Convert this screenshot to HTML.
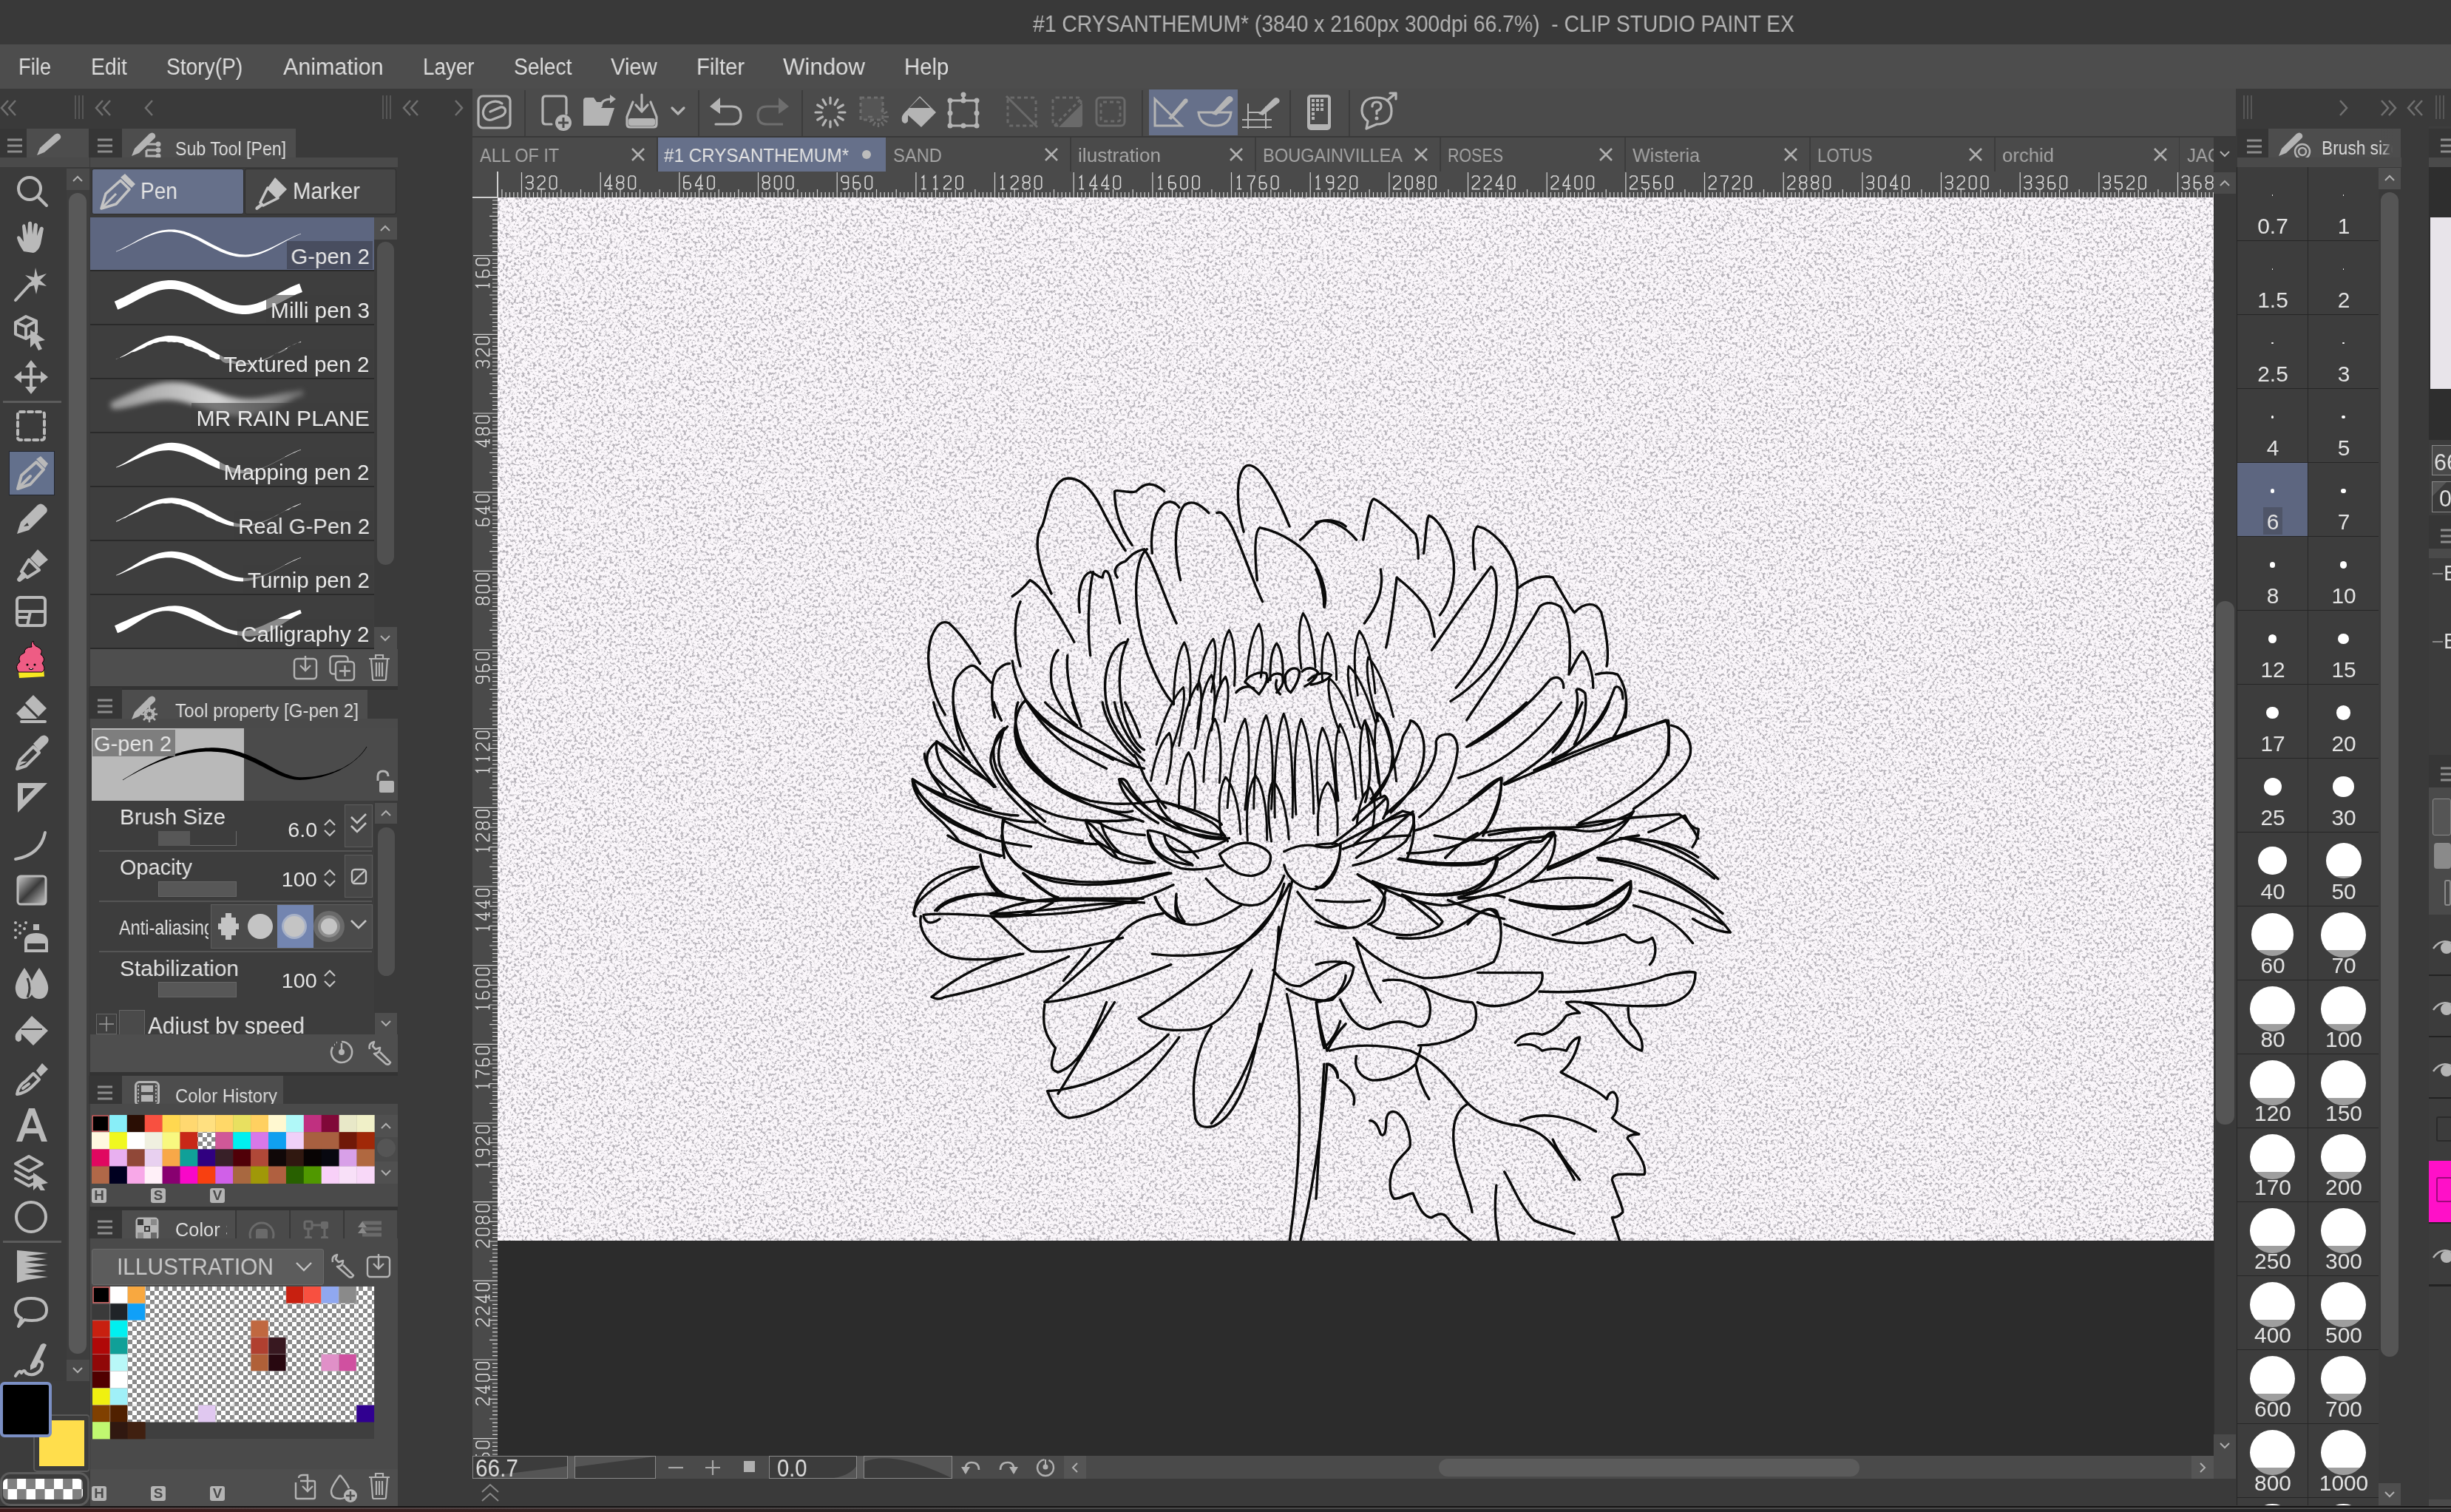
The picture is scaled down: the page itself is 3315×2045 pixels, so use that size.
<!DOCTYPE html><html><head><meta charset="utf-8"><style>
html,body{margin:0;padding:0}
body{width:3315px;height:2045px;overflow:hidden;position:relative;background:#3a3a3a;font-family:'Liberation Sans',sans-serif}
body>div,body>span,body>svg{position:absolute;white-space:nowrap;line-height:1}
body>span,.tx{will-change:transform}
</style></head><body>
<div style="left:0px;top:0px;width:3315px;height:60px;background:#393939;"></div>
<span id="t0" style="left:1397px;top:17.1px;font-size:30.43px;font-family:'Liberation Sans';color:#b4b4b4;transform:scaleX(0.9305);transform-origin:left 0;">#1 CRYSANTHEMUM* (3840 x 2160px 300dpi 66.7%)&nbsp; - CLIP STUDIO PAINT EX</span>
<div style="left:0px;top:60px;width:3315px;height:60px;background:#4d4d4d;"></div>
<span id="t1" style="left:25px;top:74.9px;font-size:31.88px;font-family:'Liberation Sans';color:#dcdcdc;transform:scaleX(0.8564);transform-origin:left 0;">File</span>
<span id="t2" style="left:122.5px;top:74.9px;font-size:31.88px;font-family:'Liberation Sans';color:#dcdcdc;transform:scaleX(0.8901);transform-origin:left 0;">Edit</span>
<span id="t3" style="left:225.3px;top:74.9px;font-size:31.88px;font-family:'Liberation Sans';color:#dcdcdc;transform:scaleX(0.8829);transform-origin:left 0;">Story(P)</span>
<span id="t4" style="left:383px;top:74.9px;font-size:31.88px;font-family:'Liberation Sans';color:#dcdcdc;transform:scaleX(0.9566);transform-origin:left 0;">Animation</span>
<span id="t5" style="left:572.3px;top:74.9px;font-size:31.88px;font-family:'Liberation Sans';color:#dcdcdc;transform:scaleX(0.8716);transform-origin:left 0;">Layer</span>
<span id="t6" style="left:694.8px;top:74.9px;font-size:31.88px;font-family:'Liberation Sans';color:#dcdcdc;transform:scaleX(0.8861);transform-origin:left 0;">Select</span>
<span id="t7" style="left:826px;top:74.9px;font-size:31.88px;font-family:'Liberation Sans';color:#dcdcdc;transform:scaleX(0.9151);transform-origin:left 0;">View</span>
<span id="t8" style="left:941.6px;top:74.9px;font-size:31.88px;font-family:'Liberation Sans';color:#dcdcdc;transform:scaleX(0.9189);transform-origin:left 0;">Filter</span>
<span id="t9" style="left:1059px;top:74.9px;font-size:31.88px;font-family:'Liberation Sans';color:#dcdcdc;transform:scaleX(0.9791);transform-origin:left 0;">Window</span>
<span id="t10" style="left:1222.7px;top:74.9px;font-size:31.88px;font-family:'Liberation Sans';color:#dcdcdc;transform:scaleX(0.9197);transform-origin:left 0;">Help</span>
<div style="left:0px;top:120px;width:639px;height:51px;background:#3a3a3a;"></div>
<div style="left:3024px;top:120px;width:291px;height:51px;background:#3a3a3a;"></div>
<svg style="left:0px;top:134px;" width="24" height="24" viewBox="0 0 24 24"><path d="M11 2 L2 12 L11 22" fill="none" stroke="#707070" stroke-width="2.6"/><path d="M21 2 L12 12 L21 22" fill="none" stroke="#707070" stroke-width="2.6"/></svg>
<svg style="left:100px;top:129px;" width="14" height="32" viewBox="0 0 14 32"><path d="M2 0 L2 32 M7 0 L7 32 M12 0 L12 32" stroke="#6a6a6a" stroke-width="1.2"/></svg>
<svg style="left:128px;top:134px;" width="24" height="24" viewBox="0 0 24 24"><path d="M11 2 L2 12 L11 22" fill="none" stroke="#707070" stroke-width="2.6"/><path d="M21 2 L12 12 L21 22" fill="none" stroke="#707070" stroke-width="2.6"/></svg>
<svg style="left:195px;top:134px;" width="24" height="24" viewBox="0 0 24 24"><path d="M11 2 L2 12 L11 22" fill="none" stroke="#707070" stroke-width="2.6"/></svg>
<svg style="left:516px;top:129px;" width="14" height="32" viewBox="0 0 14 32"><path d="M2 0 L2 32 M7 0 L7 32 M12 0 L12 32" stroke="#6a6a6a" stroke-width="1.2"/></svg>
<svg style="left:544px;top:134px;" width="24" height="24" viewBox="0 0 24 24"><path d="M11 2 L2 12 L11 22" fill="none" stroke="#707070" stroke-width="2.6"/><path d="M21 2 L12 12 L21 22" fill="none" stroke="#707070" stroke-width="2.6"/></svg>
<svg style="left:614px;top:134px;" width="24" height="24" viewBox="0 0 24 24"><path d="M2 2 L11 12 L2 22" fill="none" stroke="#707070" stroke-width="2.6"/></svg>
<svg style="left:3033px;top:129px;" width="14" height="32" viewBox="0 0 14 32"><path d="M2 0 L2 32 M7 0 L7 32 M12 0 L12 32" stroke="#6a6a6a" stroke-width="1.2"/></svg>
<svg style="left:3163px;top:134px;" width="24" height="24" viewBox="0 0 24 24"><path d="M2 2 L11 12 L2 22" fill="none" stroke="#707070" stroke-width="2.6"/></svg>
<svg style="left:3219px;top:134px;" width="24" height="24" viewBox="0 0 24 24"><path d="M2 2 L11 12 L2 22" fill="none" stroke="#707070" stroke-width="2.6"/><path d="M12 2 L21 12 L12 22" fill="none" stroke="#707070" stroke-width="2.6"/></svg>
<svg style="left:3255px;top:134px;" width="24" height="24" viewBox="0 0 24 24"><path d="M11 2 L2 12 L11 22" fill="none" stroke="#707070" stroke-width="2.6"/><path d="M21 2 L12 12 L21 22" fill="none" stroke="#707070" stroke-width="2.6"/></svg>
<svg style="left:3293px;top:129px;" width="14" height="32" viewBox="0 0 14 32"><path d="M2 0 L2 32 M7 0 L7 32 M12 0 L12 32" stroke="#6a6a6a" stroke-width="1.2"/></svg>
<div style="left:639px;top:120px;width:2385px;height:65px;background:#4b4b4b;"></div>
<div style="left:639px;top:184px;width:2385px;height:2px;background:#393939;"></div>
<div style="left:709px;top:122px;width:1.5px;height:62px;background:#3c3c3c;"></div>
<div style="left:944px;top:122px;width:1.5px;height:62px;background:#3c3c3c;"></div>
<div style="left:1084px;top:122px;width:1.5px;height:62px;background:#3c3c3c;"></div>
<div style="left:1544px;top:122px;width:1.5px;height:62px;background:#3c3c3c;"></div>
<div style="left:1744px;top:122px;width:1.5px;height:62px;background:#3c3c3c;"></div>
<div style="left:1824px;top:122px;width:1.5px;height:62px;background:#3c3c3c;"></div>
<div style="left:1554px;top:121px;width:120px;height:62px;background:#66708a;"></div>
<svg style="left:641px;top:124px;" width="56" height="56" viewBox="0 0 56 56"><rect x="6" y="6" width="43" height="43" rx="6" fill="none" stroke="#b4b4b4" stroke-width="3.2" stroke-linecap="round" stroke-linejoin="round"/><path d="M38 16 C30 10 18 14 14 22 C10 30 14 40 24 38 L37 33 C45 29 44 20 36 21 L22 27" fill="none" stroke="#b4b4b4" stroke-width="3.2" stroke-linecap="round" stroke-linejoin="round" stroke-width="4.4"/></svg>
<svg style="left:726px;top:124px;" width="56" height="56" viewBox="0 0 56 56"><path d="M12 6 L36 6 Q40 6 40 10 L40 30 M12 6 Q8 6 8 10 L8 40 Q8 44 12 44 L20 44" fill="none" stroke="#b4b4b4" stroke-width="3.2" stroke-linecap="round" stroke-linejoin="round"/><circle cx="36" cy="42" r="11" fill="#b4b4b4"/><path d="M36 35 L36 49 M29 42 L43 42" stroke="#4b4b4b" stroke-width="3"/></svg>
<svg style="left:783px;top:124px;" width="56" height="56" viewBox="0 0 56 56"><path d="M6 46 L6 12 Q6 8 10 8 L20 8 L24 14 L30 14 L30 22 L48 22 L40 46 Z" fill="#b4b4b4"/><path d="M30 20 Q30 10 44 10" fill="none" stroke="#b4b4b4" stroke-width="3.2" stroke-linecap="round" stroke-linejoin="round"/><path d="M42 4 L50 10 L42 16 Z" fill="#b4b4b4"/></svg>
<svg style="left:842px;top:124px;" width="56" height="56" viewBox="0 0 56 56"><path d="M26 4 L26 26 M18 18 L26 27 L34 18" fill="none" stroke="#b4b4b4" stroke-width="3.2" stroke-linecap="round" stroke-linejoin="round"/><path d="M14 14 L6 34 L6 44 Q6 48 10 48 L42 48 Q46 48 46 44 L46 34 L38 14" fill="none" stroke="#b4b4b4" stroke-width="3.2" stroke-linecap="round" stroke-linejoin="round"/><rect x="8" y="36" width="36" height="10" rx="3" fill="#b4b4b4"/></svg>
<svg style="left:899px;top:124px;" width="36" height="56" viewBox="0 0 36 56"><path d="M10 22 L18 30 L26 22" fill="none" stroke="#b4b4b4" stroke-width="3.2" stroke-linecap="round" stroke-linejoin="round"/></svg>
<svg style="left:956px;top:124px;" width="56" height="56" viewBox="0 0 56 56"><path d="M18 8 L4 20 L18 30 Z" fill="#b4b4b4"/><path d="M16 20 L34 20 Q46 20 46 32 Q46 44 34 44 L12 44" fill="none" stroke="#b4b4b4" stroke-width="3.2" stroke-linecap="round" stroke-linejoin="round"/></svg>
<svg style="left:1015px;top:124px;" width="56" height="56" viewBox="0 0 56 56"><path d="M38 8 L52 20 L38 30 Z" fill="#6e6e6e"/><path d="M40 20 L22 20 Q10 20 10 32 Q10 44 22 44 L44 44" fill="none" stroke="#6e6e6e" stroke-width="3.2"/></svg>
<svg style="left:1095px;top:124px;" width="56" height="56" viewBox="0 0 56 56"><path d="M40.0 28.0 L48.0 28.0" fill="none" stroke="#b4b4b4" stroke-width="3.2" stroke-linecap="round" stroke-linejoin="round"/><path d="M38.4 34.0 L45.3 38.0" fill="none" stroke="#b4b4b4" stroke-width="3.2" stroke-linecap="round" stroke-linejoin="round"/><path d="M34.0 38.4 L38.0 45.3" fill="none" stroke="#b4b4b4" stroke-width="3.2" stroke-linecap="round" stroke-linejoin="round"/><path d="M28.0 40.0 L28.0 48.0" fill="none" stroke="#b4b4b4" stroke-width="3.2" stroke-linecap="round" stroke-linejoin="round"/><path d="M22.0 38.4 L18.0 45.3" fill="none" stroke="#b4b4b4" stroke-width="3.2" stroke-linecap="round" stroke-linejoin="round"/><path d="M17.6 34.0 L10.7 38.0" fill="none" stroke="#b4b4b4" stroke-width="3.2" stroke-linecap="round" stroke-linejoin="round"/><path d="M16.0 28.0 L8.0 28.0" fill="none" stroke="#b4b4b4" stroke-width="3.2" stroke-linecap="round" stroke-linejoin="round"/><path d="M17.6 22.0 L10.7 18.0" fill="none" stroke="#b4b4b4" stroke-width="3.2" stroke-linecap="round" stroke-linejoin="round"/><path d="M22.0 17.6 L18.0 10.7" fill="none" stroke="#b4b4b4" stroke-width="3.2" stroke-linecap="round" stroke-linejoin="round"/><path d="M28.0 16.0 L28.0 8.0" fill="none" stroke="#b4b4b4" stroke-width="3.2" stroke-linecap="round" stroke-linejoin="round"/><path d="M34.0 17.6 L38.0 10.7" fill="none" stroke="#b4b4b4" stroke-width="3.2" stroke-linecap="round" stroke-linejoin="round"/><path d="M38.4 22.0 L45.3 18.0" fill="none" stroke="#b4b4b4" stroke-width="3.2" stroke-linecap="round" stroke-linejoin="round"/></svg>
<svg style="left:1156px;top:124px;" width="56" height="56" viewBox="0 0 56 56"><rect x="8" y="8" width="30" height="30" fill="#555" stroke="#6e6e6e" stroke-width="3" stroke-dasharray="5 4"/><path d="M36.0 27.1 L39.0 21.9" stroke="#6e6e6e" stroke-width="2.5"/><path d="M38.9 30.0 L44.1 27.0" stroke="#6e6e6e" stroke-width="2.5"/><path d="M40.0 34.0 L46.0 34.0" stroke="#6e6e6e" stroke-width="2.5"/><path d="M38.9 38.0 L44.1 41.0" stroke="#6e6e6e" stroke-width="2.5"/><path d="M36.0 40.9 L39.0 46.1" stroke="#6e6e6e" stroke-width="2.5"/><path d="M32.0 42.0 L32.0 48.0" stroke="#6e6e6e" stroke-width="2.5"/><path d="M28.0 40.9 L25.0 46.1" stroke="#6e6e6e" stroke-width="2.5"/><path d="M25.1 38.0 L19.9 41.0" stroke="#6e6e6e" stroke-width="2.5"/><path d="M24.0 34.0 L18.0 34.0" stroke="#6e6e6e" stroke-width="2.5"/></svg>
<svg style="left:1216px;top:124px;" width="56" height="56" viewBox="0 0 56 56"><path d="M28 6 L50 28 L30 48 L8 28 Z" fill="#b4b4b4"/><path d="M10 26 Q2 32 4 40 Q8 46 12 40 L12 28 Z" fill="#b4b4b4"/><path d="M14 22 L42 22 L28 8 Z" fill="#4b4b4b"/></svg>
<svg style="left:1275px;top:124px;" width="56" height="56" viewBox="0 0 56 56"><rect x="10" y="12" width="36" height="34" fill="none" stroke="#b4b4b4" stroke-width="3.2" stroke-linecap="round" stroke-linejoin="round" stroke-width="2.5"/><circle cx="10" cy="12" r="3.5" fill="#b4b4b4"/><circle cx="28" cy="12" r="3.5" fill="#b4b4b4"/><circle cx="46" cy="12" r="3.5" fill="#b4b4b4"/><circle cx="10" cy="46" r="3.5" fill="#b4b4b4"/><circle cx="28" cy="46" r="3.5" fill="#b4b4b4"/><circle cx="46" cy="46" r="3.5" fill="#b4b4b4"/><circle cx="10" cy="29" r="3.5" fill="#b4b4b4"/><circle cx="46" cy="29" r="3.5" fill="#b4b4b4"/><circle cx="28" cy="4" r="3.5" fill="#b4b4b4"/><path d="M28 4 L28 12" fill="none" stroke="#b4b4b4" stroke-width="3.2" stroke-linecap="round" stroke-linejoin="round" stroke-width="2.5"/></svg>
<svg style="left:1355px;top:124px;" width="56" height="56" viewBox="0 0 56 56"><rect x="8" y="8" width="38" height="38" rx="4" fill="none" stroke="#6a6a6a" stroke-width="3" stroke-dasharray="5 4"/><path d="M6 6 L48 48" stroke="#6a6a6a" stroke-width="3"/></svg>
<svg style="left:1416px;top:124px;" width="56" height="56" viewBox="0 0 56 56"><rect x="8" y="8" width="38" height="38" rx="4" fill="none" stroke="#6a6a6a" stroke-width="3" stroke-dasharray="5 4"/><path d="M10 46 L46 10" stroke="#6a6a6a" stroke-width="3" stroke-dasharray="5 4"/><path d="M16 48 L48 16 L48 44 Q48 48 44 48 Z" fill="#6a6a6a"/></svg>
<svg style="left:1475px;top:124px;" width="56" height="56" viewBox="0 0 56 56"><rect x="8" y="8" width="38" height="38" rx="5" fill="none" stroke="#6a6a6a" stroke-width="3"/><rect x="14" y="14" width="26" height="26" rx="3" fill="none" stroke="#6a6a6a" stroke-width="3" stroke-dasharray="5 4"/></svg>
<svg style="left:1554px;top:124px;" width="56" height="56" viewBox="0 0 56 56"><path d="M8 10 L8 46 L44 46 Z" fill="none" stroke="#b4b4b4" stroke-width="3"/><path d="M26 36 L46 12 Q48 8 52 10 Q54 14 50 16 L30 38 Z" fill="#b4b4b4"/></svg>
<svg style="left:1615px;top:124px;" width="56" height="56" viewBox="0 0 56 56"><path d="M6 28 L50 28 Q48 46 28 46 Q8 46 6 28 Z" fill="none" stroke="#b4b4b4" stroke-width="3"/><path d="M24 30 L44 8 Q48 4 52 8 Q54 12 50 14 L30 32 Z" fill="#b4b4b4"/></svg>
<svg style="left:1676px;top:124px;" width="56" height="56" viewBox="0 0 56 56"><path d="M4 38 L44 38 M12 16 L12 50 M36 20 L36 50 M4 48 L44 48 M12 28 L36 28" fill="none" stroke="#b4b4b4" stroke-width="2"/><path d="M26 30 L46 10 Q50 6 54 10 Q56 14 52 16 L32 32 Z" fill="#b4b4b4"/></svg>
<svg style="left:1756px;top:124px;" width="56" height="56" viewBox="0 0 56 56"><rect x="12" y="4" width="32" height="48" rx="5" fill="#b4b4b4"/><rect x="16" y="8" width="24" height="36" fill="#4b4b4b"/><rect x="18" y="10" width="4" height="4" fill="#b4b4b4"/><rect x="24" y="10" width="4" height="4" fill="#b4b4b4"/><rect x="30" y="10" width="4" height="4" fill="#b4b4b4"/><rect x="18" y="16" width="4" height="4" fill="#b4b4b4"/><rect x="24" y="16" width="4" height="4" fill="#b4b4b4"/><rect x="30" y="16" width="4" height="4" fill="#b4b4b4"/><rect x="18" y="22" width="4" height="4" fill="#b4b4b4"/><rect x="24" y="22" width="4" height="4" fill="#b4b4b4"/><rect x="18" y="28" width="4" height="4" fill="#b4b4b4"/><rect x="30" y="22" width="4" height="4" fill="#b4b4b4"/><rect x="18" y="34" width="4" height="4" fill="#b4b4b4"/></svg>
<svg style="left:1836px;top:124px;" width="56" height="56" viewBox="0 0 56 56"><path d="M26 8 Q46 8 46 26 Q46 44 26 44 L12 50 L14 40 Q6 34 6 26 Q6 8 26 8 Z" fill="none" stroke="#b4b4b4" stroke-width="3.2" stroke-linecap="round" stroke-linejoin="round"/><path d="M20 20 Q20 14 26 14 Q32 14 32 20 Q32 24 26 26 L26 30" fill="none" stroke="#b4b4b4" stroke-width="3.2" stroke-linecap="round" stroke-linejoin="round"/><circle cx="26" cy="36" r="2.5" fill="#b4b4b4"/><path d="M40 12 L52 2 M44 2 L52 2 L52 10" fill="none" stroke="#b4b4b4" stroke-width="3.2" stroke-linecap="round" stroke-linejoin="round" stroke-width="2.5"/></svg>
<div style="left:639px;top:186px;width:2355px;height:46px;background:#4a4a4a;"></div>
<div style="left:2994px;top:186px;width:30px;height:46px;background:#3a3a3a;"></div>
<div style="left:888px;top:186px;width:310px;height:46px;background:#66708a;"></div>
<span id="t11" style="left:649px;top:197.3px;font-size:26.09px;font-family:'Liberation Sans';color:#a4a4a4;transform:scaleX(0.8968);transform-origin:left 0;">ALL OF IT</span>
<div style="left:888px;top:186px;width:1.5px;height:46px;background:#3c3c3c;"></div>
<svg style="left:852px;top:198px;" width="22" height="22" viewBox="0 0 22 22"><path d="M3 3 L19 19 M19 3 L3 19" stroke="#b0b0b0" stroke-width="2.6"/></svg>
<span id="t12" style="left:1208px;top:197.3px;font-size:26.09px;font-family:'Liberation Sans';color:#a4a4a4;transform:scaleX(0.9107);transform-origin:left 0;">SAND</span>
<div style="left:1447px;top:186px;width:1.5px;height:46px;background:#3c3c3c;"></div>
<svg style="left:1411px;top:198px;" width="22" height="22" viewBox="0 0 22 22"><path d="M3 3 L19 19 M19 3 L3 19" stroke="#b0b0b0" stroke-width="2.6"/></svg>
<span id="t13" style="left:1458px;top:197.3px;font-size:26.09px;font-family:'Liberation Sans';color:#a4a4a4;transform:scaleX(1.0035);transform-origin:left 0;">ilustration</span>
<div style="left:1697px;top:186px;width:1.5px;height:46px;background:#3c3c3c;"></div>
<svg style="left:1661px;top:198px;" width="22" height="22" viewBox="0 0 22 22"><path d="M3 3 L19 19 M19 3 L3 19" stroke="#b0b0b0" stroke-width="2.6"/></svg>
<span id="t14" style="left:1708px;top:197.3px;font-size:26.09px;font-family:'Liberation Sans';color:#a4a4a4;transform:scaleX(0.9056);transform-origin:left 0;">BOUGAINVILLEA</span>
<div style="left:1947px;top:186px;width:1.5px;height:46px;background:#3c3c3c;"></div>
<svg style="left:1911px;top:198px;" width="22" height="22" viewBox="0 0 22 22"><path d="M3 3 L19 19 M19 3 L3 19" stroke="#b0b0b0" stroke-width="2.6"/></svg>
<span id="t15" style="left:1958px;top:197.3px;font-size:26.09px;font-family:'Liberation Sans';color:#a4a4a4;transform:scaleX(0.8214);transform-origin:left 0;">ROSES</span>
<div style="left:2197px;top:186px;width:1.5px;height:46px;background:#3c3c3c;"></div>
<svg style="left:2161px;top:198px;" width="22" height="22" viewBox="0 0 22 22"><path d="M3 3 L19 19 M19 3 L3 19" stroke="#b0b0b0" stroke-width="2.6"/></svg>
<span id="t16" style="left:2208px;top:197.3px;font-size:26.09px;font-family:'Liberation Sans';color:#a4a4a4;transform:scaleX(0.9662);transform-origin:left 0;">Wisteria</span>
<div style="left:2447px;top:186px;width:1.5px;height:46px;background:#3c3c3c;"></div>
<svg style="left:2411px;top:198px;" width="22" height="22" viewBox="0 0 22 22"><path d="M3 3 L19 19 M19 3 L3 19" stroke="#b0b0b0" stroke-width="2.6"/></svg>
<span id="t17" style="left:2458px;top:197.3px;font-size:26.09px;font-family:'Liberation Sans';color:#a4a4a4;transform:scaleX(0.8568);transform-origin:left 0;">LOTUS</span>
<div style="left:2697px;top:186px;width:1.5px;height:46px;background:#3c3c3c;"></div>
<svg style="left:2661px;top:198px;" width="22" height="22" viewBox="0 0 22 22"><path d="M3 3 L19 19 M19 3 L3 19" stroke="#b0b0b0" stroke-width="2.6"/></svg>
<span id="t18" style="left:2708px;top:197.3px;font-size:26.09px;font-family:'Liberation Sans';color:#a4a4a4;transform:scaleX(0.9855);transform-origin:left 0;">orchid</span>
<div style="left:2947px;top:186px;width:1.5px;height:46px;background:#3c3c3c;"></div>
<svg style="left:2911px;top:198px;" width="22" height="22" viewBox="0 0 22 22"><path d="M3 3 L19 19 M19 3 L3 19" stroke="#b0b0b0" stroke-width="2.6"/></svg>
<span id="t19" style="left:898px;top:197.3px;font-size:26.09px;font-family:'Liberation Sans';color:#e2e2e2;transform:scaleX(0.9292);transform-origin:left 0;">#1 CRYSANTHEMUM*</span>
<svg style="left:1162px;top:199px;" width="20" height="20" viewBox="0 0 20 20"><circle cx="10" cy="10" r="6" fill="#bcbcbc"/></svg>
<div style="left:2948px;top:186px;width:46px;height:46px;background:#4a4a4a;"></div>
<span id="t20" style="left:2958px;top:197.3px;font-size:26.09px;font-family:'Liberation Sans';color:#a4a4a4;transform:scaleX(0.9131);transform-origin:left 0;">JAC</span>
<div style="left:2994px;top:186px;width:30px;height:46px;background:#3a3a3a;"></div>
<svg style="left:2999px;top:198px;" width="20" height="20" viewBox="0 0 20 20"><path d="M4 7 L10 13 L16 7" fill="none" stroke="#b0b0b0" stroke-width="2"/></svg>
<div style="left:0px;top:171px;width:121px;height:1867px;background:#3a3a3a;"></div>
<div style="left:0px;top:174px;width:36px;height:39px;background:#363636;"></div>
<svg style="left:6px;top:183px;" width="28" height="26" viewBox="0 0 28 26"><path d="M4 6 L24 6 M4 14 L24 14 M4 22 L24 22" stroke="#8c8c8c" stroke-width="3"/></svg>
<div style="left:36px;top:174px;width:84px;height:39px;background:#4d4d4d;"></div>
<svg style="left:46px;top:178px;" width="40" height="34" viewBox="0 0 40 34"><path d="M4 32 L8 22 L28 4 Q32 1 35 4 Q38 8 34 11 L14 28 Z" fill="#b4b4b4"/></svg>
<div style="left:69px;top:191px;width:3px;height:3px;background:#b4b4b4;"></div>
<div style="left:0px;top:213px;width:121px;height:13px;background:#4a4a4a;"></div>
<div style="left:0px;top:226px;width:90px;height:1644px;background:#3b3b3b;"></div>
<div style="left:90px;top:228px;width:31px;height:1640px;background:#3e3e3e;"></div>
<div style="left:90px;top:228px;width:31px;height:29px;background:#4a4a4a;"></div>
<svg style="left:95px;top:232px;" width="20" height="20" viewBox="0 0 20 20"><path d="M4 13 L10 7 L16 13" fill="none" stroke="#b0b0b0" stroke-width="2"/></svg>
<div style="left:93px;top:261px;width:24px;height:1570px;background:#595959;border-radius:12px"></div>
<div style="left:90px;top:1839px;width:31px;height:29px;background:#4a4a4a;"></div>
<svg style="left:95px;top:1843px;" width="20" height="20" viewBox="0 0 20 20"><path d="M4 7 L10 13 L16 7" fill="none" stroke="#b0b0b0" stroke-width="2"/></svg>
<div style="left:4px;top:542px;width:79px;height:2.5px;background:#5c5c5c;"></div>
<div style="left:4px;top:1678px;width:79px;height:2.5px;background:#5c5c5c;"></div>
<div style="left:12px;top:610px;width:62px;height:60px;background:#63708c;box-sizing:border-box;border:1.5px solid #22262e"></div>
<svg style="left:15px;top:231px;" width="54" height="54" viewBox="0 0 54 54"><circle cx="25" cy="24" r="15" fill="none" stroke="#b9b9b9" stroke-width="4" stroke-linecap="round" stroke-linejoin="round"/><path d="M36 35 L48 47" fill="none" stroke="#b9b9b9" stroke-width="4" stroke-linecap="round" stroke-linejoin="round" stroke-width="5"/></svg>
<svg style="left:15px;top:294px;" width="54" height="54" viewBox="0 0 54 54"><path d="M17 46 Q10 36 8 28 Q8 24 12 26 L17 33 L15 12 Q16 8 19 10 L22 24 L23 7 Q26 4 28 7 L29 23 L31 9 Q34 6 36 10 L35 25 L39 14 Q42 11 44 15 L40 36 Q37 46 30 48 Z" fill="#b9b9b9"/></svg>
<svg style="left:15px;top:356px;" width="54" height="54" viewBox="0 0 54 54"><path d="M6 50 L26 28" fill="none" stroke="#b9b9b9" stroke-width="4" stroke-linecap="round" stroke-linejoin="round" stroke-width="3"/><path d="M33 6 L36 18 L48 14 L39 23 L48 31 L37 29 L34 42 L31 30 L20 33 L28 24 L19 16 L31 19 Z" fill="#b9b9b9"/></svg>
<svg style="left:15px;top:420px;" width="54" height="54" viewBox="0 0 54 54"><path d="M6 16 L20 8 L34 14 L34 30 L20 38 L6 32 Z M6 16 L20 22 L34 14 M20 22 L20 38" fill="none" stroke="#b9b9b9" stroke-width="4" stroke-linecap="round" stroke-linejoin="round" stroke-width="3"/><path d="M26 26 L46 40 L37 42 L42 52 L37 54 L32 44 L26 50 Z" fill="#b9b9b9"/></svg>
<svg style="left:15px;top:483px;" width="54" height="54" viewBox="0 0 54 54"><path d="M27 4 L35 14 L19 14 Z M27 50 L35 40 L19 40 Z M4 27 L14 19 L14 35 Z M50 27 L40 19 L40 35 Z" fill="#b9b9b9"/><path d="M27 12 L27 42 M12 27 L42 27" fill="none" stroke="#b9b9b9" stroke-width="4" stroke-linecap="round" stroke-linejoin="round"/></svg>
<svg style="left:15px;top:549px;" width="54" height="54" viewBox="0 0 54 54"><rect x="9" y="8" width="36" height="38" rx="3" fill="none" stroke="#b9b9b9" stroke-width="4" stroke-linecap="round" stroke-linejoin="round" stroke-dasharray="6 5"/></svg>
<svg style="left:15px;top:613px;" width="54" height="54" viewBox="0 0 54 54"><path d="M9 48 L14 30 L34 12 L44 22 L26 42 Z" fill="none" stroke="#b9b9b9" stroke-width="4" stroke-linecap="round" stroke-linejoin="round" stroke-width="3.5"/><path d="M34 8 L40 4 L50 14 L46 20 Z" fill="#b9b9b9"/><path d="M11 46 L26 31" fill="none" stroke="#b9b9b9" stroke-width="4" stroke-linecap="round" stroke-linejoin="round" stroke-width="3"/></svg>
<svg style="left:15px;top:674px;" width="54" height="54" viewBox="0 0 54 54"><path d="M8 48 L13 32 L36 9 Q40 6 44 9 L48 13 Q50 17 47 20 L24 43 Z" fill="#b9b9b9"/><path d="M17 38 L22 33 L24 37" fill="#3b3b3b"/></svg>
<svg style="left:15px;top:737px;" width="54" height="54" viewBox="0 0 54 54"><path d="M14 36 L24 20 L38 34 L22 44 Z" fill="none" stroke="#b9b9b9" stroke-width="4" stroke-linecap="round" stroke-linejoin="round" stroke-width="3.5"/><path d="M26 18 L36 6 L50 20 L38 30 Z" fill="#b9b9b9"/><path d="M14 38 L8 46 Q8 50 12 50 L20 44" fill="#b9b9b9"/></svg>
<svg style="left:15px;top:801px;" width="54" height="54" viewBox="0 0 54 54"><rect x="8" y="7" width="38" height="38" rx="4" fill="none" stroke="#b9b9b9" stroke-width="4" stroke-linecap="round" stroke-linejoin="round" stroke-width="3.5"/><path d="M8 26 L46 26 M26 26 L22 45 M8 34 L23 34" fill="none" stroke="#b9b9b9" stroke-width="4" stroke-linecap="round" stroke-linejoin="round" stroke-width="3.5"/></svg>
<svg style="left:15px;top:865px;" width="54" height="54" viewBox="0 0 54 54"><path d="M10 44 L44 40 L45 50 L11 52 Z" fill="#f8e820"/><path d="M10 44 Q4 36 12 30 Q8 22 18 18 Q18 10 28 10 Q26 4 30 2 Q30 8 36 10 Q44 14 40 20 Q48 26 42 32 Q48 40 42 44 Z" fill="#ee5c84" stroke="#000" stroke-width="1"/><circle cx="22" cy="34" r="1.5" fill="#000"/><circle cx="32" cy="34" r="1.5" fill="#000"/><path d="M24 39 Q27 42 30 39" stroke="#000" stroke-width="1.2" fill="#fff"/></svg>
<svg style="left:15px;top:926px;" width="54" height="54" viewBox="0 0 54 54"><path d="M6 38 L30 14 L48 32 L34 46 L14 46 Z" fill="#b9b9b9"/><path d="M6 38 L18 26 L36 44" fill="none" stroke="#3b3b3b" stroke-width="3"/><path d="M14 50 L46 50" fill="none" stroke="#b9b9b9" stroke-width="4" stroke-linecap="round" stroke-linejoin="round" stroke-width="3"/></svg>
<svg style="left:15px;top:990px;" width="54" height="54" viewBox="0 0 54 54"><path d="M8 50 L12 38 L30 20 L38 28 L20 46 Z" fill="none" stroke="#b9b9b9" stroke-width="4" stroke-linecap="round" stroke-linejoin="round" stroke-width="3.5"/><path d="M10 46 L14 40 L22 40 Z" fill="#b9b9b9"/><path d="M30 16 L40 6 Q46 2 50 8 Q52 12 48 16 L38 26 Z" fill="#b9b9b9"/></svg>
<svg style="left:15px;top:1051px;" width="54" height="54" viewBox="0 0 54 54"><path d="M9 8 L49 8 L9 48 Z M16 15 L16 31 L32 15 Z" fill="#b9b9b9" fill-rule="evenodd"/></svg>
<svg style="left:15px;top:1114px;" width="54" height="54" viewBox="0 0 54 54"><path d="M6 48 Q40 42 46 12" fill="none" stroke="#b9b9b9" stroke-width="4" stroke-linecap="round" stroke-linejoin="round" stroke-width="3"/></svg>
<svg style="left:15px;top:1177px;" width="54" height="54" viewBox="0 0 54 54"><defs><linearGradient id="gg" x1="0" y1="0" x2="1" y2="1"><stop offset="0" stop-color="#c8c8c8"/><stop offset="0.5" stop-color="#3b3b3b"/><stop offset="1" stop-color="#c8c8c8"/></linearGradient></defs><rect x="9" y="8" width="38" height="38" rx="4" fill="url(#gg)" stroke="#b9b9b9" stroke-width="3"/></svg>
<svg style="left:15px;top:1240px;" width="54" height="54" viewBox="0 0 54 54"><g fill="#b9b9b9"><circle cx="6" cy="8" r="2"/><circle cx="12" cy="12" r="2"/><circle cx="6" cy="18" r="2"/><circle cx="18" cy="16" r="2"/><circle cx="12" cy="22" r="2"/><circle cx="6" cy="28" r="2"/><circle cx="20" cy="8" r="2"/></g><path d="M30 10 L38 10 L38 18 L30 18 Z" fill="#b9b9b9"/><path d="M18 34 Q18 22 34 22 Q50 22 50 34 L50 48 L18 48 Z" fill="#b9b9b9"/><rect x="22" y="36" width="24" height="8" fill="#3b3b3b"/></svg>
<svg style="left:15px;top:1303px;" width="54" height="54" viewBox="0 0 54 54"><path d="M18 6 Q4 26 6 36 Q8 48 18 48 Q28 48 30 36 Q32 26 18 6 Z M38 6 Q24 26 26 36 Q28 48 38 48 Q48 48 50 36 Q52 26 38 6 Z" fill="#b9b9b9"/><path d="M22 20 Q28 34 22 46" stroke="#3b3b3b" stroke-width="3" fill="none"/></svg>
<svg style="left:15px;top:1368px;" width="54" height="54" viewBox="0 0 54 54"><path d="M28 6 L50 26 L30 46 L10 26 Z" fill="#b9b9b9"/><path d="M12 24 Q4 30 6 38 Q10 44 14 38 L14 28 Z" fill="#b9b9b9"/><path d="M14 24 L42 24" stroke="#3b3b3b" stroke-width="2"/></svg>
<svg style="left:15px;top:1430px;" width="54" height="54" viewBox="0 0 54 54"><path d="M8 50 Q10 38 20 32 L30 22 L38 30 L28 40 Q20 48 8 50 Z" fill="none" stroke="#b9b9b9" stroke-width="4" stroke-linecap="round" stroke-linejoin="round" stroke-width="3.5"/><path d="M34 18 L42 8 L50 16 L40 26 Z" fill="#b9b9b9"/><path d="M16 42 L24 36" fill="none" stroke="#b9b9b9" stroke-width="4" stroke-linecap="round" stroke-linejoin="round" stroke-width="3"/></svg>
<svg style="left:15px;top:1494px;" width="54" height="54" viewBox="0 0 54 54"><path d="M24 5 L32 5 L49 50 L41 50 L37 39 L19 39 L15 50 L7 50 Z M21.5 32 L34.5 32 L28 14 Z" fill="#b9b9b9" fill-rule="evenodd"/></svg>
<svg style="left:15px;top:1556px;" width="54" height="54" viewBox="0 0 54 54"><path d="M6 18 L24 8 L42 18 L24 28 Z M6 28 L24 38 L32 34 M6 38 L24 48 L30 45" fill="none" stroke="#b9b9b9" stroke-width="4" stroke-linecap="round" stroke-linejoin="round" stroke-width="3"/><path d="M30 30 L50 44 L41 46 L46 54 L41 56 L36 48 L30 54 Z" fill="#b9b9b9"/></svg>
<svg style="left:15px;top:1619px;" width="54" height="54" viewBox="0 0 54 54"><circle cx="27" cy="27" r="20" fill="none" stroke="#b9b9b9" stroke-width="4" stroke-linecap="round" stroke-linejoin="round" stroke-width="3.5"/></svg>
<svg style="left:15px;top:1685px;" width="54" height="54" viewBox="0 0 54 54"><path d="M8 6 L50 10 L20 14 L48 18 L18 22 L50 26 L20 30 L48 34 L18 38 L50 42 L22 46 L8 50 Z" fill="#b9b9b9"/></svg>
<svg style="left:15px;top:1748px;" width="54" height="54" viewBox="0 0 54 54"><path d="M27 8 Q48 8 48 24 Q48 38 28 38 Q22 38 18 37 L10 46 L14 35 Q6 31 6 24 Q6 8 27 8 Z" fill="none" stroke="#b9b9b9" stroke-width="4" stroke-linecap="round" stroke-linejoin="round" stroke-width="3.5"/></svg>
<svg style="left:15px;top:1811px;" width="54" height="54" viewBox="0 0 54 54"><path d="M26 36 L40 8 Q44 4 48 8 L34 38 L26 42 Z" fill="#b9b9b9"/><path d="M6 50 Q12 40 14 46 Q18 40 20 46 Q30 52 40 42 Q46 30 36 30" fill="none" stroke="#b9b9b9" stroke-width="4" stroke-linecap="round" stroke-linejoin="round" stroke-width="3"/></svg>
<div style="left:0px;top:1868px;width:121px;height:170px;background:#3c3c3c;"></div>
<div style="left:47px;top:1915px;width:73px;height:74px;background:#ffde4c;box-sizing:border-box;border:6px solid #3c3c3c;outline:2px solid #5a5a5a;border-radius:3px"></div>
<div style="left:0px;top:1869px;width:70px;height:75px;background:#000000;box-sizing:border-box;border:4px solid #7b8fc4;border-radius:6px"></div>
<div style="left:0px;top:1991px;width:121px;height:46px;background:#3c3c3c;box-sizing:border-box;border:3px solid #5c5c5c;border-radius:14px"></div>
<svg style="left:4px;top:2000px;border-radius:6px" width="108" height="28" viewBox="0 0 108 28"><rect x="-6.0" y="0" width="12.5" height="14" fill="#ffffff"/><rect x="-6.0" y="14" width="12.5" height="14" fill="#808080"/><rect x="6.5" y="0" width="12.5" height="14" fill="#808080"/><rect x="6.5" y="14" width="12.5" height="14" fill="#ffffff"/><rect x="19.0" y="0" width="12.5" height="14" fill="#ffffff"/><rect x="19.0" y="14" width="12.5" height="14" fill="#808080"/><rect x="31.5" y="0" width="12.5" height="14" fill="#808080"/><rect x="31.5" y="14" width="12.5" height="14" fill="#ffffff"/><rect x="44.0" y="0" width="12.5" height="14" fill="#ffffff"/><rect x="44.0" y="14" width="12.5" height="14" fill="#808080"/><rect x="56.5" y="0" width="12.5" height="14" fill="#808080"/><rect x="56.5" y="14" width="12.5" height="14" fill="#ffffff"/><rect x="69.0" y="0" width="12.5" height="14" fill="#ffffff"/><rect x="69.0" y="14" width="12.5" height="14" fill="#808080"/><rect x="81.5" y="0" width="12.5" height="14" fill="#808080"/><rect x="81.5" y="14" width="12.5" height="14" fill="#ffffff"/><rect x="94.0" y="0" width="12.5" height="14" fill="#ffffff"/><rect x="94.0" y="14" width="12.5" height="14" fill="#808080"/><rect x="106.5" y="0" width="12.5" height="14" fill="#808080"/><rect x="106.5" y="14" width="12.5" height="14" fill="#ffffff"/></svg>
<div style="left:121px;top:171px;width:417px;height:707px;background:#3a3a3a;"></div>
<div style="left:120px;top:174px;width:45px;height:39px;background:#363636;"></div>
<svg style="left:128px;top:183px;" width="28" height="26" viewBox="0 0 28 26"><path d="M4 6 L24 6 M4 14 L24 14 M4 22 L24 22" stroke="#8c8c8c" stroke-width="3"/></svg>
<div style="left:165px;top:174px;width:235px;height:39px;background:#4d4d4d;"></div>
<div style="left:122px;top:213px;width:416px;height:13px;background:#4a4a4a;"></div>
<svg style="left:176px;top:177px;" width="44" height="36" viewBox="0 0 44 36"><path d="M2 34 L6 24 L26 4 Q30 1 33 4 Q36 8 32 11 L12 30 Z" fill="#b4b4b4"/><path d="M22 26 L22 34 L38 34 M22 26 L38 26 M22 18 L38 18" fill="none" stroke="#b4b4b4" stroke-width="3"/><circle cx="38" cy="18" r="3.5" fill="#b4b4b4"/><circle cx="38" cy="26" r="3.5" fill="#b4b4b4"/><circle cx="38" cy="34" r="3.5" fill="#b4b4b4"/></svg>
<span id="t21" style="left:237px;top:188.3px;font-size:26.09px;font-family:'Liberation Sans';color:#dcdcdc;transform:scaleX(0.8868);transform-origin:left 0;">Sub Tool [Pen]</span>
<div style="left:122px;top:226px;width:416px;height:68px;background:#3a3a3a;"></div>
<div style="left:124px;top:228px;width:206px;height:62px;background:#66708a;box-sizing:border-box;border:1px solid #2e2e2e;border-radius:3px"></div>
<div style="left:331px;top:228px;width:205px;height:62px;background:#464646;box-sizing:border-box;border:1px solid #2e2e2e;border-radius:3px"></div>
<svg style="left:133px;top:234px;" width="52" height="52" viewBox="0 0 52 52"><path d="M4 48 L10 28 L30 10 L42 22 L24 42 Z" fill="none" stroke="#c4c4c4" stroke-width="3.5" stroke-linejoin="round"/><path d="M30 6 L36 1 L50 15 L45 20 Z" fill="#c4c4c4"/><path d="M6 46 L24 28" stroke="#c4c4c4" stroke-width="3"/></svg>
<span id="t22" style="left:190px;top:243.0px;font-size:31.16px;font-family:'Liberation Sans';color:#e4e4e4;transform:scaleX(0.9019);transform-origin:left 0;">Pen</span>
<svg style="left:340px;top:234px;" width="52" height="52" viewBox="0 0 52 52"><path d="M12 40 L22 20 L36 34 L16 44 Z" fill="none" stroke="#c4c4c4" stroke-width="3.5" stroke-linejoin="round"/><path d="M22 20 L32 6 L48 22 L36 34 Z" fill="#c4c4c4"/><path d="M14 40 L6 46 Q4 50 8 50 L16 44" fill="#c4c4c4"/></svg>
<span id="t23" style="left:396px;top:243.0px;font-size:31.16px;font-family:'Liberation Sans';color:#e4e4e4;transform:scaleX(0.9387);transform-origin:left 0;">Marker</span>
<div style="left:122px;top:294px;width:384px;height:71px;background:#5d6680;"></div>
<div style="left:122px;top:365px;width:384px;height:2px;background:#2a2a2a;"></div>
<svg style="left:122px;top:294px;overflow:hidden" width="384" height="71" viewBox="0 0 384 71"><g transform="translate(-122,-294)"><path d="M157.1 340.5 L161.3 338.8 L165.5 336.9 L169.7 334.9 L173.9 332.8 L178.1 330.6 L182.3 328.5 L186.5 326.3 L190.7 324.3 L194.9 322.3 L199.0 320.4 L203.2 318.8 L207.4 317.3 L211.5 316.0 L215.6 315.0 L219.7 314.3 L223.8 313.8 L227.9 313.6 L231.9 313.6 L236.0 314.0 L240.0 314.6 L244.1 315.5 L248.1 316.6 L252.2 318.0 L256.3 319.6 L260.4 321.4 L264.5 323.3 L268.6 325.3 L272.7 327.5 L276.8 329.7 L281.0 331.9 L285.2 334.1 L289.4 336.3 L293.6 338.3 L297.8 340.3 L302.1 342.0 L306.3 343.6 L310.6 345.0 L314.9 346.0 L319.2 346.9 L323.5 347.4 L327.8 347.6 L332.1 347.6 L336.3 347.2 L340.6 346.5 L344.8 345.6 L349.0 344.4 L353.2 342.9 L357.4 341.3 L361.6 339.4 L365.7 337.4 L369.9 335.3 L374.0 333.0 L378.2 330.8 L382.3 328.5 L386.4 326.2 L390.5 324.0 L394.7 321.9 L398.8 319.9 L403.0 318.1 L407.1 316.5 L406.9 316.0 L402.7 317.5 L398.5 319.3 L394.3 321.2 L390.1 323.2 L385.9 325.3 L381.7 327.4 L377.5 329.6 L373.3 331.7 L369.1 333.7 L364.9 335.7 L360.8 337.5 L356.6 339.2 L352.4 340.7 L348.3 341.9 L344.2 342.9 L340.1 343.7 L336.0 344.2 L331.9 344.4 L327.9 344.3 L323.9 343.9 L319.8 343.3 L315.8 342.4 L311.7 341.3 L307.7 339.9 L303.6 338.3 L299.5 336.5 L295.4 334.6 L291.3 332.6 L287.1 330.4 L283.0 328.2 L278.8 326.0 L274.6 323.8 L270.4 321.6 L266.2 319.6 L262.0 317.7 L257.7 315.9 L253.5 314.4 L249.2 313.0 L244.9 312.0 L240.6 311.2 L236.3 310.6 L232.1 310.4 L227.8 310.5 L223.5 310.9 L219.3 311.6 L215.0 312.5 L210.8 313.7 L206.6 315.2 L202.5 316.9 L198.3 318.7 L194.1 320.8 L190.0 322.9 L185.8 325.1 L181.7 327.4 L177.6 329.7 L173.4 331.9 L169.3 334.1 L165.2 336.2 L161.0 338.2 L156.9 340.0 Z" fill="#ffffff"/></g></svg>
<div style="left:387.5px;top:326px;width:116.5px;height:38px;background:rgba(66,70,84,0.75);"></div>
<span id="t24" style="right:2815px;top:331.9px;font-size:29.57px;font-family:'Liberation Sans';color:#e8e8e8;transform:scaleX(0.9969);transform-origin:right 0;">G-pen 2</span>
<div style="left:122px;top:367px;width:384px;height:71px;background:#3e3e3e;"></div>
<div style="left:122px;top:438px;width:384px;height:2px;background:#2a2a2a;"></div>
<svg style="left:122px;top:367px;overflow:hidden" width="384" height="71" viewBox="0 0 384 71"><g transform="translate(-122,-367)"><path d="M159.2 418.8 L163.6 417.0 L167.9 415.0 L172.2 412.9 L176.4 410.7 L180.7 408.5 L184.8 406.2 L189.0 404.0 L193.0 401.9 L197.1 399.9 L201.1 398.1 L205.1 396.4 L209.0 394.9 L212.9 393.6 L216.7 392.6 L220.5 391.8 L224.3 391.3 L228.1 391.0 L231.8 391.0 L235.6 391.3 L239.3 391.8 L243.1 392.6 L247.0 393.6 L250.8 394.9 L254.8 396.3 L258.7 398.0 L262.7 399.9 L266.8 401.8 L270.9 404.0 L275.0 406.1 L279.2 408.4 L283.4 410.6 L287.6 412.8 L291.9 414.9 L296.2 416.9 L300.6 418.7 L305.0 420.4 L309.5 421.9 L313.9 423.1 L318.5 424.0 L323.0 424.6 L327.6 425.0 L332.2 425.0 L336.8 424.7 L341.3 424.0 L345.9 423.1 L350.4 421.9 L354.8 420.5 L359.2 418.8 L363.6 417.0 L367.9 415.0 L372.2 412.9 L376.4 410.7 L380.7 408.5 L384.8 406.2 L389.0 404.0 L393.0 401.9 L397.1 399.9 L401.1 398.1 L405.1 396.4 L409.0 394.9 L405.0 383.6 L400.6 385.3 L396.2 387.1 L391.9 389.1 L387.6 391.2 L383.4 393.4 L379.2 395.6 L375.0 397.9 L370.9 400.0 L366.8 402.2 L362.7 404.1 L358.7 406.0 L354.8 407.7 L350.8 409.1 L347.0 410.4 L343.1 411.4 L339.3 412.2 L335.6 412.7 L331.8 413.0 L328.1 413.0 L324.3 412.7 L320.5 412.2 L316.7 411.4 L312.9 410.4 L309.0 409.1 L305.1 407.6 L301.1 405.9 L297.1 404.1 L293.0 402.1 L289.0 400.0 L284.8 397.8 L280.7 395.5 L276.4 393.3 L272.2 391.1 L267.9 389.0 L263.6 387.0 L259.2 385.2 L254.8 383.5 L250.4 382.1 L245.9 380.9 L241.3 380.0 L236.8 379.3 L232.2 379.0 L227.6 379.0 L223.0 379.4 L218.5 380.0 L213.9 380.9 L209.5 382.1 L205.0 383.6 L200.6 385.3 L196.2 387.1 L191.9 389.1 L187.6 391.2 L183.4 393.4 L179.2 395.6 L175.0 397.9 L170.9 400.0 L166.8 402.2 L162.7 404.1 L158.7 406.0 L154.8 407.7 Z" fill="#ffffff"/></g></svg>
<div style="left:360px;top:399px;width:144px;height:38px;background:rgba(62,62,62,0.6);"></div>
<span id="t25" style="right:2815px;top:404.9px;font-size:29.57px;font-family:'Liberation Sans';color:#e8e8e8;transform:scaleX(1.0068);transform-origin:right 0;">Milli pen 3</span>
<div style="left:122px;top:440px;width:384px;height:71px;background:#3e3e3e;"></div>
<div style="left:122px;top:511px;width:384px;height:2px;background:#2a2a2a;"></div>
<svg style="left:122px;top:440px;overflow:hidden" width="384" height="71" viewBox="0 0 384 71"><g transform="translate(-122,-440)"><path d="M156.8 485.7 L160.9 484.0 L165.4 482.7 L169.7 480.9 L173.9 478.7 L178.0 476.4 L182.8 475.5 L187.1 473.5 L191.4 471.7 L195.7 470.0 L199.5 467.4 L203.8 466.2 L207.7 464.2 L211.9 463.4 L215.9 462.2 L220.0 462.0 L224.0 461.8 L228.0 462.8 L231.8 462.6 L235.7 463.1 L239.7 462.8 L243.6 463.7 L247.6 464.5 L251.0 467.3 L255.0 468.8 L259.4 469.5 L263.3 471.7 L267.8 472.9 L271.9 475.0 L276.4 476.5 L280.6 478.6 L284.0 482.3 L288.5 484.0 L292.9 485.9 L297.9 486.1 L301.5 489.5 L305.7 491.3 L310.7 490.7 L315.0 491.8 L319.2 492.6 L323.6 492.4 L327.8 493.2 L332.0 492.6 L336.4 493.5 L340.5 492.0 L344.8 491.6 L348.5 488.7 L352.8 487.7 L357.4 487.3 L361.5 485.3 L365.9 483.7 L369.6 480.8 L373.3 477.6 L378.4 477.3 L382.7 475.2 L386.8 473.0 L390.1 469.1 L394.4 467.2 L398.6 465.4 L402.7 463.4 L407.3 463.0 L406.9 462.0 L402.7 463.5 L398.5 465.3 L394.4 467.3 L390.2 469.3 L386.0 471.5 L381.9 473.7 L377.7 475.9 L373.5 478.1 L369.4 480.2 L365.2 482.3 L361.0 484.2 L356.9 486.0 L352.7 487.5 L348.6 488.9 L344.4 489.8 L340.2 490.4 L336.1 490.8 L332.0 490.8 L327.9 490.6 L323.8 490.0 L319.8 489.2 L315.8 488.1 L311.9 486.8 L307.9 485.3 L303.9 483.5 L299.9 481.6 L295.9 479.5 L291.9 477.3 L287.9 475.1 L283.8 472.7 L279.7 470.4 L275.5 468.1 L271.4 465.8 L267.1 463.6 L262.9 461.6 L258.6 459.8 L254.3 458.1 L249.9 456.7 L245.5 455.6 L241.0 454.8 L236.6 454.2 L232.1 454.0 L227.7 454.1 L223.3 454.6 L218.9 455.4 L214.5 456.4 L210.2 457.8 L206.0 459.4 L201.8 461.2 L197.6 463.2 L193.5 465.4 L189.4 467.7 L185.3 470.1 L181.2 472.5 L177.2 474.9 L173.1 477.4 L169.1 479.7 L165.0 482.0 L161.0 484.1 L156.9 486.0 Z" fill="#ffffff"/></g></svg>
<div style="left:297px;top:472px;width:207px;height:38px;background:rgba(62,62,62,0.6);"></div>
<span id="t26" style="right:2815px;top:477.9px;font-size:29.57px;font-family:'Liberation Sans';color:#e8e8e8;transform:scaleX(1.0073);transform-origin:right 0;">Textured pen 2</span>
<div style="left:122px;top:513px;width:384px;height:71px;background:#3e3e3e;"></div>
<div style="left:122px;top:584px;width:384px;height:2px;background:#2a2a2a;"></div>
<svg style="left:122px;top:513px;overflow:hidden" width="384" height="71" viewBox="0 0 384 71"><defs><filter id="bl" x="-20%" y="-50%" width="140%" height="200%"><feGaussianBlur stdDeviation="3.5"/></filter><linearGradient id="rg" x1="150" y1="0" x2="410" y2="0" gradientUnits="userSpaceOnUse"><stop offset="0" stop-color="#9a9a9a"/><stop offset="0.55" stop-color="#d4d4d4"/><stop offset="1" stop-color="#6a6a6a"/></linearGradient></defs><g transform="translate(-122,-513)"><path d="M150.8 552.8 L155.6 553.4 L160.3 553.0 L165.0 552.4 L169.6 551.5 L174.2 550.5 L178.8 549.5 L183.3 548.4 L187.7 547.3 L192.1 546.2 L196.4 545.2 L200.6 544.2 L204.8 543.3 L208.8 542.6 L212.8 542.0 L216.8 541.5 L220.7 541.2 L224.5 541.1 L228.3 541.1 L232.0 541.3 L235.8 541.6 L239.5 542.1 L243.3 542.7 L247.2 543.5 L251.0 544.5 L255.0 545.5 L259.0 546.7 L263.1 548.0 L267.2 549.4 L271.5 550.8 L275.8 552.3 L280.1 553.7 L284.6 555.2 L289.1 556.6 L293.7 557.9 L298.4 559.2 L303.1 560.2 L307.9 561.1 L312.7 561.9 L317.6 562.4 L322.5 562.7 L327.4 562.7 L332.2 562.5 L337.1 562.0 L341.9 561.3 L346.7 560.4 L351.4 559.3 L356.0 558.0 L360.5 556.5 L365.0 554.9 L369.4 553.1 L373.7 551.3 L378.0 549.4 L382.2 547.4 L386.3 545.4 L390.4 543.3 L394.4 541.2 L398.3 538.7 L402.4 537.0 L406.6 536.0 L410.8 535.0 L409.2 527.2 L404.7 528.2 L400.3 529.3 L395.7 530.1 L390.9 530.3 L386.3 531.0 L381.7 531.9 L377.2 532.9 L372.7 533.9 L368.3 534.9 L363.9 535.8 L359.7 536.7 L355.5 537.5 L351.4 538.2 L347.3 538.8 L343.3 539.2 L339.4 539.4 L335.6 539.5 L331.8 539.5 L328.0 539.2 L324.2 538.9 L320.4 538.3 L316.6 537.6 L312.8 536.8 L308.9 535.8 L305.0 534.7 L301.0 533.5 L296.9 532.1 L292.7 530.7 L288.5 529.2 L284.2 527.7 L279.9 526.2 L275.4 524.7 L270.9 523.3 L266.3 521.9 L261.7 520.6 L257.0 519.5 L252.2 518.5 L247.3 517.8 L242.5 517.2 L237.6 516.9 L232.6 516.8 L227.7 516.9 L222.9 517.3 L218.0 518.0 L213.2 518.9 L208.5 519.9 L203.8 521.2 L199.2 522.6 L194.7 524.2 L190.3 525.9 L185.9 527.7 L181.6 529.5 L177.4 531.4 L173.2 533.3 L169.1 535.1 L165.0 537.0 L161.0 538.8 L157.0 540.7 L153.0 542.5 L149.2 545.0 Z" fill="url(#rg)" filter="url(#bl)"/></g></svg>
<div style="left:259.4px;top:545px;width:244.6px;height:38px;background:rgba(62,62,62,0.6);"></div>
<span id="t27" style="right:2815px;top:550.9px;font-size:29.57px;font-family:'Liberation Sans';color:#e8e8e8;transform:scaleX(1.0201);transform-origin:right 0;">MR RAIN PLANE</span>
<div style="left:122px;top:586px;width:384px;height:71px;background:#3e3e3e;"></div>
<div style="left:122px;top:657px;width:384px;height:2px;background:#2a2a2a;"></div>
<svg style="left:122px;top:586px;overflow:hidden" width="384" height="71" viewBox="0 0 384 71"><g transform="translate(-122,-586)"><path d="M157.1 632.5 L161.4 630.9 L165.6 629.2 L169.9 627.4 L174.2 625.5 L178.6 623.5 L182.9 621.6 L187.2 619.7 L191.5 617.8 L195.7 616.1 L200.0 614.5 L204.1 613.1 L208.3 611.8 L212.3 610.8 L216.3 610.0 L220.3 609.5 L224.2 609.2 L228.0 609.1 L231.8 609.3 L235.6 609.7 L239.4 610.4 L243.2 611.2 L247.0 612.3 L250.9 613.6 L254.8 615.1 L258.8 616.8 L262.9 618.6 L266.9 620.5 L271.1 622.6 L275.3 624.6 L279.5 626.7 L283.8 628.8 L288.1 630.8 L292.5 632.7 L296.9 634.4 L301.3 636.0 L305.7 637.3 L310.2 638.5 L314.6 639.3 L319.0 639.9 L323.4 640.2 L327.8 640.2 L332.1 639.8 L336.3 639.2 L340.5 638.3 L344.7 637.2 L348.9 635.8 L353.0 634.2 L357.1 632.5 L361.3 630.8 L365.5 628.8 L369.6 626.8 L373.8 624.6 L378.0 622.4 L382.1 620.2 L386.3 618.0 L390.5 615.8 L394.6 613.8 L398.8 611.9 L402.9 610.1 L407.1 608.5 L406.9 608.0 L402.7 609.5 L398.5 611.3 L394.4 613.3 L390.2 615.3 L386.0 617.5 L381.9 619.7 L377.7 621.9 L373.5 624.1 L369.4 626.2 L365.2 628.3 L361.0 630.2 L356.9 632.0 L352.7 633.4 L348.5 634.5 L344.3 635.3 L340.1 635.9 L336.0 636.1 L331.9 636.1 L327.9 635.8 L323.9 635.1 L320.0 634.3 L316.1 633.1 L312.2 631.8 L308.3 630.2 L304.4 628.4 L300.4 626.4 L296.5 624.3 L292.5 622.1 L288.5 619.8 L284.5 617.4 L280.4 615.1 L276.2 612.7 L272.1 610.4 L267.8 608.3 L263.5 606.2 L259.2 604.4 L254.7 602.7 L250.3 601.3 L245.8 600.2 L241.3 599.4 L236.7 598.9 L232.2 598.8 L227.6 599.0 L223.2 599.5 L218.7 600.4 L214.3 601.5 L210.0 603.0 L205.7 604.7 L201.5 606.6 L197.4 608.7 L193.3 610.9 L189.2 613.3 L185.1 615.8 L181.1 618.3 L177.1 620.8 L173.1 623.3 L169.1 625.7 L165.0 627.9 L161.0 630.1 L156.9 632.0 Z" fill="#ffffff"/></g></svg>
<div style="left:297px;top:618px;width:207px;height:38px;background:rgba(62,62,62,0.6);"></div>
<span id="t28" style="right:2815px;top:623.9px;font-size:29.57px;font-family:'Liberation Sans';color:#e8e8e8;transform:scaleX(1.0072);transform-origin:right 0;">Mapping pen 2</span>
<div style="left:122px;top:659px;width:384px;height:71px;background:#3e3e3e;"></div>
<div style="left:122px;top:730px;width:384px;height:2px;background:#2a2a2a;"></div>
<svg style="left:122px;top:659px;overflow:hidden" width="384" height="71" viewBox="0 0 384 71"><g transform="translate(-122,-659)"><path d="M157.2 705.7 L161.4 704.0 L165.4 701.8 L169.9 700.2 L173.9 697.8 L178.3 696.1 L182.5 693.9 L187.0 692.3 L191.0 689.9 L195.3 688.3 L199.5 686.5 L203.7 685.0 L207.8 683.4 L211.9 682.3 L216.0 681.6 L220.0 680.8 L224.1 681.0 L228.0 680.8 L231.9 680.5 L235.8 681.2 L239.6 682.1 L243.6 682.4 L247.5 683.9 L251.5 685.0 L255.5 686.6 L259.4 688.6 L263.5 690.2 L267.4 692.6 L271.9 694.1 L276.0 696.3 L280.0 698.9 L284.4 700.6 L288.8 702.5 L292.9 704.8 L297.4 706.2 L301.7 708.0 L306.0 709.6 L310.4 710.7 L314.8 711.6 L319.1 712.4 L323.5 712.5 L327.8 713.0 L332.0 712.2 L336.3 711.7 L340.5 711.0 L344.7 710.0 L348.9 708.8 L353.0 707.2 L357.2 705.7 L361.4 704.0 L365.5 702.0 L369.5 699.5 L373.9 697.8 L377.8 695.1 L382.0 692.9 L386.1 690.7 L390.6 689.2 L394.5 686.6 L398.9 685.2 L403.0 683.2 L407.1 681.6 L406.9 681.0 L402.7 682.5 L398.5 684.3 L394.4 686.3 L390.2 688.3 L386.0 690.5 L381.9 692.7 L377.7 694.9 L373.5 697.1 L369.4 699.2 L365.2 701.3 L361.0 703.1 L356.8 704.8 L352.6 706.2 L348.4 707.4 L344.3 708.3 L340.1 708.9 L336.0 709.3 L331.9 709.3 L327.9 709.1 L323.9 708.6 L319.9 707.8 L315.9 706.7 L312.0 705.4 L308.0 703.9 L304.0 702.2 L300.0 700.3 L296.0 698.2 L292.0 696.1 L288.0 693.8 L283.9 691.5 L279.8 689.2 L275.6 686.9 L271.4 684.7 L267.2 682.6 L262.9 680.6 L258.6 678.8 L254.2 677.2 L249.9 675.8 L245.4 674.7 L241.0 673.9 L236.6 673.5 L232.1 673.3 L227.7 673.5 L223.3 674.0 L219.0 674.8 L214.6 675.8 L210.4 677.2 L206.1 678.8 L202.0 680.7 L197.8 682.7 L193.7 684.8 L189.6 687.1 L185.5 689.5 L181.4 691.9 L177.4 694.3 L173.3 696.7 L169.2 698.9 L165.1 701.1 L161.0 703.1 L156.9 705.0 Z" fill="#ffffff"/></g></svg>
<div style="left:316px;top:691px;width:188px;height:38px;background:rgba(62,62,62,0.6);"></div>
<span id="t29" style="right:2815px;top:696.9px;font-size:29.57px;font-family:'Liberation Sans';color:#e8e8e8;transform:scaleX(0.9938);transform-origin:right 0;">Real G-Pen 2</span>
<div style="left:122px;top:732px;width:384px;height:71px;background:#3e3e3e;"></div>
<div style="left:122px;top:803px;width:384px;height:2px;background:#2a2a2a;"></div>
<svg style="left:122px;top:732px;overflow:hidden" width="384" height="71" viewBox="0 0 384 71"><g transform="translate(-122,-732)"><path d="M157.1 778.5 L161.4 776.9 L165.6 775.2 L169.9 773.3 L174.2 771.4 L178.5 769.4 L182.8 767.4 L187.1 765.4 L191.3 763.5 L195.6 761.7 L199.8 760.0 L203.9 758.5 L208.1 757.2 L212.1 756.1 L216.2 755.3 L220.1 754.7 L224.1 754.3 L228.0 754.2 L231.9 754.3 L235.7 754.7 L239.6 755.4 L243.4 756.2 L247.3 757.4 L251.3 758.7 L255.2 760.2 L259.2 761.9 L263.3 763.8 L267.4 765.7 L271.5 767.8 L275.7 769.9 L279.9 772.1 L284.1 774.2 L288.4 776.3 L292.7 778.2 L297.1 780.0 L301.4 781.7 L305.8 783.1 L310.2 784.3 L314.6 785.3 L319.0 786.0 L323.4 786.3 L327.7 786.4 L332.1 786.1 L336.4 785.6 L340.6 784.7 L344.8 783.6 L349.0 782.3 L353.1 780.7 L357.3 778.9 L361.4 776.9 L365.5 774.8 L369.6 772.8 L373.8 770.6 L378.0 768.4 L382.1 766.2 L386.3 764.0 L390.5 761.8 L394.6 759.8 L398.8 757.9 L402.9 756.1 L407.1 754.5 L406.9 754.0 L402.7 755.5 L398.5 757.3 L394.4 759.3 L390.2 761.3 L386.0 763.5 L381.9 765.7 L377.7 767.9 L373.5 770.1 L369.4 772.2 L365.2 774.3 L361.0 776.1 L356.7 777.6 L352.5 779.0 L348.3 780.1 L344.2 780.9 L340.1 781.5 L336.0 781.8 L331.9 781.8 L327.9 781.5 L323.9 781.0 L320.0 780.2 L316.1 779.2 L312.1 777.9 L308.2 776.4 L304.2 774.7 L300.3 772.8 L296.3 770.7 L292.3 768.6 L288.2 766.4 L284.1 764.1 L280.0 761.8 L275.8 759.5 L271.6 757.2 L267.4 755.1 L263.1 753.1 L258.8 751.3 L254.4 749.7 L250.0 748.3 L245.6 747.2 L241.1 746.4 L236.6 745.9 L232.1 745.7 L227.7 745.9 L223.2 746.4 L218.9 747.2 L214.5 748.3 L210.2 749.7 L205.9 751.3 L201.7 753.1 L197.6 755.1 L193.4 757.3 L189.4 759.6 L185.3 762.0 L181.2 764.5 L177.2 766.9 L173.1 769.3 L169.1 771.7 L165.0 774.0 L161.0 776.1 L156.9 778.0 Z" fill="#ffffff"/></g></svg>
<div style="left:329px;top:764px;width:175px;height:38px;background:rgba(62,62,62,0.6);"></div>
<span id="t30" style="right:2815px;top:769.9px;font-size:29.57px;font-family:'Liberation Sans';color:#e8e8e8;">Turnip pen 2</span>
<div style="left:122px;top:805px;width:384px;height:71px;background:#3e3e3e;"></div>
<div style="left:122px;top:876px;width:384px;height:2px;background:#2a2a2a;"></div>
<svg style="left:122px;top:805px;overflow:hidden" width="384" height="71" viewBox="0 0 384 71"><g transform="translate(-122,-805)"><path d="M159.0 856.3 L163.4 854.5 L167.7 852.5 L171.9 850.2 L176.0 847.8 L180.1 845.3 L184.1 842.8 L188.0 840.2 L192.0 837.8 L195.9 835.4 L199.9 833.3 L203.8 831.3 L207.8 829.6 L211.9 828.3 L215.9 827.3 L220.0 826.6 L224.0 826.3 L228.0 826.3 L231.9 826.7 L235.8 827.3 L239.6 828.2 L243.4 829.4 L247.2 830.7 L251.1 832.2 L255.0 833.8 L258.9 835.5 L263.0 837.4 L267.1 839.2 L271.3 841.1 L275.6 843.0 L279.9 844.9 L284.3 846.8 L288.7 848.6 L293.1 850.4 L297.5 852.1 L301.8 853.7 L306.2 855.2 L310.5 856.5 L314.7 857.7 L319.0 858.8 L323.4 859.6 L327.7 860.2 L332.1 860.6 L336.6 860.7 L341.1 860.5 L345.6 859.9 L350.1 859.0 L354.6 857.8 L359.0 856.3 L363.4 854.5 L367.7 852.5 L371.9 850.2 L376.0 847.8 L380.1 845.3 L384.1 842.8 L388.0 840.2 L392.0 837.8 L395.9 835.4 L399.9 833.3 L403.8 831.3 L407.8 829.6 L406.2 824.8 L401.8 826.3 L397.5 827.9 L393.1 829.6 L388.7 831.4 L384.3 833.2 L379.9 835.1 L375.6 837.0 L371.3 838.9 L367.1 840.8 L363.0 842.6 L358.9 844.5 L355.0 846.2 L351.1 847.8 L347.2 849.3 L343.4 850.6 L339.6 851.8 L335.8 852.7 L331.9 853.3 L328.0 853.7 L324.0 853.7 L320.0 853.4 L315.9 852.7 L311.9 851.7 L307.8 850.4 L303.8 848.7 L299.9 846.7 L295.9 844.6 L292.0 842.2 L288.0 839.8 L284.1 837.2 L280.1 834.7 L276.0 832.2 L271.9 829.8 L267.7 827.5 L263.4 825.5 L259.0 823.7 L254.6 822.2 L250.1 821.0 L245.6 820.1 L241.1 819.5 L236.6 819.3 L232.1 819.4 L227.7 819.8 L223.4 820.4 L219.0 821.2 L214.7 822.3 L210.5 823.5 L206.2 824.8 L201.8 826.3 L197.5 827.9 L193.1 829.6 L188.7 831.4 L184.3 833.2 L179.9 835.1 L175.6 837.0 L171.3 838.9 L167.1 840.8 L163.0 842.6 L158.9 844.5 L155.0 846.2 Z" fill="#ffffff"/></g></svg>
<div style="left:320.5px;top:837px;width:183.5px;height:38px;background:rgba(62,62,62,0.6);"></div>
<span id="t31" style="right:2815px;top:842.9px;font-size:29.57px;font-family:'Liberation Sans';color:#e8e8e8;transform:scaleX(1.0055);transform-origin:right 0;">Calligraphy 2</span>
<div style="left:506px;top:294px;width:32px;height:584px;background:#3a3a3a;"></div>
<div style="left:506px;top:294px;width:31px;height:30px;background:#4e4e4e;"></div>
<svg style="left:511px;top:299px;" width="20" height="20" viewBox="0 0 20 20"><path d="M4 13 L10 7 L16 13" fill="none" stroke="#b0b0b0" stroke-width="2"/></svg>
<div style="left:510px;top:327px;width:23px;height:437px;background:#505050;border-radius:12px"></div>
<div style="left:506px;top:848px;width:31px;height:30px;background:#4e4e4e;"></div>
<svg style="left:511px;top:853px;" width="20" height="20" viewBox="0 0 20 20"><path d="M4 7 L10 13 L16 7" fill="none" stroke="#b0b0b0" stroke-width="2"/></svg>
<div style="left:122px;top:878px;width:416px;height:50px;background:#4e4e4e;"></div>
<svg style="left:396px;top:886px;" width="34" height="34" viewBox="0 0 34 34"><rect x="2" y="5" width="30" height="27" rx="4" fill="none" stroke="#b4b4b4" stroke-width="2.4"/><path d="M17 1 L17 21 M10 14 L17 21 L24 14" fill="none" stroke="#b4b4b4" stroke-width="2.4"/></svg>
<svg style="left:445px;top:886px;" width="36" height="36" viewBox="0 0 36 36"><rect x="1.5" y="1.5" width="24" height="24" rx="4" fill="none" stroke="#b4b4b4" stroke-width="2.4"/><rect x="9" y="9" width="25" height="25" rx="4" fill="#4e4e4e" stroke="#b4b4b4" stroke-width="2.4"/><path d="M21.5 14 L21.5 29 M14 21.5 L29 21.5" stroke="#b4b4b4" stroke-width="2.4"/></svg>
<svg style="left:496px;top:884px;" width="34" height="38" viewBox="0 0 34 38"><path d="M3 7 L31 7 M12 7 L12 2 L22 2 L22 7 M6 7 L8 34 Q8 36 10 36 L24 36 Q26 36 26 34 L28 7 M13 12 L13 31 M17 12 L17 31 M21 12 L21 31" fill="none" stroke="#b4b4b4" stroke-width="2.2"/></svg>
<div style="left:121px;top:928px;width:417px;height:5px;background:#333333;"></div>
<div style="left:121px;top:933px;width:417px;height:522px;background:#3a3a3a;"></div>
<div style="left:120px;top:930px;width:45px;height:42px;background:#363636;"></div>
<svg style="left:128px;top:941px;" width="28" height="26" viewBox="0 0 28 26"><path d="M4 6 L24 6 M4 14 L24 14 M4 22 L24 22" stroke="#8c8c8c" stroke-width="3"/></svg>
<div style="left:165px;top:933px;width:332px;height:39px;background:#4d4d4d;"></div>
<div style="left:122px;top:972px;width:416px;height:13px;background:#4a4a4a;"></div>
<svg style="left:176px;top:939px;" width="44" height="38" viewBox="0 0 44 38"><path d="M2 34 L6 24 L26 4 Q30 1 33 4 Q36 8 32 11 L12 30 Z" fill="#b4b4b4"/><circle cx="26" cy="27" r="6" fill="none" stroke="#b4b4b4" stroke-width="3"/><path d="M26 16 L26 38 M15 27 L37 27 M18 19 L34 35 M34 19 L18 35" stroke="#b4b4b4" stroke-width="2.5"/><circle cx="26" cy="27" r="3" fill="#4d4d4d"/></svg>
<span id="t32" style="left:237px;top:947.8px;font-size:26.09px;font-family:'Liberation Sans';color:#dcdcdc;transform:scaleX(0.9298);transform-origin:left 0;">Tool property [G-pen 2]</span>
<div style="left:124px;top:985px;width:414px;height:98px;background:#4b4b4b;"></div>
<div style="left:124px;top:985px;width:206px;height:98px;background:#b9b9b9;"></div>
<svg style="left:124px;top:985px;" width="414" height="98" viewBox="0 0 414 98"><path d="M42.2 70.3 L46.9 67.3 L51.7 64.6 L56.4 61.9 L61.0 59.4 L65.6 57.0 L70.2 54.7 L74.7 52.5 L79.1 50.5 L83.5 48.6 L87.8 46.7 L92.1 45.0 L96.4 43.4 L100.6 41.9 L104.7 40.6 L108.8 39.3 L112.9 38.1 L116.9 37.0 L120.8 36.1 L124.8 35.2 L128.6 34.4 L132.4 33.7 L136.2 33.2 L140.0 32.7 L143.6 32.3 L147.3 31.9 L150.9 31.7 L154.5 31.6 L158.0 31.5 L161.5 31.6 L164.9 31.7 L170.2 31.9 L175.4 32.4 L180.3 33.1 L185.2 34.1 L189.9 35.1 L194.4 36.4 L198.9 37.8 L203.2 39.3 L207.5 40.9 L211.6 42.7 L215.7 44.5 L219.7 46.3 L223.6 48.2 L227.4 50.2 L231.2 52.1 L234.9 54.0 L238.6 55.9 L242.2 57.8 L245.9 59.6 L249.4 61.3 L253.0 62.9 L256.5 64.4 L260.1 65.8 L263.6 67.0 L267.2 68.0 L270.7 68.8 L274.3 69.4 L277.9 69.8 L281.5 69.9 L285.1 69.8 L289.6 69.4 L294.0 68.9 L298.2 68.3 L302.4 67.6 L306.5 66.8 L310.4 65.9 L314.3 64.8 L318.0 63.7 L321.7 62.5 L325.2 61.2 L328.6 59.8 L331.9 58.4 L335.1 56.9 L338.1 55.3 L341.1 53.6 L343.9 52.0 L346.7 50.2 L349.3 48.5 L351.9 46.7 L354.3 44.8 L356.6 43.0 L358.8 41.1 L360.9 39.1 L362.9 37.2 L364.7 35.2 L366.5 33.2 L368.1 31.2 L369.6 29.2 L371.0 27.2 L372.3 25.2 L371.7 24.8 L370.5 26.8 L369.1 28.8 L367.6 30.8 L366.0 32.8 L364.3 34.8 L362.4 36.8 L360.5 38.7 L358.4 40.6 L356.2 42.5 L353.9 44.4 L351.5 46.2 L349.0 47.9 L346.3 49.6 L343.5 51.3 L340.7 52.9 L337.7 54.4 L334.6 55.8 L331.3 57.1 L328.0 58.4 L324.6 59.6 L321.1 60.7 L317.5 61.7 L313.7 62.7 L309.9 63.5 L306.0 64.2 L302.0 64.9 L297.8 65.4 L293.6 65.8 L289.3 66.1 L284.9 66.2 L281.6 66.2 L278.2 65.9 L274.9 65.4 L271.7 64.7 L268.4 63.7 L265.1 62.6 L261.8 61.4 L258.4 59.9 L255.1 58.4 L251.7 56.7 L248.2 54.9 L244.7 53.1 L241.1 51.1 L237.5 49.1 L233.8 47.1 L230.0 45.1 L226.1 43.1 L222.2 41.1 L218.1 39.2 L213.9 37.3 L209.6 35.6 L205.2 33.9 L200.7 32.3 L196.0 30.9 L191.2 29.6 L186.3 28.5 L181.2 27.6 L176.0 27.0 L170.6 26.5 L165.1 26.3 L161.5 26.3 L157.9 26.4 L154.2 26.6 L150.6 26.9 L146.8 27.3 L143.1 27.7 L139.3 28.3 L135.5 29.0 L131.7 29.8 L127.8 30.6 L123.9 31.6 L120.0 32.7 L116.0 33.8 L112.0 35.1 L107.9 36.5 L103.8 38.0 L99.7 39.5 L95.5 41.2 L91.3 43.0 L87.0 44.9 L82.7 46.9 L78.4 49.0 L74.0 51.2 L69.6 53.5 L65.1 56.0 L60.5 58.5 L55.9 61.2 L51.3 63.9 L46.6 66.8 L41.8 69.7 Z" fill="#000"/></svg>
<div style="left:125px;top:987px;width:112px;height:36px;background:rgba(120,120,120,0.9);"></div>
<span id="t33" style="left:127px;top:990.9px;font-size:29.57px;font-family:'Liberation Sans';color:#e6e6e6;transform:scaleX(0.9829);transform-origin:left 0;">G-pen 2</span>
<svg style="left:505px;top:1040px;" width="30" height="34" viewBox="0 0 30 34"><path d="M6 16 L6 10 Q6 3 13 3 Q20 3 20 10" fill="none" stroke="#b4b4b4" stroke-width="3"/><rect x="8" y="16" width="20" height="16" rx="2" fill="#b4b4b4"/></svg>
<div style="left:122px;top:1083px;width:384px;height:317px;background:#3d3d3d;"></div>
<div style="left:134px;top:1150px;width:369px;height:1.5px;background:#555555;"></div>
<div style="left:134px;top:1218px;width:369px;height:1.5px;background:#555555;"></div>
<div style="left:134px;top:1286px;width:369px;height:1.5px;background:#555555;"></div>
<span id="t34" style="left:162px;top:1090.2px;font-size:30.00px;font-family:'Liberation Sans';color:#e4e4e4;transform:scaleX(0.9857);transform-origin:left 0;">Brush Size</span>
<div style="left:214px;top:1124px;width:106px;height:20px;background:#3d3d3d;box-sizing:border-box;border-bottom:1px solid #6a6a6a;border-right:1px solid #6a6a6a"></div>
<div style="left:214px;top:1124px;width:43px;height:20px;background:#575757;"></div>
<span id="t35" style="right:2886px;top:1110.2px;font-size:26.81px;font-family:'Liberation Sans';color:#e4e4e4;transform:scaleX(1.0734);transform-origin:right 0;">6.0</span>
<svg style="left:436px;top:1107px;" width="20" height="26" viewBox="0 0 20 26"><path d="M3 9 L10 2 L17 9 M3 16 L10 23 L17 16" fill="none" stroke="#c4c4c4" stroke-width="2.2"/></svg>
<div style="left:466px;top:1088px;width:38px;height:58px;background:#474747;box-sizing:border-box;border:1px solid #5e5e5e"></div>
<svg style="left:471px;top:1099px;" width="28" height="36" viewBox="0 0 28 36"><path d="M4 6 L12 14 L24 2 M4 18 L12 26 L24 14" fill="none" stroke="#c4c4c4" stroke-width="2.6"/></svg>
<span id="t36" style="left:162px;top:1157.5px;font-size:30.00px;font-family:'Liberation Sans';color:#e4e4e4;transform:scaleX(0.9634);transform-origin:left 0;">Opacity</span>
<div style="left:214px;top:1192px;width:106px;height:21px;background:#575757;box-sizing:border-box;border:1px solid #666"></div>
<span id="t37" style="right:2886px;top:1177.2px;font-size:26.81px;font-family:'Liberation Sans';color:#e4e4e4;transform:scaleX(1.0734);transform-origin:right 0;">100</span>
<svg style="left:436px;top:1175px;" width="20" height="26" viewBox="0 0 20 26"><path d="M3 9 L10 2 L17 9 M3 16 L10 23 L17 16" fill="none" stroke="#c4c4c4" stroke-width="2.2"/></svg>
<div style="left:466px;top:1156px;width:38px;height:58px;background:#474747;box-sizing:border-box;border:1px solid #5e5e5e"></div>
<svg style="left:474px;top:1174px;" width="24" height="24" viewBox="0 0 24 24"><rect x="2" y="2" width="19" height="19" rx="4" fill="none" stroke="#c4c4c4" stroke-width="2.4"/><path d="M4 19 L19 4" stroke="#c4c4c4" stroke-width="2.4"/></svg>
<span id="t38" style="left:161px;top:1240.0px;font-size:28.26px;font-family:'Liberation Sans';color:#e0e0e0;transform:scaleX(0.8318);transform-origin:left 0;">Anti-aliasing</span>
<div style="left:282px;top:1220px;width:3px;height:64px;background:#3d3d3d;"></div>
<div style="left:285px;top:1223px;width:219px;height:60px;background:#4b4b4b;box-sizing:border-box;border:1px solid #5e5e5e"></div>
<div style="left:375px;top:1224px;width:49px;height:58px;background:#7385b0;"></div>
<svg style="left:285px;top:1223px;" width="219" height="60" viewBox="0 0 219 60"><path d="M14 18 L20 18 L20 12 L28 12 L28 18 L34 18 L34 26 L38 26 L38 34 L34 34 L34 42 L28 42 L28 48 L20 48 L20 42 L14 42 L14 34 L10 34 L10 26 L14 26 Z" fill="#c4c4c4"/><circle cx="67" cy="30" r="17" fill="#c4c4c4"/><circle cx="113" cy="30" r="17" fill="#a7b1c7"/><circle cx="113" cy="30" r="14" fill="#c4c4c4"/><circle cx="160" cy="30" r="21" fill="#6a6a6a"/><circle cx="160" cy="30" r="15" fill="#8e8e8e"/><circle cx="160" cy="30" r="11" fill="#c4c4c4"/><path d="M190 22 L200 32 L210 22" fill="none" stroke="#c4c4c4" stroke-width="2.6"/></svg>
<span id="t39" style="left:162px;top:1294.5px;font-size:30.00px;font-family:'Liberation Sans';color:#e4e4e4;transform:scaleX(0.9953);transform-origin:left 0;">Stabilization</span>
<div style="left:214px;top:1328px;width:106px;height:21px;background:#575757;box-sizing:border-box;border:1px solid #666"></div>
<span id="t40" style="right:2886px;top:1314.2px;font-size:26.81px;font-family:'Liberation Sans';color:#e4e4e4;transform:scaleX(1.0734);transform-origin:right 0;">100</span>
<svg style="left:436px;top:1311px;" width="20" height="26" viewBox="0 0 20 26"><path d="M3 9 L10 2 L17 9 M3 16 L10 23 L17 16" fill="none" stroke="#c4c4c4" stroke-width="2.2"/></svg>
<div style="left:130px;top:1371px;width:28px;height:28px;background:#404040;box-sizing:border-box;border:1px solid #666"></div>
<svg style="left:130px;top:1371px;" width="28" height="28" viewBox="0 0 28 28"><path d="M14 4 L14 24 M4 14 L24 14" stroke="#9a9a9a" stroke-width="1.5"/></svg>
<div style="left:161px;top:1366px;width:35px;height:34px;background:#4a4a4a;box-sizing:border-box;border:1px solid #666"></div>
<span id="t41" style="left:200px;top:1372.1px;font-size:30.43px;font-family:'Liberation Sans';color:#e4e4e4;transform:scaleX(0.9793);transform-origin:left 0;">Adjust by speed</span>
<div style="left:506px;top:1083px;width:32px;height:317px;background:#3a3a3a;"></div>
<div style="left:507px;top:1086px;width:30px;height:28px;background:#4e4e4e;"></div>
<svg style="left:512px;top:1090px;" width="20" height="20" viewBox="0 0 20 20"><path d="M4 13 L10 7 L16 13" fill="none" stroke="#b0b0b0" stroke-width="2"/></svg>
<div style="left:511px;top:1119px;width:23px;height:201px;background:#505050;border-radius:12px"></div>
<div style="left:507px;top:1370px;width:30px;height:29px;background:#4e4e4e;"></div>
<svg style="left:512px;top:1374px;" width="20" height="20" viewBox="0 0 20 20"><path d="M4 7 L10 13 L16 7" fill="none" stroke="#b0b0b0" stroke-width="2"/></svg>
<div style="left:122px;top:1399px;width:416px;height:51px;background:#4e4e4e;"></div>
<svg style="left:444px;top:1405px;" width="36" height="36" viewBox="0 0 36 36"><path d="M18 4 A14 14 0 1 1 6 11" fill="none" stroke="#b4b4b4" stroke-width="2.6"/><path d="M8 8 L9 8 M11 5 L12 5" stroke="#b4b4b4" stroke-width="2.6"/><circle cx="18" cy="18" r="4" fill="#b4b4b4"/><path d="M18 18 L18 6" stroke="#b4b4b4" stroke-width="2.4"/></svg>
<svg style="left:494px;top:1405px;" width="36" height="36" viewBox="0 0 36 36"><path d="M6 14 Q4 6 12 4 L10 10 L14 14 L20 12 Q20 20 12 20 L28 34 Q32 36 34 32 L20 18" fill="none" stroke="#b4b4b4" stroke-width="2.6" stroke-linejoin="round"/></svg>
<div style="left:121px;top:1450px;width:417px;height:5px;background:#333333;"></div>
<div style="left:121px;top:1455px;width:417px;height:177px;background:#3a3a3a;"></div>
<div style="left:120px;top:1455px;width:45px;height:38px;background:#363636;"></div>
<svg style="left:128px;top:1464px;" width="28" height="26" viewBox="0 0 28 26"><path d="M4 6 L24 6 M4 14 L24 14 M4 22 L24 22" stroke="#8c8c8c" stroke-width="3"/></svg>
<div style="left:165px;top:1455px;width:218px;height:38px;background:#4d4d4d;"></div>
<svg style="left:182px;top:1462px;" width="34" height="34" viewBox="0 0 34 34"><rect x="1.5" y="1.5" width="31" height="31" rx="5" fill="none" stroke="#b4b4b4" stroke-width="3"/><rect x="9" y="6" width="16" height="9" fill="#b4b4b4"/><rect x="9" y="19" width="16" height="9" fill="#b4b4b4"/><path d="M4 7 L6 7 M4 12 L6 12 M4 17 L6 17 M4 22 L6 22 M4 27 L6 27 M28 7 L30 7 M28 12 L30 12 M28 17 L30 17 M28 22 L30 22 M28 27 L30 27" stroke="#b4b4b4" stroke-width="2.5"/></svg>
<span id="t42" style="left:237px;top:1470.4px;font-size:25.36px;font-family:'Liberation Sans';color:#dcdcdc;transform:scaleX(0.9416);transform-origin:left 0;">Color History</span>
<div style="left:122px;top:1493px;width:416px;height:14px;background:#4a4a4a;"></div>
<div style="left:122px;top:1507px;width:416px;height:125px;background:#4a4a4a;"></div>
<svg style="left:124px;top:1508px;" width="383" height="93" viewBox="0 0 383 93"><defs><pattern id="chk" x="0" y="0" width="12" height="12" patternUnits="userSpaceOnUse"><rect width="12" height="12" fill="#ffffff"/><rect width="6" height="6" fill="#8a8a8a"/><rect x="6" y="6" width="6" height="6" fill="#8a8a8a"/></pattern></defs><rect x="0.00" y="0.00" width="24.20" height="23.45" fill="#000000"/><rect x="23.90" y="0.00" width="24.20" height="23.45" fill="#88eef8"/><rect x="47.80" y="0.00" width="24.20" height="23.45" fill="#2a0e04"/><rect x="71.70" y="0.00" width="24.20" height="23.45" fill="#f85040"/><rect x="95.60" y="0.00" width="24.20" height="23.45" fill="#ffd850"/><rect x="119.50" y="0.00" width="24.20" height="23.45" fill="#ffd870"/><rect x="143.40" y="0.00" width="24.20" height="23.45" fill="#ffe080"/><rect x="167.30" y="0.00" width="24.20" height="23.45" fill="#ffd868"/><rect x="191.20" y="0.00" width="24.20" height="23.45" fill="#e8e060"/><rect x="215.10" y="0.00" width="24.20" height="23.45" fill="#ffd060"/><rect x="239.00" y="0.00" width="24.20" height="23.45" fill="#fff8d0"/><rect x="262.90" y="0.00" width="24.20" height="23.45" fill="#b0f8f8"/><rect x="286.80" y="0.00" width="24.20" height="23.45" fill="#c03080"/><rect x="310.70" y="0.00" width="24.20" height="23.45" fill="#800838"/><rect x="334.60" y="0.00" width="24.20" height="23.45" fill="#e8e8c8"/><rect x="358.50" y="0.00" width="24.20" height="23.45" fill="#f0f0c8"/><rect x="0.00" y="23.15" width="24.20" height="23.45" fill="#fff8e0"/><rect x="23.90" y="23.15" width="24.20" height="23.45" fill="#f0f820"/><rect x="47.80" y="23.15" width="24.20" height="23.45" fill="#ffffff"/><rect x="71.70" y="23.15" width="24.20" height="23.45" fill="#f0f0e0"/><rect x="95.60" y="23.15" width="24.20" height="23.45" fill="#f8f880"/><rect x="119.50" y="23.15" width="24.20" height="23.45" fill="#c82818"/><rect x="143.40" y="23.15" width="24.20" height="23.45" fill="url(#chk)"/><rect x="167.30" y="23.15" width="24.20" height="23.45" fill="#d05898"/><rect x="191.20" y="23.15" width="24.20" height="23.45" fill="#00f0f0"/><rect x="215.10" y="23.15" width="24.20" height="23.45" fill="#d878e8"/><rect x="239.00" y="23.15" width="24.20" height="23.45" fill="#10a0f0"/><rect x="262.90" y="23.15" width="24.20" height="23.45" fill="#f0d0f8"/><rect x="286.80" y="23.15" width="24.20" height="23.45" fill="#a86040"/><rect x="310.70" y="23.15" width="24.20" height="23.45" fill="#a86040"/><rect x="334.60" y="23.15" width="24.20" height="23.45" fill="#701808"/><rect x="358.50" y="23.15" width="24.20" height="23.45" fill="#a02808"/><rect x="0.00" y="46.30" width="24.20" height="23.45" fill="#e00860"/><rect x="23.90" y="46.30" width="24.20" height="23.45" fill="#e8b0f0"/><rect x="47.80" y="46.30" width="24.20" height="23.45" fill="#904838"/><rect x="71.70" y="46.30" width="24.20" height="23.45" fill="#e8d0f0"/><rect x="95.60" y="46.30" width="24.20" height="23.45" fill="#f8a848"/><rect x="119.50" y="46.30" width="24.20" height="23.45" fill="#10a098"/><rect x="143.40" y="46.30" width="24.20" height="23.45" fill="#300080"/><rect x="167.30" y="46.30" width="24.20" height="23.45" fill="#382028"/><rect x="191.20" y="46.30" width="24.20" height="23.45" fill="#500008"/><rect x="215.10" y="46.30" width="24.20" height="23.45" fill="#b04838"/><rect x="239.00" y="46.30" width="24.20" height="23.45" fill="#100808"/><rect x="262.90" y="46.30" width="24.20" height="23.45" fill="#301810"/><rect x="286.80" y="46.30" width="24.20" height="23.45" fill="#080404"/><rect x="310.70" y="46.30" width="24.20" height="23.45" fill="#080810"/><rect x="334.60" y="46.30" width="24.20" height="23.45" fill="#d8a0e8"/><rect x="358.50" y="46.30" width="24.20" height="23.45" fill="#b06840"/><rect x="0.00" y="69.45" width="24.20" height="23.45" fill="#b06848"/><rect x="23.90" y="69.45" width="24.20" height="23.45" fill="#000020"/><rect x="47.80" y="69.45" width="24.20" height="23.45" fill="#f8a8e8"/><rect x="71.70" y="69.45" width="24.20" height="23.45" fill="#fff0f8"/><rect x="95.60" y="69.45" width="24.20" height="23.45" fill="#880070"/><rect x="119.50" y="69.45" width="24.20" height="23.45" fill="#f808c8"/><rect x="143.40" y="69.45" width="24.20" height="23.45" fill="#f84010"/><rect x="167.30" y="69.45" width="24.20" height="23.45" fill="#d060e8"/><rect x="191.20" y="69.45" width="24.20" height="23.45" fill="#a86840"/><rect x="215.10" y="69.45" width="24.20" height="23.45" fill="#a09808"/><rect x="239.00" y="69.45" width="24.20" height="23.45" fill="#b06040"/><rect x="262.90" y="69.45" width="24.20" height="23.45" fill="#286000"/><rect x="286.80" y="69.45" width="24.20" height="23.45" fill="#509800"/><rect x="310.70" y="69.45" width="24.20" height="23.45" fill="#f8d0f8"/><rect x="334.60" y="69.45" width="24.20" height="23.45" fill="#f8e0f8"/><rect x="358.50" y="69.45" width="24.20" height="23.45" fill="#f8d8f8"/><rect x="1" y="1" width="21.9" height="21.1" fill="none" stroke="#e07070" stroke-width="1.5"/></svg>
<div style="left:507px;top:1508px;width:31px;height:30px;background:#505050;"></div>
<svg style="left:512px;top:1513px;" width="20" height="20" viewBox="0 0 20 20"><path d="M4 13 L10 7 L16 13" fill="none" stroke="#b0b0b0" stroke-width="2"/></svg>
<div style="left:510px;top:1540px;width:25px;height:25px;background:#555555;border-radius:50%"></div>
<div style="left:507px;top:1571px;width:31px;height:30px;background:#505050;"></div>
<svg style="left:512px;top:1576px;" width="20" height="20" viewBox="0 0 20 20"><path d="M4 7 L10 13 L16 7" fill="none" stroke="#b0b0b0" stroke-width="2"/></svg>
<div style="left:124px;top:1607px;width:20px;height:20px;background:#b4b4b4;border-radius:3px"></div>
<div class="tx" style="left:-366px;width:1000px;text-align:center;top:1608.0px;font-size:18.84px;font-family:'Liberation Sans';color:#4a4a4a;font-weight:bold"><span id="t43">H</span></div>
<div style="left:204px;top:1607px;width:20px;height:20px;background:#b4b4b4;border-radius:3px"></div>
<div class="tx" style="left:-286px;width:1000px;text-align:center;top:1608.0px;font-size:18.84px;font-family:'Liberation Sans';color:#4a4a4a;font-weight:bold"><span id="t44">S</span></div>
<div style="left:284px;top:1607px;width:20px;height:20px;background:#b4b4b4;border-radius:3px"></div>
<div class="tx" style="left:-206px;width:1000px;text-align:center;top:1608.0px;font-size:18.84px;font-family:'Liberation Sans';color:#4a4a4a;font-weight:bold"><span id="t45">V</span></div>
<div style="left:121px;top:1632px;width:417px;height:5px;background:#333333;"></div>
<div style="left:121px;top:1637px;width:417px;height:401px;background:#3a3a3a;"></div>
<div style="left:120px;top:1637px;width:45px;height:38px;background:#363636;"></div>
<svg style="left:128px;top:1646px;" width="28" height="26" viewBox="0 0 28 26"><path d="M4 6 L24 6 M4 14 L24 14 M4 22 L24 22" stroke="#8c8c8c" stroke-width="3"/></svg>
<div style="left:165px;top:1637px;width:153px;height:38px;background:#4d4d4d;"></div>
<svg style="left:182px;top:1645px;" width="34" height="34" viewBox="0 0 34 34"><rect x="1.5" y="1.5" width="31" height="31" rx="5" fill="#b4b4b4"/><rect x="4" y="4" width="8" height="8" fill="#3a3a3a"/><rect x="13" y="13" width="8" height="8" fill="#3a3a3a"/><rect x="15" y="15" width="4" height="4" fill="#b4b4b4"/><rect x="22" y="4" width="8" height="8" fill="#8a8a8a"/><rect x="4" y="22" width="8" height="8" fill="#8a8a8a"/><rect x="22" y="22" width="8" height="8" fill="#6a6a6a"/></svg>
<span id="t46" style="left:237px;top:1651.4px;font-size:25.36px;font-family:'Liberation Sans';color:#dcdcdc;width:70px;overflow:hidden">Color S</span>
<div style="left:319px;top:1637px;width:72px;height:38px;background:#4a4a4a;box-sizing:border-box;border-left:1.5px solid #363636"></div>
<div style="left:392px;top:1637px;width:72px;height:38px;background:#4a4a4a;box-sizing:border-box;border-left:1.5px solid #363636"></div>
<div style="left:465px;top:1637px;width:72px;height:38px;background:#4a4a4a;box-sizing:border-box;border-left:1.5px solid #363636"></div>
<svg style="left:334px;top:1650px;" width="40" height="28" viewBox="0 0 40 28"><circle cx="20" cy="20" r="16" fill="none" stroke="#6a6a6a" stroke-width="3"/><rect x="12" y="12" width="16" height="16" rx="3" fill="#6a6a6a"/></svg>
<svg style="left:408px;top:1650px;" width="40" height="28" viewBox="0 0 40 28"><rect x="4" y="2" width="10" height="10" rx="2" fill="none" stroke="#6a6a6a" stroke-width="3"/><rect x="26" y="2" width="10" height="10" rx="2" fill="#6a6a6a"/><path d="M14 7 L26 7 M9 12 L9 22 M31 12 L31 22" stroke="#6a6a6a" stroke-width="3"/><rect x="4" y="22" width="10" height="10" rx="2" fill="#6a6a6a"/><rect x="26" y="22" width="10" height="10" rx="2" fill="#6a6a6a"/></svg>
<svg style="left:480px;top:1650px;" width="40" height="28" viewBox="0 0 40 28"><path d="M10 4 L36 4 M10 12 L36 12 M10 20 L36 20" stroke="#6a6a6a" stroke-width="5"/><path d="M4 10 L10 2 L16 10 Z M4 18 L10 10 L16 18 Z" fill="#8a8a8a"/></svg>
<div style="left:122px;top:1675px;width:416px;height:6px;background:#4a4a4a;"></div>
<div style="left:122px;top:1681px;width:416px;height:306px;background:#4a4a4a;"></div>
<div style="left:124px;top:1689px;width:314px;height:49px;background:#5c5c5c;box-sizing:border-box;border:1px solid #6a6a6a;border-radius:3px"></div>
<span id="t47" style="left:158px;top:1697.9px;font-size:31.88px;font-family:'Liberation Sans';color:#c8c8c8;transform:scaleX(0.9375);transform-origin:left 0;">ILLUSTRATION</span>
<svg style="left:398px;top:1700px;" width="26" height="26" viewBox="0 0 26 26"><path d="M3 8 L13 18 L23 8" fill="none" stroke="#c4c4c4" stroke-width="2.4"/></svg>
<svg style="left:444px;top:1693px;" width="38" height="38" viewBox="0 0 38 38"><path d="M6 14 Q4 6 12 4 L10 10 L14 14 L20 12 Q20 20 12 20 L28 34 Q32 36 34 32 L20 18" fill="none" stroke="#b4b4b4" stroke-width="2.6" stroke-linejoin="round"/></svg>
<svg style="left:495px;top:1695px;" width="34" height="34" viewBox="0 0 34 34"><rect x="2" y="5" width="30" height="27" rx="4" fill="none" stroke="#b4b4b4" stroke-width="2.4"/><path d="M17 1 L17 21 M10 14 L17 21 L24 14" fill="none" stroke="#b4b4b4" stroke-width="2.4"/></svg>
<div style="left:124px;top:1740px;width:382px;height:206px;background:#3f3f3f;"></div>
<svg style="left:125px;top:1740px;" width="382" height="207" viewBox="0 0 382 207"><defs><pattern id="chk2" x="0" y="0" width="12" height="12" patternUnits="userSpaceOnUse"><rect width="12" height="12" fill="#ffffff"/><rect width="6" height="6" fill="#8a8a8a"/><rect x="6" y="6" width="6" height="6" fill="#8a8a8a"/></pattern></defs><rect x="0.00" y="0.00" width="24.10" height="23.20" fill="#000000"/><rect x="23.80" y="0.00" width="24.10" height="23.20" fill="#ffffff"/><rect x="47.60" y="0.00" width="24.10" height="23.20" fill="#f8a840"/><rect x="71.40" y="0.00" width="24.10" height="23.20" fill="url(#chk2)"/><rect x="95.20" y="0.00" width="24.10" height="23.20" fill="url(#chk2)"/><rect x="119.00" y="0.00" width="24.10" height="23.20" fill="url(#chk2)"/><rect x="142.80" y="0.00" width="24.10" height="23.20" fill="url(#chk2)"/><rect x="166.60" y="0.00" width="24.10" height="23.20" fill="url(#chk2)"/><rect x="190.40" y="0.00" width="24.10" height="23.20" fill="url(#chk2)"/><rect x="214.20" y="0.00" width="24.10" height="23.20" fill="url(#chk2)"/><rect x="238.00" y="0.00" width="24.10" height="23.20" fill="url(#chk2)"/><rect x="261.80" y="0.00" width="24.10" height="23.20" fill="#c82010"/><rect x="285.60" y="0.00" width="24.10" height="23.20" fill="#f85040"/><rect x="309.40" y="0.00" width="24.10" height="23.20" fill="#90a8f0"/><rect x="333.20" y="0.00" width="24.10" height="23.20" fill="#8a8a8a"/><rect x="357.00" y="0.00" width="24.10" height="23.20" fill="url(#chk2)"/><rect x="0.00" y="22.90" width="24.10" height="23.20" fill="#3a3a3a"/><rect x="23.80" y="22.90" width="24.10" height="23.20" fill="#202428"/><rect x="47.60" y="22.90" width="24.10" height="23.20" fill="#10a0f8"/><rect x="71.40" y="22.90" width="24.10" height="23.20" fill="url(#chk2)"/><rect x="95.20" y="22.90" width="24.10" height="23.20" fill="url(#chk2)"/><rect x="119.00" y="22.90" width="24.10" height="23.20" fill="url(#chk2)"/><rect x="142.80" y="22.90" width="24.10" height="23.20" fill="url(#chk2)"/><rect x="166.60" y="22.90" width="24.10" height="23.20" fill="url(#chk2)"/><rect x="190.40" y="22.90" width="24.10" height="23.20" fill="url(#chk2)"/><rect x="214.20" y="22.90" width="24.10" height="23.20" fill="url(#chk2)"/><rect x="238.00" y="22.90" width="24.10" height="23.20" fill="url(#chk2)"/><rect x="261.80" y="22.90" width="24.10" height="23.20" fill="url(#chk2)"/><rect x="285.60" y="22.90" width="24.10" height="23.20" fill="url(#chk2)"/><rect x="309.40" y="22.90" width="24.10" height="23.20" fill="url(#chk2)"/><rect x="333.20" y="22.90" width="24.10" height="23.20" fill="url(#chk2)"/><rect x="357.00" y="22.90" width="24.10" height="23.20" fill="url(#chk2)"/><rect x="0.00" y="45.80" width="24.10" height="23.20" fill="#c82010"/><rect x="23.80" y="45.80" width="24.10" height="23.20" fill="#00f0f0"/><rect x="47.60" y="45.80" width="24.10" height="23.20" fill="url(#chk2)"/><rect x="71.40" y="45.80" width="24.10" height="23.20" fill="url(#chk2)"/><rect x="95.20" y="45.80" width="24.10" height="23.20" fill="url(#chk2)"/><rect x="119.00" y="45.80" width="24.10" height="23.20" fill="url(#chk2)"/><rect x="142.80" y="45.80" width="24.10" height="23.20" fill="url(#chk2)"/><rect x="166.60" y="45.80" width="24.10" height="23.20" fill="url(#chk2)"/><rect x="190.40" y="45.80" width="24.10" height="23.20" fill="url(#chk2)"/><rect x="214.20" y="45.80" width="24.10" height="23.20" fill="#c06840"/><rect x="238.00" y="45.80" width="24.10" height="23.20" fill="url(#chk2)"/><rect x="261.80" y="45.80" width="24.10" height="23.20" fill="url(#chk2)"/><rect x="285.60" y="45.80" width="24.10" height="23.20" fill="url(#chk2)"/><rect x="309.40" y="45.80" width="24.10" height="23.20" fill="url(#chk2)"/><rect x="333.20" y="45.80" width="24.10" height="23.20" fill="url(#chk2)"/><rect x="357.00" y="45.80" width="24.10" height="23.20" fill="url(#chk2)"/><rect x="0.00" y="68.70" width="24.10" height="23.20" fill="#b00808"/><rect x="23.80" y="68.70" width="24.10" height="23.20" fill="#10a098"/><rect x="47.60" y="68.70" width="24.10" height="23.20" fill="url(#chk2)"/><rect x="71.40" y="68.70" width="24.10" height="23.20" fill="url(#chk2)"/><rect x="95.20" y="68.70" width="24.10" height="23.20" fill="url(#chk2)"/><rect x="119.00" y="68.70" width="24.10" height="23.20" fill="url(#chk2)"/><rect x="142.80" y="68.70" width="24.10" height="23.20" fill="url(#chk2)"/><rect x="166.60" y="68.70" width="24.10" height="23.20" fill="url(#chk2)"/><rect x="190.40" y="68.70" width="24.10" height="23.20" fill="url(#chk2)"/><rect x="214.20" y="68.70" width="24.10" height="23.20" fill="#b04030"/><rect x="238.00" y="68.70" width="24.10" height="23.20" fill="#381820"/><rect x="261.80" y="68.70" width="24.10" height="23.20" fill="url(#chk2)"/><rect x="285.60" y="68.70" width="24.10" height="23.20" fill="url(#chk2)"/><rect x="309.40" y="68.70" width="24.10" height="23.20" fill="url(#chk2)"/><rect x="333.20" y="68.70" width="24.10" height="23.20" fill="url(#chk2)"/><rect x="357.00" y="68.70" width="24.10" height="23.20" fill="url(#chk2)"/><rect x="0.00" y="91.60" width="24.10" height="23.20" fill="#900808"/><rect x="23.80" y="91.60" width="24.10" height="23.20" fill="#b8f8f8"/><rect x="47.60" y="91.60" width="24.10" height="23.20" fill="url(#chk2)"/><rect x="71.40" y="91.60" width="24.10" height="23.20" fill="url(#chk2)"/><rect x="95.20" y="91.60" width="24.10" height="23.20" fill="url(#chk2)"/><rect x="119.00" y="91.60" width="24.10" height="23.20" fill="url(#chk2)"/><rect x="142.80" y="91.60" width="24.10" height="23.20" fill="url(#chk2)"/><rect x="166.60" y="91.60" width="24.10" height="23.20" fill="url(#chk2)"/><rect x="190.40" y="91.60" width="24.10" height="23.20" fill="url(#chk2)"/><rect x="214.20" y="91.60" width="24.10" height="23.20" fill="#b06038"/><rect x="238.00" y="91.60" width="24.10" height="23.20" fill="#280810"/><rect x="261.80" y="91.60" width="24.10" height="23.20" fill="url(#chk2)"/><rect x="285.60" y="91.60" width="24.10" height="23.20" fill="url(#chk2)"/><rect x="309.40" y="91.60" width="24.10" height="23.20" fill="#e090c8"/><rect x="333.20" y="91.60" width="24.10" height="23.20" fill="#d050a0"/><rect x="357.00" y="91.60" width="24.10" height="23.20" fill="url(#chk2)"/><rect x="0.00" y="114.50" width="24.10" height="23.20" fill="#500000"/><rect x="23.80" y="114.50" width="24.10" height="23.20" fill="#ffffff"/><rect x="47.60" y="114.50" width="24.10" height="23.20" fill="url(#chk2)"/><rect x="71.40" y="114.50" width="24.10" height="23.20" fill="url(#chk2)"/><rect x="95.20" y="114.50" width="24.10" height="23.20" fill="url(#chk2)"/><rect x="119.00" y="114.50" width="24.10" height="23.20" fill="url(#chk2)"/><rect x="142.80" y="114.50" width="24.10" height="23.20" fill="url(#chk2)"/><rect x="166.60" y="114.50" width="24.10" height="23.20" fill="url(#chk2)"/><rect x="190.40" y="114.50" width="24.10" height="23.20" fill="url(#chk2)"/><rect x="214.20" y="114.50" width="24.10" height="23.20" fill="url(#chk2)"/><rect x="238.00" y="114.50" width="24.10" height="23.20" fill="url(#chk2)"/><rect x="261.80" y="114.50" width="24.10" height="23.20" fill="url(#chk2)"/><rect x="285.60" y="114.50" width="24.10" height="23.20" fill="url(#chk2)"/><rect x="309.40" y="114.50" width="24.10" height="23.20" fill="url(#chk2)"/><rect x="333.20" y="114.50" width="24.10" height="23.20" fill="url(#chk2)"/><rect x="357.00" y="114.50" width="24.10" height="23.20" fill="url(#chk2)"/><rect x="0.00" y="137.40" width="24.10" height="23.20" fill="#f0f010"/><rect x="23.80" y="137.40" width="24.10" height="23.20" fill="#a0f0f8"/><rect x="47.60" y="137.40" width="24.10" height="23.20" fill="url(#chk2)"/><rect x="71.40" y="137.40" width="24.10" height="23.20" fill="url(#chk2)"/><rect x="95.20" y="137.40" width="24.10" height="23.20" fill="url(#chk2)"/><rect x="119.00" y="137.40" width="24.10" height="23.20" fill="url(#chk2)"/><rect x="142.80" y="137.40" width="24.10" height="23.20" fill="url(#chk2)"/><rect x="166.60" y="137.40" width="24.10" height="23.20" fill="url(#chk2)"/><rect x="190.40" y="137.40" width="24.10" height="23.20" fill="url(#chk2)"/><rect x="214.20" y="137.40" width="24.10" height="23.20" fill="url(#chk2)"/><rect x="238.00" y="137.40" width="24.10" height="23.20" fill="url(#chk2)"/><rect x="261.80" y="137.40" width="24.10" height="23.20" fill="url(#chk2)"/><rect x="285.60" y="137.40" width="24.10" height="23.20" fill="url(#chk2)"/><rect x="309.40" y="137.40" width="24.10" height="23.20" fill="url(#chk2)"/><rect x="333.20" y="137.40" width="24.10" height="23.20" fill="url(#chk2)"/><rect x="357.00" y="137.40" width="24.10" height="23.20" fill="url(#chk2)"/><rect x="0.00" y="160.30" width="24.10" height="23.20" fill="#804000"/><rect x="23.80" y="160.30" width="24.10" height="23.20" fill="#502000"/><rect x="47.60" y="160.30" width="24.10" height="23.20" fill="url(#chk2)"/><rect x="71.40" y="160.30" width="24.10" height="23.20" fill="url(#chk2)"/><rect x="95.20" y="160.30" width="24.10" height="23.20" fill="url(#chk2)"/><rect x="119.00" y="160.30" width="24.10" height="23.20" fill="url(#chk2)"/><rect x="142.80" y="160.30" width="24.10" height="23.20" fill="#e0c8f0"/><rect x="166.60" y="160.30" width="24.10" height="23.20" fill="url(#chk2)"/><rect x="190.40" y="160.30" width="24.10" height="23.20" fill="url(#chk2)"/><rect x="214.20" y="160.30" width="24.10" height="23.20" fill="url(#chk2)"/><rect x="238.00" y="160.30" width="24.10" height="23.20" fill="url(#chk2)"/><rect x="261.80" y="160.30" width="24.10" height="23.20" fill="url(#chk2)"/><rect x="285.60" y="160.30" width="24.10" height="23.20" fill="url(#chk2)"/><rect x="309.40" y="160.30" width="24.10" height="23.20" fill="url(#chk2)"/><rect x="333.20" y="160.30" width="24.10" height="23.20" fill="url(#chk2)"/><rect x="357.00" y="160.30" width="24.10" height="23.20" fill="#300090"/><rect x="0.00" y="183.20" width="24.10" height="23.20" fill="#c0f870"/><rect x="23.80" y="183.20" width="24.10" height="23.20" fill="#301810"/><rect x="47.60" y="183.20" width="24.10" height="23.20" fill="#402010"/><path d="M23.8 0 L23.8 183.2" stroke="#c8c8c8" stroke-width="0.8" opacity="0.6"/><path d="M47.6 0 L47.6 183.2" stroke="#c8c8c8" stroke-width="0.8" opacity="0.6"/><path d="M71.4 0 L71.4 183.2" stroke="#c8c8c8" stroke-width="0.8" opacity="0.6"/><path d="M95.2 0 L95.2 183.2" stroke="#c8c8c8" stroke-width="0.8" opacity="0.6"/><path d="M119.0 0 L119.0 183.2" stroke="#c8c8c8" stroke-width="0.8" opacity="0.6"/><path d="M142.8 0 L142.8 183.2" stroke="#c8c8c8" stroke-width="0.8" opacity="0.6"/><path d="M166.6 0 L166.6 183.2" stroke="#c8c8c8" stroke-width="0.8" opacity="0.6"/><path d="M190.4 0 L190.4 183.2" stroke="#c8c8c8" stroke-width="0.8" opacity="0.6"/><path d="M214.2 0 L214.2 183.2" stroke="#c8c8c8" stroke-width="0.8" opacity="0.6"/><path d="M238.0 0 L238.0 183.2" stroke="#c8c8c8" stroke-width="0.8" opacity="0.6"/><path d="M261.8 0 L261.8 183.2" stroke="#c8c8c8" stroke-width="0.8" opacity="0.6"/><path d="M285.6 0 L285.6 183.2" stroke="#c8c8c8" stroke-width="0.8" opacity="0.6"/><path d="M309.4 0 L309.4 183.2" stroke="#c8c8c8" stroke-width="0.8" opacity="0.6"/><path d="M333.2 0 L333.2 183.2" stroke="#c8c8c8" stroke-width="0.8" opacity="0.6"/><path d="M357.0 0 L357.0 183.2" stroke="#c8c8c8" stroke-width="0.8" opacity="0.6"/><path d="M0 22.9 L380.8 22.9" stroke="#c8c8c8" stroke-width="0.8" opacity="0.6"/><path d="M0 45.8 L380.8 45.8" stroke="#c8c8c8" stroke-width="0.8" opacity="0.6"/><path d="M0 68.7 L380.8 68.7" stroke="#c8c8c8" stroke-width="0.8" opacity="0.6"/><path d="M0 91.6 L380.8 91.6" stroke="#c8c8c8" stroke-width="0.8" opacity="0.6"/><path d="M0 114.5 L380.8 114.5" stroke="#c8c8c8" stroke-width="0.8" opacity="0.6"/><path d="M0 137.4 L380.8 137.4" stroke="#c8c8c8" stroke-width="0.8" opacity="0.6"/><path d="M0 160.3 L380.8 160.3" stroke="#c8c8c8" stroke-width="0.8" opacity="0.6"/><rect x="1" y="1" width="21.8" height="20.9" fill="none" stroke="#e07070" stroke-width="1.5"/></svg>
<div style="left:122px;top:1987px;width:416px;height:51px;background:#4e4e4e;"></div>
<div style="left:124px;top:2010px;width:20px;height:20px;background:#b4b4b4;border-radius:3px"></div>
<div class="tx" style="left:-366px;width:1000px;text-align:center;top:2011.0px;font-size:18.84px;font-family:'Liberation Sans';color:#4a4a4a;font-weight:bold"><span id="t48">H</span></div>
<div style="left:204px;top:2010px;width:20px;height:20px;background:#b4b4b4;border-radius:3px"></div>
<div class="tx" style="left:-286px;width:1000px;text-align:center;top:2011.0px;font-size:18.84px;font-family:'Liberation Sans';color:#4a4a4a;font-weight:bold"><span id="t49">S</span></div>
<div style="left:284px;top:2010px;width:20px;height:20px;background:#b4b4b4;border-radius:3px"></div>
<div class="tx" style="left:-206px;width:1000px;text-align:center;top:2011.0px;font-size:18.84px;font-family:'Liberation Sans';color:#4a4a4a;font-weight:bold"><span id="t50">V</span></div>
<svg style="left:396px;top:1993px;" width="34" height="38" viewBox="0 0 34 38"><path d="M8 6 Q8 2 14 2 L20 2 L20 8 M4 12 L4 32 Q4 34 6 34 L28 34 Q30 34 30 32 L30 12 Q30 10 28 10 L10 10" fill="none" stroke="#b4b4b4" stroke-width="2.4"/><path d="M20 4 L20 24 M13 17 L20 24 L27 17" fill="none" stroke="#b4b4b4" stroke-width="2.4"/></svg>
<svg style="left:444px;top:1993px;" width="40" height="40" viewBox="0 0 40 40"><path d="M16 2 Q4 18 4 24 Q4 34 16 34 Q22 34 26 30" fill="none" stroke="#b4b4b4" stroke-width="2.4"/><path d="M16 2 Q26 14 28 20" fill="none" stroke="#b4b4b4" stroke-width="2.4"/><circle cx="30" cy="30" r="9" fill="#b4b4b4"/><path d="M30 24 L30 36 M24 30 L36 30" stroke="#4e4e4e" stroke-width="2.4"/></svg>
<svg style="left:496px;top:1991px;" width="34" height="40" viewBox="0 0 34 40"><path d="M3 7 L31 7 M12 7 L12 2 L22 2 L22 7 M6 7 L8 34 Q8 36 10 36 L24 36 Q26 36 26 34 L28 7 M13 12 L13 31 M17 12 L17 31 M21 12 L21 31" fill="none" stroke="#b4b4b4" stroke-width="2.2"/></svg>
<div style="left:639px;top:232px;width:2355px;height:35px;background:#4a4a4a;"></div>
<div style="left:639px;top:267px;width:34px;height:1702px;background:#4a4a4a;"></div>
<svg style="left:673px;top:232px;overflow:hidden" width="2321" height="35" viewBox="0 0 2321 35"><g fill="none" stroke="#d2d2d2" stroke-width="1.7" stroke-linecap="square"><path d="M0.5 28 L0.5 35 M5.9 24 L5.9 35 M11.2 28 L11.2 35 M16.5 28 L16.5 35 M21.9 28 L21.9 35 M27.2 28 L27.2 35 M32.5 1 L32.5 35 M37.9 28 L37.9 35 M43.2 28 L43.2 35 M48.5 28 L48.5 35 M53.9 28 L53.9 35 M59.2 24 L59.2 35 M64.5 28 L64.5 35 M69.9 28 L69.9 35 M75.2 28 L75.2 35 M80.5 28 L80.5 35 M85.9 24 L85.9 35 M91.2 28 L91.2 35 M96.5 28 L96.5 35 M101.9 28 L101.9 35 M107.2 28 L107.2 35 M112.5 24 L112.5 35 M117.9 28 L117.9 35 M123.2 28 L123.2 35 M128.5 28 L128.5 35 M133.9 28 L133.9 35 M139.2 1 L139.2 35 M144.5 28 L144.5 35 M149.9 28 L149.9 35 M155.2 28 L155.2 35 M160.5 28 L160.5 35 M165.9 24 L165.9 35 M171.2 28 L171.2 35 M176.5 28 L176.5 35 M181.9 28 L181.9 35 M187.2 28 L187.2 35 M192.5 24 L192.5 35 M197.9 28 L197.9 35 M203.2 28 L203.2 35 M208.5 28 L208.5 35 M213.9 28 L213.9 35 M219.2 24 L219.2 35 M224.5 28 L224.5 35 M229.9 28 L229.9 35 M235.2 28 L235.2 35 M240.5 28 L240.5 35 M245.9 1 L245.9 35 M251.2 28 L251.2 35 M256.5 28 L256.5 35 M261.9 28 L261.9 35 M267.2 28 L267.2 35 M272.5 24 L272.5 35 M277.9 28 L277.9 35 M283.2 28 L283.2 35 M288.5 28 L288.5 35 M293.9 28 L293.9 35 M299.2 24 L299.2 35 M304.5 28 L304.5 35 M309.9 28 L309.9 35 M315.2 28 L315.2 35 M320.5 28 L320.5 35 M325.9 24 L325.9 35 M331.2 28 L331.2 35 M336.5 28 L336.5 35 M341.9 28 L341.9 35 M347.2 28 L347.2 35 M352.5 1 L352.5 35 M357.9 28 L357.9 35 M363.2 28 L363.2 35 M368.5 28 L368.5 35 M373.9 28 L373.9 35 M379.2 24 L379.2 35 M384.5 28 L384.5 35 M389.9 28 L389.9 35 M395.2 28 L395.2 35 M400.5 28 L400.5 35 M405.9 24 L405.9 35 M411.2 28 L411.2 35 M416.5 28 L416.5 35 M421.9 28 L421.9 35 M427.2 28 L427.2 35 M432.5 24 L432.5 35 M437.9 28 L437.9 35 M443.2 28 L443.2 35 M448.5 28 L448.5 35 M453.9 28 L453.9 35 M459.2 1 L459.2 35 M464.5 28 L464.5 35 M469.9 28 L469.9 35 M475.2 28 L475.2 35 M480.5 28 L480.5 35 M485.9 24 L485.9 35 M491.2 28 L491.2 35 M496.5 28 L496.5 35 M501.9 28 L501.9 35 M507.2 28 L507.2 35 M512.5 24 L512.5 35 M517.9 28 L517.9 35 M523.2 28 L523.2 35 M528.5 28 L528.5 35 M533.9 28 L533.9 35 M539.2 24 L539.2 35 M544.5 28 L544.5 35 M549.9 28 L549.9 35 M555.2 28 L555.2 35 M560.5 28 L560.5 35 M565.9 1 L565.9 35 M571.2 28 L571.2 35 M576.5 28 L576.5 35 M581.9 28 L581.9 35 M587.2 28 L587.2 35 M592.5 24 L592.5 35 M597.9 28 L597.9 35 M603.2 28 L603.2 35 M608.5 28 L608.5 35 M613.9 28 L613.9 35 M619.2 24 L619.2 35 M624.5 28 L624.5 35 M629.9 28 L629.9 35 M635.2 28 L635.2 35 M640.5 28 L640.5 35 M645.9 24 L645.9 35 M651.2 28 L651.2 35 M656.5 28 L656.5 35 M661.9 28 L661.9 35 M667.2 28 L667.2 35 M672.5 1 L672.5 35 M677.9 28 L677.9 35 M683.2 28 L683.2 35 M688.5 28 L688.5 35 M693.9 28 L693.9 35 M699.2 24 L699.2 35 M704.5 28 L704.5 35 M709.9 28 L709.9 35 M715.2 28 L715.2 35 M720.5 28 L720.5 35 M725.9 24 L725.9 35 M731.2 28 L731.2 35 M736.5 28 L736.5 35 M741.9 28 L741.9 35 M747.2 28 L747.2 35 M752.5 24 L752.5 35 M757.9 28 L757.9 35 M763.2 28 L763.2 35 M768.5 28 L768.5 35 M773.9 28 L773.9 35 M779.2 1 L779.2 35 M784.5 28 L784.5 35 M789.9 28 L789.9 35 M795.2 28 L795.2 35 M800.5 28 L800.5 35 M805.9 24 L805.9 35 M811.2 28 L811.2 35 M816.5 28 L816.5 35 M821.9 28 L821.9 35 M827.2 28 L827.2 35 M832.5 24 L832.5 35 M837.9 28 L837.9 35 M843.2 28 L843.2 35 M848.5 28 L848.5 35 M853.9 28 L853.9 35 M859.2 24 L859.2 35 M864.5 28 L864.5 35 M869.9 28 L869.9 35 M875.2 28 L875.2 35 M880.5 28 L880.5 35 M885.9 1 L885.9 35 M891.2 28 L891.2 35 M896.5 28 L896.5 35 M901.9 28 L901.9 35 M907.2 28 L907.2 35 M912.5 24 L912.5 35 M917.9 28 L917.9 35 M923.2 28 L923.2 35 M928.5 28 L928.5 35 M933.9 28 L933.9 35 M939.2 24 L939.2 35 M944.5 28 L944.5 35 M949.9 28 L949.9 35 M955.2 28 L955.2 35 M960.5 28 L960.5 35 M965.9 24 L965.9 35 M971.2 28 L971.2 35 M976.5 28 L976.5 35 M981.9 28 L981.9 35 M987.2 28 L987.2 35 M992.5 1 L992.5 35 M997.9 28 L997.9 35 M1003.2 28 L1003.2 35 M1008.5 28 L1008.5 35 M1013.9 28 L1013.9 35 M1019.2 24 L1019.2 35 M1024.5 28 L1024.5 35 M1029.9 28 L1029.9 35 M1035.2 28 L1035.2 35 M1040.5 28 L1040.5 35 M1045.9 24 L1045.9 35 M1051.2 28 L1051.2 35 M1056.5 28 L1056.5 35 M1061.9 28 L1061.9 35 M1067.2 28 L1067.2 35 M1072.5 24 L1072.5 35 M1077.9 28 L1077.9 35 M1083.2 28 L1083.2 35 M1088.5 28 L1088.5 35 M1093.9 28 L1093.9 35 M1099.2 1 L1099.2 35 M1104.5 28 L1104.5 35 M1109.9 28 L1109.9 35 M1115.2 28 L1115.2 35 M1120.5 28 L1120.5 35 M1125.9 24 L1125.9 35 M1131.2 28 L1131.2 35 M1136.5 28 L1136.5 35 M1141.9 28 L1141.9 35 M1147.2 28 L1147.2 35 M1152.5 24 L1152.5 35 M1157.9 28 L1157.9 35 M1163.2 28 L1163.2 35 M1168.5 28 L1168.5 35 M1173.9 28 L1173.9 35 M1179.2 24 L1179.2 35 M1184.5 28 L1184.5 35 M1189.9 28 L1189.9 35 M1195.2 28 L1195.2 35 M1200.5 28 L1200.5 35 M1205.9 1 L1205.9 35 M1211.2 28 L1211.2 35 M1216.5 28 L1216.5 35 M1221.9 28 L1221.9 35 M1227.2 28 L1227.2 35 M1232.5 24 L1232.5 35 M1237.9 28 L1237.9 35 M1243.2 28 L1243.2 35 M1248.5 28 L1248.5 35 M1253.9 28 L1253.9 35 M1259.2 24 L1259.2 35 M1264.5 28 L1264.5 35 M1269.9 28 L1269.9 35 M1275.2 28 L1275.2 35 M1280.5 28 L1280.5 35 M1285.9 24 L1285.9 35 M1291.2 28 L1291.2 35 M1296.5 28 L1296.5 35 M1301.9 28 L1301.9 35 M1307.2 28 L1307.2 35 M1312.5 1 L1312.5 35 M1317.9 28 L1317.9 35 M1323.2 28 L1323.2 35 M1328.5 28 L1328.5 35 M1333.9 28 L1333.9 35 M1339.2 24 L1339.2 35 M1344.5 28 L1344.5 35 M1349.9 28 L1349.9 35 M1355.2 28 L1355.2 35 M1360.5 28 L1360.5 35 M1365.9 24 L1365.9 35 M1371.2 28 L1371.2 35 M1376.5 28 L1376.5 35 M1381.9 28 L1381.9 35 M1387.2 28 L1387.2 35 M1392.5 24 L1392.5 35 M1397.9 28 L1397.9 35 M1403.2 28 L1403.2 35 M1408.5 28 L1408.5 35 M1413.9 28 L1413.9 35 M1419.2 1 L1419.2 35 M1424.5 28 L1424.5 35 M1429.9 28 L1429.9 35 M1435.2 28 L1435.2 35 M1440.5 28 L1440.5 35 M1445.9 24 L1445.9 35 M1451.2 28 L1451.2 35 M1456.5 28 L1456.5 35 M1461.9 28 L1461.9 35 M1467.2 28 L1467.2 35 M1472.5 24 L1472.5 35 M1477.9 28 L1477.9 35 M1483.2 28 L1483.2 35 M1488.5 28 L1488.5 35 M1493.9 28 L1493.9 35 M1499.2 24 L1499.2 35 M1504.5 28 L1504.5 35 M1509.9 28 L1509.9 35 M1515.2 28 L1515.2 35 M1520.5 28 L1520.5 35 M1525.9 1 L1525.9 35 M1531.2 28 L1531.2 35 M1536.5 28 L1536.5 35 M1541.9 28 L1541.9 35 M1547.2 28 L1547.2 35 M1552.5 24 L1552.5 35 M1557.9 28 L1557.9 35 M1563.2 28 L1563.2 35 M1568.5 28 L1568.5 35 M1573.9 28 L1573.9 35 M1579.2 24 L1579.2 35 M1584.5 28 L1584.5 35 M1589.9 28 L1589.9 35 M1595.2 28 L1595.2 35 M1600.5 28 L1600.5 35 M1605.9 24 L1605.9 35 M1611.2 28 L1611.2 35 M1616.5 28 L1616.5 35 M1621.9 28 L1621.9 35 M1627.2 28 L1627.2 35 M1632.5 1 L1632.5 35 M1637.9 28 L1637.9 35 M1643.2 28 L1643.2 35 M1648.5 28 L1648.5 35 M1653.9 28 L1653.9 35 M1659.2 24 L1659.2 35 M1664.5 28 L1664.5 35 M1669.9 28 L1669.9 35 M1675.2 28 L1675.2 35 M1680.5 28 L1680.5 35 M1685.9 24 L1685.9 35 M1691.2 28 L1691.2 35 M1696.5 28 L1696.5 35 M1701.9 28 L1701.9 35 M1707.2 28 L1707.2 35 M1712.5 24 L1712.5 35 M1717.9 28 L1717.9 35 M1723.2 28 L1723.2 35 M1728.5 28 L1728.5 35 M1733.9 28 L1733.9 35 M1739.2 1 L1739.2 35 M1744.5 28 L1744.5 35 M1749.9 28 L1749.9 35 M1755.2 28 L1755.2 35 M1760.5 28 L1760.5 35 M1765.9 24 L1765.9 35 M1771.2 28 L1771.2 35 M1776.5 28 L1776.5 35 M1781.9 28 L1781.9 35 M1787.2 28 L1787.2 35 M1792.5 24 L1792.5 35 M1797.9 28 L1797.9 35 M1803.2 28 L1803.2 35 M1808.5 28 L1808.5 35 M1813.9 28 L1813.9 35 M1819.2 24 L1819.2 35 M1824.5 28 L1824.5 35 M1829.9 28 L1829.9 35 M1835.2 28 L1835.2 35 M1840.5 28 L1840.5 35 M1845.9 1 L1845.9 35 M1851.2 28 L1851.2 35 M1856.5 28 L1856.5 35 M1861.9 28 L1861.9 35 M1867.2 28 L1867.2 35 M1872.5 24 L1872.5 35 M1877.9 28 L1877.9 35 M1883.2 28 L1883.2 35 M1888.5 28 L1888.5 35 M1893.9 28 L1893.9 35 M1899.2 24 L1899.2 35 M1904.5 28 L1904.5 35 M1909.9 28 L1909.9 35 M1915.2 28 L1915.2 35 M1920.5 28 L1920.5 35 M1925.9 24 L1925.9 35 M1931.2 28 L1931.2 35 M1936.5 28 L1936.5 35 M1941.9 28 L1941.9 35 M1947.2 28 L1947.2 35 M1952.5 1 L1952.5 35 M1957.9 28 L1957.9 35 M1963.2 28 L1963.2 35 M1968.5 28 L1968.5 35 M1973.9 28 L1973.9 35 M1979.2 24 L1979.2 35 M1984.5 28 L1984.5 35 M1989.9 28 L1989.9 35 M1995.2 28 L1995.2 35 M2000.5 28 L2000.5 35 M2005.9 24 L2005.9 35 M2011.2 28 L2011.2 35 M2016.5 28 L2016.5 35 M2021.9 28 L2021.9 35 M2027.2 28 L2027.2 35 M2032.5 24 L2032.5 35 M2037.9 28 L2037.9 35 M2043.2 28 L2043.2 35 M2048.5 28 L2048.5 35 M2053.9 28 L2053.9 35 M2059.2 1 L2059.2 35 M2064.5 28 L2064.5 35 M2069.9 28 L2069.9 35 M2075.2 28 L2075.2 35 M2080.5 28 L2080.5 35 M2085.9 24 L2085.9 35 M2091.2 28 L2091.2 35 M2096.5 28 L2096.5 35 M2101.9 28 L2101.9 35 M2107.2 28 L2107.2 35 M2112.5 24 L2112.5 35 M2117.9 28 L2117.9 35 M2123.2 28 L2123.2 35 M2128.5 28 L2128.5 35 M2133.9 28 L2133.9 35 M2139.2 24 L2139.2 35 M2144.5 28 L2144.5 35 M2149.9 28 L2149.9 35 M2155.2 28 L2155.2 35 M2160.5 28 L2160.5 35 M2165.9 1 L2165.9 35 M2171.2 28 L2171.2 35 M2176.5 28 L2176.5 35 M2181.9 28 L2181.9 35 M2187.2 28 L2187.2 35 M2192.5 24 L2192.5 35 M2197.9 28 L2197.9 35 M2203.2 28 L2203.2 35 M2208.5 28 L2208.5 35 M2213.9 28 L2213.9 35 M2219.2 24 L2219.2 35 M2224.5 28 L2224.5 35 M2229.9 28 L2229.9 35 M2235.2 28 L2235.2 35 M2240.5 28 L2240.5 35 M2245.9 24 L2245.9 35 M2251.2 28 L2251.2 35 M2256.5 28 L2256.5 35 M2261.9 28 L2261.9 35 M2267.2 28 L2267.2 35 M2272.5 1 L2272.5 35 M2277.9 28 L2277.9 35 M2283.2 28 L2283.2 35 M2288.5 28 L2288.5 35 M2293.9 28 L2293.9 35 M2299.2 24 L2299.2 35 M2304.5 28 L2304.5 35 M2309.9 28 L2309.9 35 M2315.2 28 L2315.2 35 M2320.5 28 L2320.5 35 " stroke-width="1.2" stroke-linecap="butt"/><path transform="translate(38.53,6.00) scale(2.3,2.2)" d="M0 1 L1 0 L3 0 L4 1 L4 3 L3 4 L1 4 M3 4 L4 5 L4 7 L3 8 L1 8 L0 7" vector-effect="non-scaling-stroke"/><path transform="translate(54.53,6.00) scale(2.3,2.2)" d="M0 1 L1 0 L3 0 L4 1 L4 3 L0 7 L0 8 L4 8" vector-effect="non-scaling-stroke"/><path transform="translate(70.53,6.00) scale(2.3,2.2)" d="M1 0 L3 0 L4 1 L4 7 L3 8 L1 8 L0 7 L0 1 Z" vector-effect="non-scaling-stroke"/><path transform="translate(145.20,6.00) scale(2.3,2.2)" d="M3 8 L3 0 L0 5 L0 6 L4 6 M2 8 L4 8" vector-effect="non-scaling-stroke"/><path transform="translate(161.20,6.00) scale(2.3,2.2)" d="M1 0 L3 0 L4 1 L4 3 L3 4 L1 4 L0 3 L0 1 Z M1 4 L0 5 L0 7 L1 8 L3 8 L4 7 L4 5 L3 4" vector-effect="non-scaling-stroke"/><path transform="translate(177.20,6.00) scale(2.3,2.2)" d="M1 0 L3 0 L4 1 L4 7 L3 8 L1 8 L0 7 L0 1 Z" vector-effect="non-scaling-stroke"/><path transform="translate(251.87,6.00) scale(2.3,2.2)" d="M3 0 L1 0 L0 1 L0 7 L1 8 L3 8 L4 7 L4 5 L3 4 L0 4" vector-effect="non-scaling-stroke"/><path transform="translate(267.87,6.00) scale(2.3,2.2)" d="M3 8 L3 0 L0 5 L0 6 L4 6 M2 8 L4 8" vector-effect="non-scaling-stroke"/><path transform="translate(283.87,6.00) scale(2.3,2.2)" d="M1 0 L3 0 L4 1 L4 7 L3 8 L1 8 L0 7 L0 1 Z" vector-effect="non-scaling-stroke"/><path transform="translate(358.53,6.00) scale(2.3,2.2)" d="M1 0 L3 0 L4 1 L4 3 L3 4 L1 4 L0 3 L0 1 Z M1 4 L0 5 L0 7 L1 8 L3 8 L4 7 L4 5 L3 4" vector-effect="non-scaling-stroke"/><path transform="translate(374.53,6.00) scale(2.3,2.2)" d="M1 0 L3 0 L4 1 L4 7 L3 8 L1 8 L0 7 L0 1 Z" vector-effect="non-scaling-stroke"/><path transform="translate(390.53,6.00) scale(2.3,2.2)" d="M1 0 L3 0 L4 1 L4 7 L3 8 L1 8 L0 7 L0 1 Z" vector-effect="non-scaling-stroke"/><path transform="translate(465.20,6.00) scale(2.3,2.2)" d="M4 4 L1 4 L0 3 L0 1 L1 0 L3 0 L4 1 L4 7 L3 8 L1 8" vector-effect="non-scaling-stroke"/><path transform="translate(481.20,6.00) scale(2.3,2.2)" d="M3 0 L1 0 L0 1 L0 7 L1 8 L3 8 L4 7 L4 5 L3 4 L0 4" vector-effect="non-scaling-stroke"/><path transform="translate(497.20,6.00) scale(2.3,2.2)" d="M1 0 L3 0 L4 1 L4 7 L3 8 L1 8 L0 7 L0 1 Z" vector-effect="non-scaling-stroke"/><path transform="translate(571.87,6.00) scale(2.3,2.2)" d="M1 1 L2 0 L2 8 M1 8 L3 8" vector-effect="non-scaling-stroke"/><path transform="translate(587.87,6.00) scale(2.3,2.2)" d="M1 1 L2 0 L2 8 M1 8 L3 8" vector-effect="non-scaling-stroke"/><path transform="translate(603.87,6.00) scale(2.3,2.2)" d="M0 1 L1 0 L3 0 L4 1 L4 3 L0 7 L0 8 L4 8" vector-effect="non-scaling-stroke"/><path transform="translate(619.87,6.00) scale(2.3,2.2)" d="M1 0 L3 0 L4 1 L4 7 L3 8 L1 8 L0 7 L0 1 Z" vector-effect="non-scaling-stroke"/><path transform="translate(678.53,6.00) scale(2.3,2.2)" d="M1 1 L2 0 L2 8 M1 8 L3 8" vector-effect="non-scaling-stroke"/><path transform="translate(694.53,6.00) scale(2.3,2.2)" d="M0 1 L1 0 L3 0 L4 1 L4 3 L0 7 L0 8 L4 8" vector-effect="non-scaling-stroke"/><path transform="translate(710.53,6.00) scale(2.3,2.2)" d="M1 0 L3 0 L4 1 L4 3 L3 4 L1 4 L0 3 L0 1 Z M1 4 L0 5 L0 7 L1 8 L3 8 L4 7 L4 5 L3 4" vector-effect="non-scaling-stroke"/><path transform="translate(726.53,6.00) scale(2.3,2.2)" d="M1 0 L3 0 L4 1 L4 7 L3 8 L1 8 L0 7 L0 1 Z" vector-effect="non-scaling-stroke"/><path transform="translate(785.20,6.00) scale(2.3,2.2)" d="M1 1 L2 0 L2 8 M1 8 L3 8" vector-effect="non-scaling-stroke"/><path transform="translate(801.20,6.00) scale(2.3,2.2)" d="M3 8 L3 0 L0 5 L0 6 L4 6 M2 8 L4 8" vector-effect="non-scaling-stroke"/><path transform="translate(817.20,6.00) scale(2.3,2.2)" d="M3 8 L3 0 L0 5 L0 6 L4 6 M2 8 L4 8" vector-effect="non-scaling-stroke"/><path transform="translate(833.20,6.00) scale(2.3,2.2)" d="M1 0 L3 0 L4 1 L4 7 L3 8 L1 8 L0 7 L0 1 Z" vector-effect="non-scaling-stroke"/><path transform="translate(891.87,6.00) scale(2.3,2.2)" d="M1 1 L2 0 L2 8 M1 8 L3 8" vector-effect="non-scaling-stroke"/><path transform="translate(907.87,6.00) scale(2.3,2.2)" d="M3 0 L1 0 L0 1 L0 7 L1 8 L3 8 L4 7 L4 5 L3 4 L0 4" vector-effect="non-scaling-stroke"/><path transform="translate(923.87,6.00) scale(2.3,2.2)" d="M1 0 L3 0 L4 1 L4 7 L3 8 L1 8 L0 7 L0 1 Z" vector-effect="non-scaling-stroke"/><path transform="translate(939.87,6.00) scale(2.3,2.2)" d="M1 0 L3 0 L4 1 L4 7 L3 8 L1 8 L0 7 L0 1 Z" vector-effect="non-scaling-stroke"/><path transform="translate(998.53,6.00) scale(2.3,2.2)" d="M1 1 L2 0 L2 8 M1 8 L3 8" vector-effect="non-scaling-stroke"/><path transform="translate(1014.53,6.00) scale(2.3,2.2)" d="M0 0 L4 0 L4 1 L2 5 L2 8" vector-effect="non-scaling-stroke"/><path transform="translate(1030.53,6.00) scale(2.3,2.2)" d="M3 0 L1 0 L0 1 L0 7 L1 8 L3 8 L4 7 L4 5 L3 4 L0 4" vector-effect="non-scaling-stroke"/><path transform="translate(1046.53,6.00) scale(2.3,2.2)" d="M1 0 L3 0 L4 1 L4 7 L3 8 L1 8 L0 7 L0 1 Z" vector-effect="non-scaling-stroke"/><path transform="translate(1105.20,6.00) scale(2.3,2.2)" d="M1 1 L2 0 L2 8 M1 8 L3 8" vector-effect="non-scaling-stroke"/><path transform="translate(1121.20,6.00) scale(2.3,2.2)" d="M4 4 L1 4 L0 3 L0 1 L1 0 L3 0 L4 1 L4 7 L3 8 L1 8" vector-effect="non-scaling-stroke"/><path transform="translate(1137.20,6.00) scale(2.3,2.2)" d="M0 1 L1 0 L3 0 L4 1 L4 3 L0 7 L0 8 L4 8" vector-effect="non-scaling-stroke"/><path transform="translate(1153.20,6.00) scale(2.3,2.2)" d="M1 0 L3 0 L4 1 L4 7 L3 8 L1 8 L0 7 L0 1 Z" vector-effect="non-scaling-stroke"/><path transform="translate(1211.87,6.00) scale(2.3,2.2)" d="M0 1 L1 0 L3 0 L4 1 L4 3 L0 7 L0 8 L4 8" vector-effect="non-scaling-stroke"/><path transform="translate(1227.87,6.00) scale(2.3,2.2)" d="M1 0 L3 0 L4 1 L4 7 L3 8 L1 8 L0 7 L0 1 Z" vector-effect="non-scaling-stroke"/><path transform="translate(1243.87,6.00) scale(2.3,2.2)" d="M1 0 L3 0 L4 1 L4 3 L3 4 L1 4 L0 3 L0 1 Z M1 4 L0 5 L0 7 L1 8 L3 8 L4 7 L4 5 L3 4" vector-effect="non-scaling-stroke"/><path transform="translate(1259.87,6.00) scale(2.3,2.2)" d="M1 0 L3 0 L4 1 L4 7 L3 8 L1 8 L0 7 L0 1 Z" vector-effect="non-scaling-stroke"/><path transform="translate(1318.53,6.00) scale(2.3,2.2)" d="M0 1 L1 0 L3 0 L4 1 L4 3 L0 7 L0 8 L4 8" vector-effect="non-scaling-stroke"/><path transform="translate(1334.53,6.00) scale(2.3,2.2)" d="M0 1 L1 0 L3 0 L4 1 L4 3 L0 7 L0 8 L4 8" vector-effect="non-scaling-stroke"/><path transform="translate(1350.53,6.00) scale(2.3,2.2)" d="M3 8 L3 0 L0 5 L0 6 L4 6 M2 8 L4 8" vector-effect="non-scaling-stroke"/><path transform="translate(1366.53,6.00) scale(2.3,2.2)" d="M1 0 L3 0 L4 1 L4 7 L3 8 L1 8 L0 7 L0 1 Z" vector-effect="non-scaling-stroke"/><path transform="translate(1425.20,6.00) scale(2.3,2.2)" d="M0 1 L1 0 L3 0 L4 1 L4 3 L0 7 L0 8 L4 8" vector-effect="non-scaling-stroke"/><path transform="translate(1441.20,6.00) scale(2.3,2.2)" d="M3 8 L3 0 L0 5 L0 6 L4 6 M2 8 L4 8" vector-effect="non-scaling-stroke"/><path transform="translate(1457.20,6.00) scale(2.3,2.2)" d="M1 0 L3 0 L4 1 L4 7 L3 8 L1 8 L0 7 L0 1 Z" vector-effect="non-scaling-stroke"/><path transform="translate(1473.20,6.00) scale(2.3,2.2)" d="M1 0 L3 0 L4 1 L4 7 L3 8 L1 8 L0 7 L0 1 Z" vector-effect="non-scaling-stroke"/><path transform="translate(1531.87,6.00) scale(2.3,2.2)" d="M0 1 L1 0 L3 0 L4 1 L4 3 L0 7 L0 8 L4 8" vector-effect="non-scaling-stroke"/><path transform="translate(1547.87,6.00) scale(2.3,2.2)" d="M4 0 L0 0 L0 4 L3 4 L4 5 L4 7 L3 8 L1 8 L0 7" vector-effect="non-scaling-stroke"/><path transform="translate(1563.87,6.00) scale(2.3,2.2)" d="M3 0 L1 0 L0 1 L0 7 L1 8 L3 8 L4 7 L4 5 L3 4 L0 4" vector-effect="non-scaling-stroke"/><path transform="translate(1579.87,6.00) scale(2.3,2.2)" d="M1 0 L3 0 L4 1 L4 7 L3 8 L1 8 L0 7 L0 1 Z" vector-effect="non-scaling-stroke"/><path transform="translate(1638.53,6.00) scale(2.3,2.2)" d="M0 1 L1 0 L3 0 L4 1 L4 3 L0 7 L0 8 L4 8" vector-effect="non-scaling-stroke"/><path transform="translate(1654.53,6.00) scale(2.3,2.2)" d="M0 0 L4 0 L4 1 L2 5 L2 8" vector-effect="non-scaling-stroke"/><path transform="translate(1670.53,6.00) scale(2.3,2.2)" d="M0 1 L1 0 L3 0 L4 1 L4 3 L0 7 L0 8 L4 8" vector-effect="non-scaling-stroke"/><path transform="translate(1686.53,6.00) scale(2.3,2.2)" d="M1 0 L3 0 L4 1 L4 7 L3 8 L1 8 L0 7 L0 1 Z" vector-effect="non-scaling-stroke"/><path transform="translate(1745.20,6.00) scale(2.3,2.2)" d="M0 1 L1 0 L3 0 L4 1 L4 3 L0 7 L0 8 L4 8" vector-effect="non-scaling-stroke"/><path transform="translate(1761.20,6.00) scale(2.3,2.2)" d="M1 0 L3 0 L4 1 L4 3 L3 4 L1 4 L0 3 L0 1 Z M1 4 L0 5 L0 7 L1 8 L3 8 L4 7 L4 5 L3 4" vector-effect="non-scaling-stroke"/><path transform="translate(1777.20,6.00) scale(2.3,2.2)" d="M1 0 L3 0 L4 1 L4 3 L3 4 L1 4 L0 3 L0 1 Z M1 4 L0 5 L0 7 L1 8 L3 8 L4 7 L4 5 L3 4" vector-effect="non-scaling-stroke"/><path transform="translate(1793.20,6.00) scale(2.3,2.2)" d="M1 0 L3 0 L4 1 L4 7 L3 8 L1 8 L0 7 L0 1 Z" vector-effect="non-scaling-stroke"/><path transform="translate(1851.87,6.00) scale(2.3,2.2)" d="M0 1 L1 0 L3 0 L4 1 L4 3 L3 4 L1 4 M3 4 L4 5 L4 7 L3 8 L1 8 L0 7" vector-effect="non-scaling-stroke"/><path transform="translate(1867.87,6.00) scale(2.3,2.2)" d="M1 0 L3 0 L4 1 L4 7 L3 8 L1 8 L0 7 L0 1 Z" vector-effect="non-scaling-stroke"/><path transform="translate(1883.87,6.00) scale(2.3,2.2)" d="M3 8 L3 0 L0 5 L0 6 L4 6 M2 8 L4 8" vector-effect="non-scaling-stroke"/><path transform="translate(1899.87,6.00) scale(2.3,2.2)" d="M1 0 L3 0 L4 1 L4 7 L3 8 L1 8 L0 7 L0 1 Z" vector-effect="non-scaling-stroke"/><path transform="translate(1958.53,6.00) scale(2.3,2.2)" d="M0 1 L1 0 L3 0 L4 1 L4 3 L3 4 L1 4 M3 4 L4 5 L4 7 L3 8 L1 8 L0 7" vector-effect="non-scaling-stroke"/><path transform="translate(1974.53,6.00) scale(2.3,2.2)" d="M0 1 L1 0 L3 0 L4 1 L4 3 L0 7 L0 8 L4 8" vector-effect="non-scaling-stroke"/><path transform="translate(1990.53,6.00) scale(2.3,2.2)" d="M1 0 L3 0 L4 1 L4 7 L3 8 L1 8 L0 7 L0 1 Z" vector-effect="non-scaling-stroke"/><path transform="translate(2006.53,6.00) scale(2.3,2.2)" d="M1 0 L3 0 L4 1 L4 7 L3 8 L1 8 L0 7 L0 1 Z" vector-effect="non-scaling-stroke"/><path transform="translate(2065.20,6.00) scale(2.3,2.2)" d="M0 1 L1 0 L3 0 L4 1 L4 3 L3 4 L1 4 M3 4 L4 5 L4 7 L3 8 L1 8 L0 7" vector-effect="non-scaling-stroke"/><path transform="translate(2081.20,6.00) scale(2.3,2.2)" d="M0 1 L1 0 L3 0 L4 1 L4 3 L3 4 L1 4 M3 4 L4 5 L4 7 L3 8 L1 8 L0 7" vector-effect="non-scaling-stroke"/><path transform="translate(2097.20,6.00) scale(2.3,2.2)" d="M3 0 L1 0 L0 1 L0 7 L1 8 L3 8 L4 7 L4 5 L3 4 L0 4" vector-effect="non-scaling-stroke"/><path transform="translate(2113.20,6.00) scale(2.3,2.2)" d="M1 0 L3 0 L4 1 L4 7 L3 8 L1 8 L0 7 L0 1 Z" vector-effect="non-scaling-stroke"/><path transform="translate(2171.87,6.00) scale(2.3,2.2)" d="M0 1 L1 0 L3 0 L4 1 L4 3 L3 4 L1 4 M3 4 L4 5 L4 7 L3 8 L1 8 L0 7" vector-effect="non-scaling-stroke"/><path transform="translate(2187.87,6.00) scale(2.3,2.2)" d="M4 0 L0 0 L0 4 L3 4 L4 5 L4 7 L3 8 L1 8 L0 7" vector-effect="non-scaling-stroke"/><path transform="translate(2203.87,6.00) scale(2.3,2.2)" d="M0 1 L1 0 L3 0 L4 1 L4 3 L0 7 L0 8 L4 8" vector-effect="non-scaling-stroke"/><path transform="translate(2219.87,6.00) scale(2.3,2.2)" d="M1 0 L3 0 L4 1 L4 7 L3 8 L1 8 L0 7 L0 1 Z" vector-effect="non-scaling-stroke"/><path transform="translate(2278.53,6.00) scale(2.3,2.2)" d="M0 1 L1 0 L3 0 L4 1 L4 3 L3 4 L1 4 M3 4 L4 5 L4 7 L3 8 L1 8 L0 7" vector-effect="non-scaling-stroke"/><path transform="translate(2294.53,6.00) scale(2.3,2.2)" d="M3 0 L1 0 L0 1 L0 7 L1 8 L3 8 L4 7 L4 5 L3 4 L0 4" vector-effect="non-scaling-stroke"/><path transform="translate(2310.53,6.00) scale(2.3,2.2)" d="M1 0 L3 0 L4 1 L4 3 L3 4 L1 4 L0 3 L0 1 Z M1 4 L0 5 L0 7 L1 8 L3 8 L4 7 L4 5 L3 4" vector-effect="non-scaling-stroke"/><path transform="translate(2326.53,6.00) scale(2.3,2.2)" d="M1 0 L3 0 L4 1 L4 7 L3 8 L1 8 L0 7 L0 1 Z" vector-effect="non-scaling-stroke"/></g></svg>
<svg style="left:639px;top:267px;overflow:hidden" width="34" height="1702" viewBox="0 0 34 1702"><g fill="none" stroke="#d2d2d2" stroke-width="1.7" stroke-linecap="square"><path d="M27 4.0 L34 4.0 M27 9.3 L34 9.3 M27 14.7 L34 14.7 M27 20.0 L34 20.0 M23 25.3 L34 25.3 M27 30.7 L34 30.7 M27 36.0 L34 36.0 M27 41.3 L34 41.3 M27 46.7 L34 46.7 M23 52.0 L34 52.0 M27 57.3 L34 57.3 M27 62.7 L34 62.7 M27 68.0 L34 68.0 M27 73.3 L34 73.3 M1 78.7 L34 78.7 M27 84.0 L34 84.0 M27 89.3 L34 89.3 M27 94.7 L34 94.7 M27 100.0 L34 100.0 M23 105.3 L34 105.3 M27 110.7 L34 110.7 M27 116.0 L34 116.0 M27 121.3 L34 121.3 M27 126.7 L34 126.7 M23 132.0 L34 132.0 M27 137.3 L34 137.3 M27 142.7 L34 142.7 M27 148.0 L34 148.0 M27 153.3 L34 153.3 M23 158.7 L34 158.7 M27 164.0 L34 164.0 M27 169.3 L34 169.3 M27 174.7 L34 174.7 M27 180.0 L34 180.0 M1 185.3 L34 185.3 M27 190.7 L34 190.7 M27 196.0 L34 196.0 M27 201.3 L34 201.3 M27 206.7 L34 206.7 M23 212.0 L34 212.0 M27 217.3 L34 217.3 M27 222.7 L34 222.7 M27 228.0 L34 228.0 M27 233.3 L34 233.3 M23 238.7 L34 238.7 M27 244.0 L34 244.0 M27 249.3 L34 249.3 M27 254.7 L34 254.7 M27 260.0 L34 260.0 M23 265.3 L34 265.3 M27 270.7 L34 270.7 M27 276.0 L34 276.0 M27 281.3 L34 281.3 M27 286.7 L34 286.7 M1 292.0 L34 292.0 M27 297.3 L34 297.3 M27 302.7 L34 302.7 M27 308.0 L34 308.0 M27 313.3 L34 313.3 M23 318.7 L34 318.7 M27 324.0 L34 324.0 M27 329.3 L34 329.3 M27 334.7 L34 334.7 M27 340.0 L34 340.0 M23 345.3 L34 345.3 M27 350.7 L34 350.7 M27 356.0 L34 356.0 M27 361.3 L34 361.3 M27 366.7 L34 366.7 M23 372.0 L34 372.0 M27 377.3 L34 377.3 M27 382.7 L34 382.7 M27 388.0 L34 388.0 M27 393.3 L34 393.3 M1 398.7 L34 398.7 M27 404.0 L34 404.0 M27 409.3 L34 409.3 M27 414.7 L34 414.7 M27 420.0 L34 420.0 M23 425.3 L34 425.3 M27 430.7 L34 430.7 M27 436.0 L34 436.0 M27 441.3 L34 441.3 M27 446.7 L34 446.7 M23 452.0 L34 452.0 M27 457.3 L34 457.3 M27 462.7 L34 462.7 M27 468.0 L34 468.0 M27 473.3 L34 473.3 M23 478.7 L34 478.7 M27 484.0 L34 484.0 M27 489.3 L34 489.3 M27 494.7 L34 494.7 M27 500.0 L34 500.0 M1 505.3 L34 505.3 M27 510.7 L34 510.7 M27 516.0 L34 516.0 M27 521.3 L34 521.3 M27 526.7 L34 526.7 M23 532.0 L34 532.0 M27 537.3 L34 537.3 M27 542.7 L34 542.7 M27 548.0 L34 548.0 M27 553.3 L34 553.3 M23 558.7 L34 558.7 M27 564.0 L34 564.0 M27 569.3 L34 569.3 M27 574.7 L34 574.7 M27 580.0 L34 580.0 M23 585.3 L34 585.3 M27 590.7 L34 590.7 M27 596.0 L34 596.0 M27 601.3 L34 601.3 M27 606.7 L34 606.7 M1 612.0 L34 612.0 M27 617.3 L34 617.3 M27 622.7 L34 622.7 M27 628.0 L34 628.0 M27 633.3 L34 633.3 M23 638.7 L34 638.7 M27 644.0 L34 644.0 M27 649.3 L34 649.3 M27 654.7 L34 654.7 M27 660.0 L34 660.0 M23 665.3 L34 665.3 M27 670.7 L34 670.7 M27 676.0 L34 676.0 M27 681.3 L34 681.3 M27 686.7 L34 686.7 M23 692.0 L34 692.0 M27 697.3 L34 697.3 M27 702.7 L34 702.7 M27 708.0 L34 708.0 M27 713.3 L34 713.3 M1 718.7 L34 718.7 M27 724.0 L34 724.0 M27 729.3 L34 729.3 M27 734.7 L34 734.7 M27 740.0 L34 740.0 M23 745.3 L34 745.3 M27 750.7 L34 750.7 M27 756.0 L34 756.0 M27 761.3 L34 761.3 M27 766.7 L34 766.7 M23 772.0 L34 772.0 M27 777.3 L34 777.3 M27 782.7 L34 782.7 M27 788.0 L34 788.0 M27 793.3 L34 793.3 M23 798.7 L34 798.7 M27 804.0 L34 804.0 M27 809.3 L34 809.3 M27 814.7 L34 814.7 M27 820.0 L34 820.0 M1 825.3 L34 825.3 M27 830.7 L34 830.7 M27 836.0 L34 836.0 M27 841.3 L34 841.3 M27 846.7 L34 846.7 M23 852.0 L34 852.0 M27 857.3 L34 857.3 M27 862.7 L34 862.7 M27 868.0 L34 868.0 M27 873.3 L34 873.3 M23 878.7 L34 878.7 M27 884.0 L34 884.0 M27 889.3 L34 889.3 M27 894.7 L34 894.7 M27 900.0 L34 900.0 M23 905.3 L34 905.3 M27 910.7 L34 910.7 M27 916.0 L34 916.0 M27 921.3 L34 921.3 M27 926.7 L34 926.7 M1 932.0 L34 932.0 M27 937.3 L34 937.3 M27 942.7 L34 942.7 M27 948.0 L34 948.0 M27 953.3 L34 953.3 M23 958.7 L34 958.7 M27 964.0 L34 964.0 M27 969.3 L34 969.3 M27 974.7 L34 974.7 M27 980.0 L34 980.0 M23 985.3 L34 985.3 M27 990.7 L34 990.7 M27 996.0 L34 996.0 M27 1001.3 L34 1001.3 M27 1006.7 L34 1006.7 M23 1012.0 L34 1012.0 M27 1017.3 L34 1017.3 M27 1022.7 L34 1022.7 M27 1028.0 L34 1028.0 M27 1033.3 L34 1033.3 M1 1038.7 L34 1038.7 M27 1044.0 L34 1044.0 M27 1049.3 L34 1049.3 M27 1054.7 L34 1054.7 M27 1060.0 L34 1060.0 M23 1065.3 L34 1065.3 M27 1070.7 L34 1070.7 M27 1076.0 L34 1076.0 M27 1081.3 L34 1081.3 M27 1086.7 L34 1086.7 M23 1092.0 L34 1092.0 M27 1097.3 L34 1097.3 M27 1102.7 L34 1102.7 M27 1108.0 L34 1108.0 M27 1113.3 L34 1113.3 M23 1118.7 L34 1118.7 M27 1124.0 L34 1124.0 M27 1129.3 L34 1129.3 M27 1134.7 L34 1134.7 M27 1140.0 L34 1140.0 M1 1145.3 L34 1145.3 M27 1150.7 L34 1150.7 M27 1156.0 L34 1156.0 M27 1161.3 L34 1161.3 M27 1166.7 L34 1166.7 M23 1172.0 L34 1172.0 M27 1177.3 L34 1177.3 M27 1182.7 L34 1182.7 M27 1188.0 L34 1188.0 M27 1193.3 L34 1193.3 M23 1198.7 L34 1198.7 M27 1204.0 L34 1204.0 M27 1209.3 L34 1209.3 M27 1214.7 L34 1214.7 M27 1220.0 L34 1220.0 M23 1225.3 L34 1225.3 M27 1230.7 L34 1230.7 M27 1236.0 L34 1236.0 M27 1241.3 L34 1241.3 M27 1246.7 L34 1246.7 M1 1252.0 L34 1252.0 M27 1257.3 L34 1257.3 M27 1262.7 L34 1262.7 M27 1268.0 L34 1268.0 M27 1273.3 L34 1273.3 M23 1278.7 L34 1278.7 M27 1284.0 L34 1284.0 M27 1289.3 L34 1289.3 M27 1294.7 L34 1294.7 M27 1300.0 L34 1300.0 M23 1305.3 L34 1305.3 M27 1310.7 L34 1310.7 M27 1316.0 L34 1316.0 M27 1321.3 L34 1321.3 M27 1326.7 L34 1326.7 M23 1332.0 L34 1332.0 M27 1337.3 L34 1337.3 M27 1342.7 L34 1342.7 M27 1348.0 L34 1348.0 M27 1353.3 L34 1353.3 M1 1358.7 L34 1358.7 M27 1364.0 L34 1364.0 M27 1369.3 L34 1369.3 M27 1374.7 L34 1374.7 M27 1380.0 L34 1380.0 M23 1385.3 L34 1385.3 M27 1390.7 L34 1390.7 M27 1396.0 L34 1396.0 M27 1401.3 L34 1401.3 M27 1406.7 L34 1406.7 M23 1412.0 L34 1412.0 M27 1417.3 L34 1417.3 M27 1422.7 L34 1422.7 M27 1428.0 L34 1428.0 M27 1433.3 L34 1433.3 M23 1438.7 L34 1438.7 M27 1444.0 L34 1444.0 M27 1449.3 L34 1449.3 M27 1454.7 L34 1454.7 M27 1460.0 L34 1460.0 M1 1465.3 L34 1465.3 M27 1470.7 L34 1470.7 M27 1476.0 L34 1476.0 M27 1481.3 L34 1481.3 M27 1486.7 L34 1486.7 M23 1492.0 L34 1492.0 M27 1497.3 L34 1497.3 M27 1502.7 L34 1502.7 M27 1508.0 L34 1508.0 M27 1513.3 L34 1513.3 M23 1518.7 L34 1518.7 M27 1524.0 L34 1524.0 M27 1529.3 L34 1529.3 M27 1534.7 L34 1534.7 M27 1540.0 L34 1540.0 M23 1545.3 L34 1545.3 M27 1550.7 L34 1550.7 M27 1556.0 L34 1556.0 M27 1561.3 L34 1561.3 M27 1566.7 L34 1566.7 M1 1572.0 L34 1572.0 M27 1577.3 L34 1577.3 M27 1582.7 L34 1582.7 M27 1588.0 L34 1588.0 M27 1593.3 L34 1593.3 M23 1598.7 L34 1598.7 M27 1604.0 L34 1604.0 M27 1609.3 L34 1609.3 M27 1614.7 L34 1614.7 M27 1620.0 L34 1620.0 M23 1625.3 L34 1625.3 M27 1630.7 L34 1630.7 M27 1636.0 L34 1636.0 M27 1641.3 L34 1641.3 M27 1646.7 L34 1646.7 M23 1652.0 L34 1652.0 M27 1657.3 L34 1657.3 M27 1662.7 L34 1662.7 M27 1668.0 L34 1668.0 M27 1673.3 L34 1673.3 M1 1678.7 L34 1678.7 M27 1684.0 L34 1684.0 M27 1689.3 L34 1689.3 M27 1694.7 L34 1694.7 M27 1700.0 L34 1700.0 " stroke-width="1.2" stroke-linecap="butt"/><g transform="translate(5,123.7) rotate(-90)"><path transform="translate(0.00,0.00) scale(2.3,2.2)" d="M1 1 L2 0 L2 8 M1 8 L3 8" vector-effect="non-scaling-stroke"/><path transform="translate(16.00,0.00) scale(2.3,2.2)" d="M3 0 L1 0 L0 1 L0 7 L1 8 L3 8 L4 7 L4 5 L3 4 L0 4" vector-effect="non-scaling-stroke"/><path transform="translate(32.00,0.00) scale(2.3,2.2)" d="M1 0 L3 0 L4 1 L4 7 L3 8 L1 8 L0 7 L0 1 Z" vector-effect="non-scaling-stroke"/></g><g transform="translate(5,230.3) rotate(-90)"><path transform="translate(0.00,0.00) scale(2.3,2.2)" d="M0 1 L1 0 L3 0 L4 1 L4 3 L3 4 L1 4 M3 4 L4 5 L4 7 L3 8 L1 8 L0 7" vector-effect="non-scaling-stroke"/><path transform="translate(16.00,0.00) scale(2.3,2.2)" d="M0 1 L1 0 L3 0 L4 1 L4 3 L0 7 L0 8 L4 8" vector-effect="non-scaling-stroke"/><path transform="translate(32.00,0.00) scale(2.3,2.2)" d="M1 0 L3 0 L4 1 L4 7 L3 8 L1 8 L0 7 L0 1 Z" vector-effect="non-scaling-stroke"/></g><g transform="translate(5,337.0) rotate(-90)"><path transform="translate(0.00,0.00) scale(2.3,2.2)" d="M3 8 L3 0 L0 5 L0 6 L4 6 M2 8 L4 8" vector-effect="non-scaling-stroke"/><path transform="translate(16.00,0.00) scale(2.3,2.2)" d="M1 0 L3 0 L4 1 L4 3 L3 4 L1 4 L0 3 L0 1 Z M1 4 L0 5 L0 7 L1 8 L3 8 L4 7 L4 5 L3 4" vector-effect="non-scaling-stroke"/><path transform="translate(32.00,0.00) scale(2.3,2.2)" d="M1 0 L3 0 L4 1 L4 7 L3 8 L1 8 L0 7 L0 1 Z" vector-effect="non-scaling-stroke"/></g><g transform="translate(5,443.7) rotate(-90)"><path transform="translate(0.00,0.00) scale(2.3,2.2)" d="M3 0 L1 0 L0 1 L0 7 L1 8 L3 8 L4 7 L4 5 L3 4 L0 4" vector-effect="non-scaling-stroke"/><path transform="translate(16.00,0.00) scale(2.3,2.2)" d="M3 8 L3 0 L0 5 L0 6 L4 6 M2 8 L4 8" vector-effect="non-scaling-stroke"/><path transform="translate(32.00,0.00) scale(2.3,2.2)" d="M1 0 L3 0 L4 1 L4 7 L3 8 L1 8 L0 7 L0 1 Z" vector-effect="non-scaling-stroke"/></g><g transform="translate(5,550.3) rotate(-90)"><path transform="translate(0.00,0.00) scale(2.3,2.2)" d="M1 0 L3 0 L4 1 L4 3 L3 4 L1 4 L0 3 L0 1 Z M1 4 L0 5 L0 7 L1 8 L3 8 L4 7 L4 5 L3 4" vector-effect="non-scaling-stroke"/><path transform="translate(16.00,0.00) scale(2.3,2.2)" d="M1 0 L3 0 L4 1 L4 7 L3 8 L1 8 L0 7 L0 1 Z" vector-effect="non-scaling-stroke"/><path transform="translate(32.00,0.00) scale(2.3,2.2)" d="M1 0 L3 0 L4 1 L4 7 L3 8 L1 8 L0 7 L0 1 Z" vector-effect="non-scaling-stroke"/></g><g transform="translate(5,657.0) rotate(-90)"><path transform="translate(0.00,0.00) scale(2.3,2.2)" d="M4 4 L1 4 L0 3 L0 1 L1 0 L3 0 L4 1 L4 7 L3 8 L1 8" vector-effect="non-scaling-stroke"/><path transform="translate(16.00,0.00) scale(2.3,2.2)" d="M3 0 L1 0 L0 1 L0 7 L1 8 L3 8 L4 7 L4 5 L3 4 L0 4" vector-effect="non-scaling-stroke"/><path transform="translate(32.00,0.00) scale(2.3,2.2)" d="M1 0 L3 0 L4 1 L4 7 L3 8 L1 8 L0 7 L0 1 Z" vector-effect="non-scaling-stroke"/></g><g transform="translate(5,779.7) rotate(-90)"><path transform="translate(0.00,0.00) scale(2.3,2.2)" d="M1 1 L2 0 L2 8 M1 8 L3 8" vector-effect="non-scaling-stroke"/><path transform="translate(16.00,0.00) scale(2.3,2.2)" d="M1 1 L2 0 L2 8 M1 8 L3 8" vector-effect="non-scaling-stroke"/><path transform="translate(32.00,0.00) scale(2.3,2.2)" d="M0 1 L1 0 L3 0 L4 1 L4 3 L0 7 L0 8 L4 8" vector-effect="non-scaling-stroke"/><path transform="translate(48.00,0.00) scale(2.3,2.2)" d="M1 0 L3 0 L4 1 L4 7 L3 8 L1 8 L0 7 L0 1 Z" vector-effect="non-scaling-stroke"/></g><g transform="translate(5,886.3) rotate(-90)"><path transform="translate(0.00,0.00) scale(2.3,2.2)" d="M1 1 L2 0 L2 8 M1 8 L3 8" vector-effect="non-scaling-stroke"/><path transform="translate(16.00,0.00) scale(2.3,2.2)" d="M0 1 L1 0 L3 0 L4 1 L4 3 L0 7 L0 8 L4 8" vector-effect="non-scaling-stroke"/><path transform="translate(32.00,0.00) scale(2.3,2.2)" d="M1 0 L3 0 L4 1 L4 3 L3 4 L1 4 L0 3 L0 1 Z M1 4 L0 5 L0 7 L1 8 L3 8 L4 7 L4 5 L3 4" vector-effect="non-scaling-stroke"/><path transform="translate(48.00,0.00) scale(2.3,2.2)" d="M1 0 L3 0 L4 1 L4 7 L3 8 L1 8 L0 7 L0 1 Z" vector-effect="non-scaling-stroke"/></g><g transform="translate(5,993.0) rotate(-90)"><path transform="translate(0.00,0.00) scale(2.3,2.2)" d="M1 1 L2 0 L2 8 M1 8 L3 8" vector-effect="non-scaling-stroke"/><path transform="translate(16.00,0.00) scale(2.3,2.2)" d="M3 8 L3 0 L0 5 L0 6 L4 6 M2 8 L4 8" vector-effect="non-scaling-stroke"/><path transform="translate(32.00,0.00) scale(2.3,2.2)" d="M3 8 L3 0 L0 5 L0 6 L4 6 M2 8 L4 8" vector-effect="non-scaling-stroke"/><path transform="translate(48.00,0.00) scale(2.3,2.2)" d="M1 0 L3 0 L4 1 L4 7 L3 8 L1 8 L0 7 L0 1 Z" vector-effect="non-scaling-stroke"/></g><g transform="translate(5,1099.7) rotate(-90)"><path transform="translate(0.00,0.00) scale(2.3,2.2)" d="M1 1 L2 0 L2 8 M1 8 L3 8" vector-effect="non-scaling-stroke"/><path transform="translate(16.00,0.00) scale(2.3,2.2)" d="M3 0 L1 0 L0 1 L0 7 L1 8 L3 8 L4 7 L4 5 L3 4 L0 4" vector-effect="non-scaling-stroke"/><path transform="translate(32.00,0.00) scale(2.3,2.2)" d="M1 0 L3 0 L4 1 L4 7 L3 8 L1 8 L0 7 L0 1 Z" vector-effect="non-scaling-stroke"/><path transform="translate(48.00,0.00) scale(2.3,2.2)" d="M1 0 L3 0 L4 1 L4 7 L3 8 L1 8 L0 7 L0 1 Z" vector-effect="non-scaling-stroke"/></g><g transform="translate(5,1206.3) rotate(-90)"><path transform="translate(0.00,0.00) scale(2.3,2.2)" d="M1 1 L2 0 L2 8 M1 8 L3 8" vector-effect="non-scaling-stroke"/><path transform="translate(16.00,0.00) scale(2.3,2.2)" d="M0 0 L4 0 L4 1 L2 5 L2 8" vector-effect="non-scaling-stroke"/><path transform="translate(32.00,0.00) scale(2.3,2.2)" d="M3 0 L1 0 L0 1 L0 7 L1 8 L3 8 L4 7 L4 5 L3 4 L0 4" vector-effect="non-scaling-stroke"/><path transform="translate(48.00,0.00) scale(2.3,2.2)" d="M1 0 L3 0 L4 1 L4 7 L3 8 L1 8 L0 7 L0 1 Z" vector-effect="non-scaling-stroke"/></g><g transform="translate(5,1313.0) rotate(-90)"><path transform="translate(0.00,0.00) scale(2.3,2.2)" d="M1 1 L2 0 L2 8 M1 8 L3 8" vector-effect="non-scaling-stroke"/><path transform="translate(16.00,0.00) scale(2.3,2.2)" d="M4 4 L1 4 L0 3 L0 1 L1 0 L3 0 L4 1 L4 7 L3 8 L1 8" vector-effect="non-scaling-stroke"/><path transform="translate(32.00,0.00) scale(2.3,2.2)" d="M0 1 L1 0 L3 0 L4 1 L4 3 L0 7 L0 8 L4 8" vector-effect="non-scaling-stroke"/><path transform="translate(48.00,0.00) scale(2.3,2.2)" d="M1 0 L3 0 L4 1 L4 7 L3 8 L1 8 L0 7 L0 1 Z" vector-effect="non-scaling-stroke"/></g><g transform="translate(5,1419.7) rotate(-90)"><path transform="translate(0.00,0.00) scale(2.3,2.2)" d="M0 1 L1 0 L3 0 L4 1 L4 3 L0 7 L0 8 L4 8" vector-effect="non-scaling-stroke"/><path transform="translate(16.00,0.00) scale(2.3,2.2)" d="M1 0 L3 0 L4 1 L4 7 L3 8 L1 8 L0 7 L0 1 Z" vector-effect="non-scaling-stroke"/><path transform="translate(32.00,0.00) scale(2.3,2.2)" d="M1 0 L3 0 L4 1 L4 3 L3 4 L1 4 L0 3 L0 1 Z M1 4 L0 5 L0 7 L1 8 L3 8 L4 7 L4 5 L3 4" vector-effect="non-scaling-stroke"/><path transform="translate(48.00,0.00) scale(2.3,2.2)" d="M1 0 L3 0 L4 1 L4 7 L3 8 L1 8 L0 7 L0 1 Z" vector-effect="non-scaling-stroke"/></g><g transform="translate(5,1526.3) rotate(-90)"><path transform="translate(0.00,0.00) scale(2.3,2.2)" d="M0 1 L1 0 L3 0 L4 1 L4 3 L0 7 L0 8 L4 8" vector-effect="non-scaling-stroke"/><path transform="translate(16.00,0.00) scale(2.3,2.2)" d="M0 1 L1 0 L3 0 L4 1 L4 3 L0 7 L0 8 L4 8" vector-effect="non-scaling-stroke"/><path transform="translate(32.00,0.00) scale(2.3,2.2)" d="M3 8 L3 0 L0 5 L0 6 L4 6 M2 8 L4 8" vector-effect="non-scaling-stroke"/><path transform="translate(48.00,0.00) scale(2.3,2.2)" d="M1 0 L3 0 L4 1 L4 7 L3 8 L1 8 L0 7 L0 1 Z" vector-effect="non-scaling-stroke"/></g><g transform="translate(5,1633.0) rotate(-90)"><path transform="translate(0.00,0.00) scale(2.3,2.2)" d="M0 1 L1 0 L3 0 L4 1 L4 3 L0 7 L0 8 L4 8" vector-effect="non-scaling-stroke"/><path transform="translate(16.00,0.00) scale(2.3,2.2)" d="M3 8 L3 0 L0 5 L0 6 L4 6 M2 8 L4 8" vector-effect="non-scaling-stroke"/><path transform="translate(32.00,0.00) scale(2.3,2.2)" d="M1 0 L3 0 L4 1 L4 7 L3 8 L1 8 L0 7 L0 1 Z" vector-effect="non-scaling-stroke"/><path transform="translate(48.00,0.00) scale(2.3,2.2)" d="M1 0 L3 0 L4 1 L4 7 L3 8 L1 8 L0 7 L0 1 Z" vector-effect="non-scaling-stroke"/></g><g transform="translate(5,1739.7) rotate(-90)"><path transform="translate(0.00,0.00) scale(2.3,2.2)" d="M0 1 L1 0 L3 0 L4 1 L4 3 L0 7 L0 8 L4 8" vector-effect="non-scaling-stroke"/><path transform="translate(16.00,0.00) scale(2.3,2.2)" d="M4 0 L0 0 L0 4 L3 4 L4 5 L4 7 L3 8 L1 8 L0 7" vector-effect="non-scaling-stroke"/><path transform="translate(32.00,0.00) scale(2.3,2.2)" d="M3 0 L1 0 L0 1 L0 7 L1 8 L3 8 L4 7 L4 5 L3 4 L0 4" vector-effect="non-scaling-stroke"/><path transform="translate(48.00,0.00) scale(2.3,2.2)" d="M1 0 L3 0 L4 1 L4 7 L3 8 L1 8 L0 7 L0 1 Z" vector-effect="non-scaling-stroke"/></g></g></svg>
<div style="left:639px;top:266px;width:34px;height:1.5px;background:#cfcfcf;"></div>
<div style="left:672px;top:232px;width:1.5px;height:35px;background:#cfcfcf;"></div>
<svg style="left:673px;top:267px" width="2321" height="1411"><defs><filter id="nz" x="0" y="0" width="100%" height="100%" filterUnits="userSpaceOnUse"><feTurbulence type="fractalNoise" baseFrequency="0.27" numOctaves="3" seed="7" result="t"/><feColorMatrix in="t" type="matrix" values="0 0 0 0 0.47  0 0 0 0 0.45  0 0 0 0 0.49  5 0 0 0 -2.5"/><feGaussianBlur stdDeviation="0.45"/></filter></defs><rect width="2321" height="1411" fill="#fbf7fb"/><rect width="2321" height="1411" filter="url(#nz)"/></svg>
<div style="left:673px;top:1678px;width:2321px;height:291px;background:#2c2c2c;"></div>
<div style="left:2994px;top:232px;width:30px;height:1737px;background:#3a3a3a;"></div>
<div style="left:2994px;top:232px;width:1px;height:1737px;background:#2e2e2e;"></div>
<div style="left:2994px;top:233px;width:30px;height:29px;background:#4a4a4a;"></div>
<svg style="left:2999px;top:238px;" width="20" height="20" viewBox="0 0 20 20"><path d="M4 13 L10 7 L16 13" fill="none" stroke="#b0b0b0" stroke-width="2"/></svg>
<div style="left:2997px;top:813px;width:25px;height:708px;background:#555555;border-radius:12px"></div>
<div style="left:2994px;top:1940px;width:30px;height:29px;background:#4a4a4a;"></div>
<svg style="left:2999px;top:1945px;" width="20" height="20" viewBox="0 0 20 20"><path d="M4 7 L10 13 L16 7" fill="none" stroke="#b0b0b0" stroke-width="2"/></svg>
<div style="left:639px;top:1969px;width:2385px;height:31px;background:#4a4a4a;"></div>
<div style="left:639px;top:1969px;width:129px;height:31px;background:#3c3c3c;box-sizing:border-box;border:1px solid #8a8a8a"></div>
<svg style="left:639px;top:1969px;" width="129" height="31" viewBox="0 0 129 31"><path d="M1 30 L128 14 L128 30 Z" fill="#555"/></svg>
<span id="t51" style="left:642.5px;top:1968.7px;font-size:33.33px;font-family:'Liberation Sans';color:#dedede;transform:scaleX(0.8940);transform-origin:left 0;">66.7</span>
<div style="left:768px;top:1969px;width:9px;height:31px;background:#5a5a5a;"></div>
<div style="left:777px;top:1969px;width:110px;height:31px;background:#3c3c3c;box-sizing:border-box;border:1px solid #8a8a8a"></div>
<svg style="left:777px;top:1969px;" width="110" height="31" viewBox="0 0 110 31"><path d="M1 15 L109 1 L1 1 Z" fill="#555"/></svg>
<svg style="left:899px;top:1972px;" width="30" height="26" viewBox="0 0 30 26"><path d="M5 13 L25 13" stroke="#a8a8a8" stroke-width="2.2"/></svg>
<svg style="left:949px;top:1972px;" width="30" height="26" viewBox="0 0 30 26"><path d="M5 13 L25 13 M15 3 L15 23" stroke="#a8a8a8" stroke-width="2.2"/></svg>
<div style="left:1006px;top:1976px;width:15px;height:15px;background:#b0b0b0;"></div>
<div style="left:1040px;top:1969px;width:119px;height:31px;background:#3c3c3c;box-sizing:border-box;border:1px solid #8a8a8a"></div>
<svg style="left:1040px;top:1969px;" width="119" height="31" viewBox="0 0 119 31"><path d="M88 30 Q110 26 118 14 L118 30 Z" fill="#555"/></svg>
<span id="t52" style="left:1050.5px;top:1968.7px;font-size:33.33px;font-family:'Liberation Sans';color:#dedede;transform:scaleX(0.8739);transform-origin:left 0;">0.0</span>
<div style="left:1159px;top:1969px;width:9px;height:31px;background:#5a5a5a;"></div>
<div style="left:1168px;top:1969px;width:120px;height:31px;background:#3c3c3c;box-sizing:border-box;border:1px solid #8a8a8a"></div>
<svg style="left:1168px;top:1969px;" width="120" height="31" viewBox="0 0 120 31"><path d="M1 1 L1 8 Q40 -8 119 30 L119 1 Z" fill="#555"/></svg>
<svg style="left:1298px;top:1970px;" width="32" height="30" viewBox="0 0 32 30"><path d="M8 22 Q6 8 16 8 Q26 8 26 18" fill="none" stroke="#b0b0b0" stroke-width="2.6"/><path d="M2 14 L8 24 L14 14 Z" fill="#b0b0b0"/></svg>
<svg style="left:1347px;top:1970px;" width="32" height="30" viewBox="0 0 32 30"><path d="M24 22 Q26 8 16 8 Q6 8 6 18" fill="none" stroke="#b0b0b0" stroke-width="2.6"/><path d="M18 14 L24 24 L30 14 Z" fill="#b0b0b0"/></svg>
<svg style="left:1398px;top:1970px;" width="32" height="30" viewBox="0 0 32 30"><circle cx="16" cy="15" r="11" fill="none" stroke="#b0b0b0" stroke-width="2.4" stroke-dasharray="50 6"/><circle cx="16" cy="14" r="3.5" fill="#b0b0b0"/><path d="M16 14 L16 4" stroke="#b0b0b0" stroke-width="2"/></svg>
<div style="left:1439px;top:1969px;width:30px;height:31px;background:#555555;"></div>
<svg style="left:1444px;top:1975px;" width="20" height="20" viewBox="0 0 20 20"><path d="M13 4 L7 10 L13 16" fill="none" stroke="#b0b0b0" stroke-width="2"/></svg>
<div style="left:1946px;top:1973px;width:569px;height:24px;background:#5b5b5b;border-radius:12px"></div>
<div style="left:2964px;top:1969px;width:30px;height:31px;background:#555555;"></div>
<svg style="left:2969px;top:1975px;" width="20" height="20" viewBox="0 0 20 20"><path d="M7 4 L13 10 L7 16" fill="none" stroke="#b0b0b0" stroke-width="2"/></svg>
<div style="left:639px;top:2000px;width:2385px;height:38px;background:#3a3a3a;"></div>
<svg style="left:649px;top:2004px;" width="28" height="30" viewBox="0 0 28 30"><path d="M3 14 L14 4 L25 14 M3 26 L14 16 L25 26" fill="none" stroke="#888" stroke-width="2"/></svg>
<svg style="left:673px;top:267px" width="2321" height="1411"><g fill="none" stroke="#0a0a0a" stroke-width="3.4" stroke-linecap="round" stroke-linejoin="round"><g transform="translate(547,343) scale(0.36390)"><path d="M555 530 C500 420 490 320 520 280 C540 240 540 140 600 105 C650 90 700 130 740 210 C780 290 810 340 830 370 M790 150 C800 140 840 160 870 150 C900 120 930 110 975 150 M790 150 C790 230 820 300 855 350 M930 380 C920 300 940 220 975 195 C1000 180 1020 195 1030 210 M1035 480 C1010 380 1010 250 1050 200 C1080 180 1110 200 1140 230 M1270 300 C1240 200 1240 80 1280 55 C1320 40 1380 130 1440 280 M1320 480 C1310 380 1310 300 1330 285 C1400 300 1500 350 1540 430 C1570 490 1580 540 1570 580 M1480 330 C1510 310 1530 270 1560 260 C1600 250 1640 270 1649 280 M1170 230 C1190 220 1210 250 1230 290 C1270 380 1310 500 1340 560 M800 470 C780 440 800 420 830 410 C850 390 860 375 900 365 C940 420 980 560 1020 640 M910 365 C860 400 850 600 920 780 C960 880 990 920 1010 940 M660 600 C650 520 670 460 700 450 C720 455 730 470 745 470 C750 440 760 440 770 460 C790 520 800 600 810 640 M710 450 C690 540 690 680 700 760 M440 560 C420 600 410 700 440 800 M410 540 C440 520 460 500 475 480 C520 500 580 600 640 710 M160 980 C110 900 80 780 110 690 C130 640 150 630 175 640 C220 680 260 740 290 790 M230 1110 C190 1020 180 900 200 850 C220 820 250 790 270 800 C290 810 310 840 330 860 M345 990 C330 920 330 860 350 820 C370 800 380 790 400 790 M410 780 C420 860 460 940 520 1010 C580 1080 640 1120 760 1180 M580 740 C560 760 550 800 555 860 C560 900 600 980 650 1020 M615 760 C610 820 620 900 660 1000 M830 710 C780 720 740 820 760 940 C780 1040 860 1120 900 1150 M840 700 C800 780 800 900 830 1000 C860 1080 880 1100 900 1110 M460 925 C420 960 410 1040 430 1100 C460 1180 560 1260 700 1300 C800 1320 880 1310 950 1300 M460 925 C520 1000 600 1060 700 1100 C780 1140 840 1170 900 1180 M380 1030 C340 1060 330 1120 350 1180 C390 1260 470 1320 560 1350 C650 1380 760 1380 860 1370 M130 1080 C90 1110 80 1150 110 1200 C160 1260 240 1300 330 1330 M130 1080 C180 1130 250 1190 330 1230 M40 1220 C60 1280 120 1350 200 1390 C280 1430 380 1460 480 1470 M40 1220 C110 1270 200 1320 320 1350 C400 1370 440 1380 500 1380 M380 1370 C370 1400 370 1450 380 1512 M690 1380 C720 1400 760 1450 800 1512 M810 1220 C850 1280 900 1330 960 1360 C1050 1400 1130 1420 1200 1430 M950 1300 C1000 1310 1080 1340 1150 1380 C1180 1400 1200 1430 1210 1450 M920 1410 C980 1420 1050 1450 1100 1512" vector-effect="non-scaling-stroke"/></g><g transform="translate(1107,343) scale(0.36390)"><path d="M0 265 C40 250 100 270 150 330 M175 330 C190 250 200 180 215 178 C260 200 330 270 370 310 C380 340 380 380 380 400 M240 440 C250 500 240 560 180 640 M0 440 C20 480 30 540 30 580 M400 380 C410 300 410 250 420 240 C450 250 500 320 510 400 C520 480 500 560 460 610 M590 440 C580 360 580 300 600 280 C650 290 720 360 740 430 C760 520 740 640 700 720 C660 800 580 880 500 930 M300 470 C290 550 280 650 260 730 M300 470 C350 510 400 560 420 600 C430 640 440 670 440 690 M430 740 C500 640 580 520 650 430 C670 440 680 500 660 620 C640 720 590 800 520 880 M750 510 C800 470 850 460 880 470 C910 520 940 580 960 600 C1000 560 1040 560 1060 600 C1080 680 1090 750 1080 800 M560 1000 C640 880 740 740 830 580 C850 560 880 560 910 580 C940 640 950 700 940 830 M940 830 C960 790 980 750 990 745 C1010 760 1030 830 1030 880 M1040 830 C1060 825 1090 820 1120 830 C1150 870 1160 920 1150 990 M560 1100 C650 1060 780 960 870 850 C900 830 920 850 920 880 M880 1120 C940 1060 980 980 970 900 C960 880 980 880 1000 900 C1010 960 990 1040 960 1090 M840 1180 C950 1120 1060 1030 1110 880 C1120 870 1140 880 1140 920 M700 1240 C800 1200 1000 1110 1300 1000 C1320 1040 1310 1090 1310 1130 M1320 1020 C1370 1030 1400 1080 1390 1130 C1370 1200 1280 1260 1180 1330 M970 1390 C1070 1370 1180 1360 1350 1350 C1380 1370 1400 1400 1420 1440 M1130 1440 C1250 1440 1350 1460 1420 1510 M570 1300 C620 1260 660 1220 690 1215 C690 1280 660 1360 620 1430 M620 1420 C700 1400 800 1400 900 1400 C1000 1400 1100 1390 1180 1340 M660 1512 C700 1480 780 1450 840 1450 C870 1420 880 1415 890 1430 M360 1340 C300 1390 220 1460 150 1512 M260 1290 C200 1350 120 1420 60 1460 M90 1460 C200 1400 300 1350 360 1350 C370 1400 360 1460 340 1512 M480 1512 C520 1470 560 1440 600 1420" vector-effect="non-scaling-stroke"/></g><g transform="translate(547,863) scale(0.36390)"><path d="M170 0 C230 40 300 60 370 75 M370 0 C380 80 440 140 560 170 C700 200 900 170 1000 140 M700 0 C740 40 820 80 940 100 M920 0 C930 60 980 100 1080 110 M980 20 C1000 60 1060 90 1200 20 M280 120 C200 140 100 200 60 250 C40 280 40 300 50 300 M290 75 C300 130 330 190 380 220 C440 240 520 250 600 240 C700 240 800 240 900 250 M450 140 C500 180 540 220 580 230 M130 280 C150 250 230 220 340 215 C380 220 420 230 450 240 M80 295 C120 290 200 290 330 300 C450 310 500 280 560 250 M70 300 C60 350 100 420 180 450 C260 470 360 460 450 440 M80 300 C90 330 110 330 140 310 M330 290 C400 290 500 280 600 270 C700 255 780 250 870 250 M330 300 C380 340 430 400 480 430 C560 440 700 410 820 380 M110 600 C200 530 300 470 440 440 M110 600 C130 610 140 610 160 600 C300 570 450 530 620 450 M530 620 C600 560 700 480 800 380 C850 320 900 300 970 290 M530 620 C650 610 800 560 1000 480 M600 540 C640 490 680 450 700 420 M940 230 C960 280 1000 320 1060 330 C1120 340 1200 300 1260 260 M1020 230 C1010 280 1020 320 1050 320 M930 440 C1000 450 1100 450 1200 430 C1300 400 1380 330 1420 180 M880 680 C980 620 1100 540 1250 420 C1330 350 1390 280 1440 180 M880 680 C920 720 1000 730 1100 720 C1200 700 1260 600 1300 500 M540 950 C560 1000 580 1040 620 1050 C750 1040 900 930 1030 750 M540 950 C700 940 880 850 990 740 M530 630 C520 700 530 740 570 790 C560 830 540 870 580 880 C640 860 690 800 760 620 M580 960 C650 850 720 730 790 620 M1150 710 C1100 780 1070 900 1090 1050 C1100 1080 1120 1090 1160 1080 C1240 1040 1300 900 1330 700 M1400 340 C1390 600 1300 900 1150 1070 M1450 170 C1420 300 1390 420 1385 500 M1430 590 C1480 800 1500 1100 1440 1512 M1580 850 C1560 1100 1530 1300 1480 1512 M1380 500 C1420 560 1460 560 1480 560 C1540 530 1600 480 1649 470 M1430 570 C1500 610 1560 620 1600 610 C1630 580 1649 540 1649 520 M1540 620 C1550 700 1570 770 1580 800 C1600 760 1630 720 1649 700 M1580 850 C1600 850 1620 870 1620 900 M1180 70 C1220 40 1260 20 1300 30 C1340 40 1370 60 1370 80 C1370 120 1350 140 1300 150 C1250 150 1200 120 1180 70 Z M1420 60 C1460 40 1500 30 1540 40 C1580 50 1620 40 1630 30 C1630 100 1600 170 1540 200 C1480 200 1430 160 1420 110 M1130 160 C1180 220 1240 260 1300 260 C1360 260 1400 200 1420 150 M1470 210 C1520 280 1580 330 1649 340" vector-effect="non-scaling-stroke"/></g><g transform="translate(1107,863) scale(0.36390)"><path d="M0 35 C40 30 80 25 90 40 C90 100 70 160 30 190 C20 195 10 195 0 190 M100 50 C150 30 250 0 350 0 M310 85 C400 100 500 110 600 100 C640 90 660 80 670 80 C670 140 620 190 540 210 C440 230 320 220 210 170 M440 0 C600 30 750 20 880 0 M530 230 C650 200 800 130 880 0 M860 120 C1000 60 1100 10 1200 0 M1140 10 C1250 30 1380 80 1480 160 M1050 90 C1200 110 1350 170 1450 260 C1520 330 1540 360 1540 360 C1500 360 1450 340 1400 310 M160 150 C250 200 350 250 470 260 C560 260 620 200 700 230 M0 240 C80 250 160 250 200 240 M0 320 C40 340 100 350 150 340 C200 320 240 290 260 200 M200 330 C260 370 340 380 400 360 C440 350 460 340 470 320 C440 280 380 240 320 220 M490 240 C560 270 620 290 700 310 M720 240 C840 280 960 280 1040 260 C1100 230 1160 190 1170 170 C1170 220 1140 260 1080 280 C1000 330 920 360 880 370 M1180 260 C1260 280 1340 320 1400 400 M700 330 C800 370 900 400 1000 400 C1100 390 1140 360 1150 370 C1180 400 1200 410 1250 380 C1270 420 1260 460 1240 480 M140 380 C200 450 300 510 400 530 C500 530 600 500 660 470 C700 400 690 320 670 280 C640 260 600 290 560 320 C480 370 400 390 300 380 M600 510 C700 510 800 510 840 510 C850 560 800 610 700 630 C650 640 620 630 600 620 M830 580 C1000 590 1200 560 1300 520 C1400 500 1410 510 1410 510 C1410 570 1380 610 1300 630 C1200 640 1100 630 1000 620 M0 480 C60 460 130 470 140 490 C130 560 80 610 0 620 M90 610 C120 680 160 720 200 720 C260 700 300 680 350 700 C390 720 410 710 420 680 C430 640 420 600 400 570 C350 540 300 530 250 540 M0 620 C10 700 20 760 30 790 C60 760 80 730 90 690 M150 400 C180 500 210 580 240 620 M390 560 C470 600 540 620 580 620 C600 640 600 690 580 720 C520 760 450 780 380 780 M50 800 C150 770 260 780 350 800 C420 830 480 880 550 980 C600 1040 680 1070 760 1080 C840 1100 880 1130 960 1280 M150 820 C140 860 160 900 210 910 C260 910 330 890 370 850 C380 820 390 800 390 780 M370 850 C380 900 400 950 420 980 M40 850 C60 850 80 880 80 900 M30 850 C20 1000 10 1200 0 1350 M90 910 C120 930 150 960 140 1000 M200 1060 C220 1060 230 1080 240 1110 C250 1120 260 1110 260 1070 C260 1030 280 1020 300 1030 C330 1050 350 1100 350 1150 C350 1170 310 1190 290 1230 C270 1270 270 1330 290 1350 C320 1350 340 1330 360 1330 C380 1380 400 1420 430 1420 C460 1400 480 1400 500 1440 C520 1470 560 1490 580 1512 M560 1000 C510 1030 500 1100 520 1200 C540 1280 570 1340 580 1400 M760 1060 C820 1030 920 1030 1040 1100 M880 1130 C900 1180 940 1230 980 1280 M700 1250 C730 1300 760 1380 810 1430 C850 1450 900 1460 960 1480 M670 1300 C660 1400 670 1460 680 1512 M740 770 C760 740 800 730 840 740 C880 730 910 700 930 670 C950 660 970 660 980 660 C960 640 930 630 930 620 C1000 610 1060 640 1090 680 C1130 740 1170 790 1210 800 C1220 770 1200 730 1170 700 C1160 680 1160 660 1160 640 M750 780 C790 770 820 780 840 800 C870 790 900 790 930 800 C950 760 970 750 980 750 C970 800 950 850 910 880 C960 910 1040 940 1080 980 C1090 950 1110 940 1120 980 C1120 1030 1110 1040 1100 1050 C1120 1070 1150 1090 1200 1110 C1170 1110 1150 1120 1160 1130 C1200 1180 1230 1230 1220 1260 C1160 1260 1100 1250 1100 1280 C1120 1340 1140 1380 1140 1400 C1120 1420 1110 1420 1100 1420 C1110 1450 1120 1480 1130 1512" vector-effect="non-scaling-stroke"/></g><g transform="translate(557,683) scale(0.20400)"><path d="M160 0 C180 100 250 250 400 400 M290 0 C300 150 400 350 570 560 M560 0 C570 40 590 80 610 120 M180 260 C300 320 420 420 560 560 M100 340 C100 420 170 520 240 610 M180 260 C170 330 200 420 280 500 C350 570 420 640 460 680 M20 510 C130 580 300 650 500 710 C600 740 680 750 720 750 M20 520 C30 600 80 680 170 750 C250 820 300 880 330 920 C420 960 520 1000 600 1020 M30 560 C100 660 250 780 400 840 C450 860 500 880 510 900 M650 160 C580 230 530 330 540 400 C560 500 650 620 800 750 C900 840 1000 890 1150 920 M620 200 C600 260 580 350 600 420 C650 560 800 700 900 790 M720 0 C690 80 700 200 760 320 C840 460 1000 600 1200 680 C1300 720 1400 740 1550 790 M700 200 C720 300 800 420 900 520 C1000 600 1150 680 1350 720 C1400 730 1450 730 1480 720 M780 0 C820 60 900 140 1000 200 C1100 260 1250 320 1350 380 M900 0 C950 60 1100 160 1200 220 C1300 280 1400 340 1500 420 M1080 0 C1100 60 1120 110 1140 160 M1280 0 C1300 120 1380 260 1490 360 M1360 0 C1380 100 1440 240 1530 330 M1430 0 C1470 80 1510 160 1530 230 M620 780 C600 900 640 1050 760 1110 C900 1170 1100 1200 1300 1190 C1500 1180 1600 1150 1720 1130 M620 780 C700 830 850 880 1000 910 C1100 930 1200 940 1240 940 M1170 780 C1200 790 1240 790 1260 800 C1300 830 1400 870 1560 880 M1170 790 C1190 870 1250 950 1350 1020 C1450 1070 1550 1070 1610 1065 M1270 800 C1290 880 1340 950 1400 1000 M1390 510 C1420 500 1440 520 1450 540 C1480 600 1560 700 1700 800 C1800 860 1950 890 2100 900 M1390 510 C1400 600 1500 720 1650 800 M1490 350 C1510 380 1530 420 1560 500 C1600 580 1650 640 1700 700 M1640 650 C1700 660 1800 690 1900 720 C2000 760 2060 790 2070 810 M1640 650 C1680 750 1760 830 1900 880 C2000 910 2080 910 2120 900 M1580 850 C1580 950 1650 1050 1800 1100 C1900 1120 2000 1100 2080 1080 M1690 880 C1700 950 1760 1030 1870 1070 M1630 1290 C1650 1350 1700 1420 1800 1450 M1770 1270 C1760 1340 1780 1400 1820 1450 M470 1010 C480 1100 520 1200 600 1280 C700 1300 760 1300 760 1300 M30 1400 C40 1280 120 1180 250 1130 C320 1100 400 1090 460 1090 M170 1380 C220 1320 320 1280 450 1270 C550 1270 650 1290 750 1310 M540 1400 C650 1350 800 1310 1000 1300 C1200 1300 1400 1300 1550 1300 M540 1400 C700 1420 900 1410 1100 1390 C1300 1370 1500 1330 1750 1210 M760 1140 C820 1200 900 1260 980 1300" vector-effect="non-scaling-stroke"/></g><g transform="translate(1157,683) scale(0.20400)"><path d="M80 120 C100 200 120 350 110 500 C100 580 90 640 80 660 M160 70 C200 100 240 170 260 300 C270 450 220 560 110 670 M380 120 C420 130 460 180 470 280 C480 420 430 560 250 730 M380 120 C380 160 340 200 330 230 C300 350 250 500 120 640 M550 260 C560 220 600 210 640 210 C680 220 700 280 690 340 C670 500 600 640 440 760 M550 260 C560 350 520 450 420 560 C350 620 280 680 220 740 M0 1080 C100 1060 250 1010 350 920 C400 840 410 780 400 740 C380 730 350 730 330 720 C250 760 100 850 0 950 M0 780 C60 700 150 640 210 620 C240 640 240 700 200 770 M410 850 C600 800 800 650 980 500 C990 600 960 750 880 840 C800 920 600 1000 360 1000 M760 290 C900 200 1050 100 1150 0 M700 500 C900 450 1150 300 1380 0 M1000 540 C1200 420 1400 300 1520 0 M1200 450 C1500 300 1800 200 2090 120 C2100 160 2090 220 2090 300 C2080 450 1900 600 1500 800 M1320 380 C1500 300 1650 150 1700 0 M1720 240 C1780 150 1810 80 1810 0 M900 880 C1100 840 1300 820 1500 850 C1650 870 1800 820 1860 720 C1800 850 1600 1000 1290 1110 M1770 900 C1950 890 2200 950 2420 1170 M1620 1030 C1900 1050 2150 1150 2451 1400 M1960 860 C2050 830 2150 770 2200 750 C2220 790 2240 830 2290 840 C2290 880 2280 920 2250 960 M300 1040 C500 1080 700 1090 870 1070 C920 1040 950 1030 960 1030 C960 1100 900 1200 800 1250 C650 1300 400 1290 130 1190 M970 1040 C1050 1000 1150 920 1180 920 C1200 930 1220 930 1250 920 C1280 880 1300 860 1330 860 C1350 900 1340 1000 1290 1080 C1200 1200 1000 1290 700 1300 M1180 1190 C1400 1150 1600 1160 1720 1180 M1040 1310 C1200 1350 1400 1370 1600 1340 C1700 1300 1800 1200 1840 1190 C1860 1280 1800 1380 1550 1471 M1900 1250 C2100 1300 2300 1380 2451 1471 M330 1280 C400 1340 480 1400 560 1471 M30 1140 C100 1180 180 1220 210 1290 C220 1400 150 1460 100 1471 M760 1471 C800 1420 850 1380 900 1370 C940 1380 970 1420 980 1471" vector-effect="non-scaling-stroke"/></g><g transform="translate(887,553) scale(0.23810)"><path d="M520 430 C540 390 600 370 640 380 C660 420 620 470 600 500 C570 470 540 450 520 430 M650 430 C660 390 700 370 730 390 C750 430 720 470 700 490 M750 390 C770 350 810 340 830 370 C830 410 810 450 780 490 C750 470 745 430 750 390 M845 370 C870 345 910 345 935 375 C925 410 890 440 860 455 M880 420 C920 380 980 370 1010 390 C990 420 940 440 895 445 M470 490 C500 455 540 450 570 465 M700 420 C690 450 700 480 720 500" vector-effect="non-scaling-stroke"/></g><g transform="translate(-673,-267)"><path d="M1587.4 952.9 C1587.6 910.6 1593.6 881.2 1601.7 868.8 C1608.6 881.8 1612.2 911.6 1608.8 953.8 M1619.7 932.7 C1624.2 897.3 1632.6 873.5 1641.0 864.0 C1645.7 875.7 1645.8 901.0 1638.4 935.9 M1650.5 926.8 C1650.2 889.3 1655.4 863.2 1662.4 852.1 C1668.7 863.6 1672.1 890.0 1669.5 927.4 M1686.2 914.3 C1688.4 878.4 1695.2 853.9 1702.9 843.8 C1708.4 855.2 1710.2 880.6 1705.2 916.2 M1718.3 920.0 C1717.1 895.0 1720.8 877.5 1726.7 870.0 C1732.5 877.5 1736.2 895.0 1735.0 920.0 M1760.0 904.3 C1755.1 867.5 1756.8 841.2 1762.4 829.5 C1770.1 840.0 1776.9 865.4 1779.0 902.4 M1788.6 920.4 C1786.0 888.3 1789.4 865.6 1795.7 855.7 C1802.7 865.1 1807.8 887.5 1807.6 919.6 M1836.3 940.4 C1829.7 897.7 1831.7 867.1 1838.6 853.3 C1848.3 865.3 1856.9 894.7 1859.9 937.7 M1564.1 1007.2 C1575.7 966.2 1589.4 939.4 1600.5 929.5 C1603.7 944.0 1599.1 973.8 1584.5 1013.8 M1594.7 1008.5 C1601.5 964.1 1612.0 934.2 1621.9 922.4 C1626.8 937.0 1625.7 968.7 1615.8 1012.5 M1619.6 985.4 C1622.9 948.4 1630.5 923.1 1638.6 912.9 C1643.8 924.8 1644.7 951.2 1638.5 987.9 M1639.9 973.4 C1643.4 943.5 1650.4 923.2 1657.6 915.2 C1662.0 925.1 1662.3 946.5 1656.3 976.1 M1811.8 990.2 C1798.4 956.2 1794.6 930.4 1798.1 917.6 C1808.8 925.5 1821.6 948.1 1832.0 983.2 M1840.3 985.2 C1825.7 945.2 1821.1 915.4 1824.3 901.0 C1835.4 910.8 1849.1 937.6 1860.7 978.6 M1864.0 975.3 C1850.5 934.1 1846.8 903.6 1850.5 889.0 C1861.3 899.5 1874.2 927.3 1884.6 969.4 M1660.1 1092.6 C1664.2 1031.8 1673.7 989.8 1683.8 972.4 C1690.3 991.4 1691.5 1034.4 1683.8 1095.0 M1695.7 1093.4 C1696.3 1030.2 1703.3 986.2 1712.4 967.6 C1720.0 986.9 1723.7 1031.2 1719.5 1094.3 M1724.3 1105.7 C1722.5 1035.5 1727.9 986.3 1736.2 965.2 C1744.5 986.3 1749.9 1035.5 1748.1 1105.7 M1752.9 1101.4 C1748.7 1037.2 1752.4 992.0 1760.0 972.4 C1769.0 991.4 1776.1 1036.2 1776.7 1100.5 M1783.8 1094.6 C1778.5 1039.9 1781.3 1001.3 1788.6 984.3 C1798.0 1000.2 1805.8 1038.2 1807.6 1093.0 M1810.1 1083.0 C1803.5 1032.0 1805.5 995.7 1812.4 979.5 C1822.1 994.1 1830.8 1029.4 1833.8 1080.8 M1843.4 1078.2 C1836.8 1027.2 1838.8 990.9 1845.7 974.8 C1855.4 989.3 1864.1 1024.7 1867.1 1076.0 M1864.9 1059.6 C1857.1 1013.4 1858.3 980.2 1864.8 965.2 C1874.8 978.1 1884.3 1009.9 1888.5 1056.6 M1627.9 1057.5 C1628.6 1014.6 1635.1 984.8 1643.3 972.4 C1650.1 985.7 1653.3 1015.9 1649.3 1058.7 M1594.5 1093.5 C1594.1 1055.3 1599.8 1028.8 1607.6 1017.6 C1614.8 1029.3 1618.7 1056.1 1615.9 1094.1 M1556.7 1055.9 C1562.2 1022.2 1572.0 999.9 1581.4 991.4 C1586.6 1003.0 1586.3 1027.3 1577.6 1060.3 M1651.7 1130.7 C1646.2 1091.6 1649.6 1063.6 1657.6 1051.0 C1667.8 1061.9 1676.2 1088.9 1677.8 1128.3 M1687.4 1137.0 C1684.2 1093.0 1689.3 1062.0 1698.1 1048.6 C1707.6 1061.5 1714.3 1092.2 1713.6 1136.3 M1719.6 1138.1 C1713.1 1097.8 1715.1 1068.8 1721.9 1055.7 C1731.6 1066.9 1740.3 1094.6 1743.3 1135.3 M1782.6 1129.5 C1780.7 1093.8 1786.5 1068.8 1795.7 1058.1 C1804.9 1068.8 1810.8 1093.8 1808.8 1129.5 M1835.1 1116.2 C1837.1 1089.8 1844.4 1072.1 1852.9 1065.2 C1859.2 1074.1 1861.5 1093.1 1856.3 1119.1 " stroke-width="3"/></g></g></svg>
<div style="left:3024px;top:171px;width:224px;height:1867px;background:#3a3a3a;"></div>
<div style="left:3025px;top:226px;width:192px;height:1812px;background:#262626;"></div>
<div style="left:3026px;top:174px;width:42px;height:39px;background:#363636;"></div>
<svg style="left:3035px;top:184px;" width="28" height="26" viewBox="0 0 28 26"><path d="M4 6 L24 6 M4 14 L24 14 M4 22 L24 22" stroke="#8c8c8c" stroke-width="3"/></svg>
<div style="left:3068px;top:174px;width:179px;height:39px;background:#4d4d4d;"></div>
<svg style="left:3080px;top:177px;" width="46" height="40" viewBox="0 0 46 40"><path d="M2 34 L6 24 L26 4 Q30 1 33 4 Q36 8 32 11 L12 30 Z" fill="#b4b4b4"/><circle cx="34" cy="28" r="10" fill="#4d4d4d" stroke="#b4b4b4" stroke-width="2.5"/><circle cx="34" cy="28" r="5" fill="none" stroke="#b4b4b4" stroke-width="2.5"/></svg>
<span id="t53" style="left:3140px;top:187.9px;font-size:25.36px;font-family:'Liberation Sans';color:#dcdcdc;transform:scaleX(0.8953);transform-origin:left 0;">Brush size</span>
<div style="left:3220px;top:174px;width:27px;height:39px;background:linear-gradient(90deg,rgba(77,77,77,0),#4d4d4d 60%);"></div>
<div style="left:3026px;top:213px;width:222px;height:13px;background:#4a4a4a;"></div>
<div style="left:3026px;top:226px;width:95px;height:99px;background:#3d3d3d;"></div>
<div style="left:3072.9px;top:263.4px;width:1.2px;height:1.2px;background:#ffffff;border-radius:50%"></div>
<div style="left:3034px;top:285px;width:79px;height:40px;background:rgba(62,62,62,0.5);"></div>
<div class="tx" style="left:2573.5px;width:1000px;text-align:center;top:290.6px;font-size:29.86px;font-family:'Liberation Sans';color:#e2e2e2;"><span id="t54">0.7</span></div>
<div style="left:3122px;top:226px;width:95px;height:99px;background:#3d3d3d;"></div>
<div style="left:3168.9px;top:263.4px;width:1.2px;height:1.2px;background:#ffffff;border-radius:50%"></div>
<div style="left:3130px;top:285px;width:79px;height:40px;background:rgba(62,62,62,0.5);"></div>
<div class="tx" style="left:2669.5px;width:1000px;text-align:center;top:290.6px;font-size:29.86px;font-family:'Liberation Sans';color:#e2e2e2;"><span id="t55">1</span></div>
<div style="left:3026px;top:326px;width:95px;height:99px;background:#3d3d3d;"></div>
<div style="left:3072.78px;top:363.28px;width:1.44px;height:1.44px;background:#ffffff;border-radius:50%"></div>
<div style="left:3034px;top:385px;width:79px;height:40px;background:rgba(62,62,62,0.5);"></div>
<div class="tx" style="left:2573.5px;width:1000px;text-align:center;top:390.6px;font-size:29.86px;font-family:'Liberation Sans';color:#e2e2e2;"><span id="t56">1.5</span></div>
<div style="left:3122px;top:326px;width:95px;height:99px;background:#3d3d3d;"></div>
<div style="left:3168.54px;top:363.04px;width:1.92px;height:1.92px;background:#ffffff;border-radius:50%"></div>
<div style="left:3130px;top:385px;width:79px;height:40px;background:rgba(62,62,62,0.5);"></div>
<div class="tx" style="left:2669.5px;width:1000px;text-align:center;top:390.6px;font-size:29.86px;font-family:'Liberation Sans';color:#e2e2e2;"><span id="t57">2</span></div>
<div style="left:3026px;top:426px;width:95px;height:99px;background:#3d3d3d;"></div>
<div style="left:3072.3px;top:462.8px;width:2.4px;height:2.4px;background:#ffffff;border-radius:50%"></div>
<div style="left:3034px;top:485px;width:79px;height:40px;background:rgba(62,62,62,0.5);"></div>
<div class="tx" style="left:2573.5px;width:1000px;text-align:center;top:490.6px;font-size:29.86px;font-family:'Liberation Sans';color:#e2e2e2;"><span id="t58">2.5</span></div>
<div style="left:3122px;top:426px;width:95px;height:99px;background:#3d3d3d;"></div>
<div style="left:3168.06px;top:462.56px;width:2.88px;height:2.88px;background:#ffffff;border-radius:50%"></div>
<div style="left:3130px;top:485px;width:79px;height:40px;background:rgba(62,62,62,0.5);"></div>
<div class="tx" style="left:2669.5px;width:1000px;text-align:center;top:490.6px;font-size:29.86px;font-family:'Liberation Sans';color:#e2e2e2;"><span id="t59">3</span></div>
<div style="left:3026px;top:526px;width:95px;height:99px;background:#3d3d3d;"></div>
<div style="left:3071.58px;top:562.08px;width:3.84px;height:3.84px;background:#ffffff;border-radius:50%"></div>
<div style="left:3034px;top:585px;width:79px;height:40px;background:rgba(62,62,62,0.5);"></div>
<div class="tx" style="left:2573.5px;width:1000px;text-align:center;top:590.6px;font-size:29.86px;font-family:'Liberation Sans';color:#e2e2e2;"><span id="t60">4</span></div>
<div style="left:3122px;top:526px;width:95px;height:99px;background:#3d3d3d;"></div>
<div style="left:3167.1px;top:561.6px;width:4.8px;height:4.8px;background:#ffffff;border-radius:50%"></div>
<div style="left:3130px;top:585px;width:79px;height:40px;background:rgba(62,62,62,0.5);"></div>
<div class="tx" style="left:2669.5px;width:1000px;text-align:center;top:590.6px;font-size:29.86px;font-family:'Liberation Sans';color:#e2e2e2;"><span id="t61">5</span></div>
<div style="left:3026px;top:626px;width:95px;height:99px;background:#5d6680;"></div>
<div style="left:3070.62px;top:661.12px;width:5.76px;height:5.76px;background:#ffffff;border-radius:50%"></div>
<div style="left:3034px;top:685px;width:79px;height:40px;background:rgba(62,68,84,0.0);"></div>
<div style="left:3060.5px;top:686px;width:26px;height:37px;background:#4f5568;"></div>
<div class="tx" style="left:2573.5px;width:1000px;text-align:center;top:690.6px;font-size:29.86px;font-family:'Liberation Sans';color:#e2e2e2;"><span id="t62">6</span></div>
<div style="left:3122px;top:626px;width:95px;height:99px;background:#3d3d3d;"></div>
<div style="left:3166.14px;top:660.64px;width:6.72px;height:6.72px;background:#ffffff;border-radius:50%"></div>
<div style="left:3130px;top:685px;width:79px;height:40px;background:rgba(62,62,62,0.5);"></div>
<div class="tx" style="left:2669.5px;width:1000px;text-align:center;top:690.6px;font-size:29.86px;font-family:'Liberation Sans';color:#e2e2e2;"><span id="t63">7</span></div>
<div style="left:3026px;top:726px;width:95px;height:99px;background:#3d3d3d;"></div>
<div style="left:3069.66px;top:760.16px;width:7.68px;height:7.68px;background:#ffffff;border-radius:50%"></div>
<div style="left:3034px;top:785px;width:79px;height:40px;background:rgba(62,62,62,0.5);"></div>
<div class="tx" style="left:2573.5px;width:1000px;text-align:center;top:790.6px;font-size:29.86px;font-family:'Liberation Sans';color:#e2e2e2;"><span id="t64">8</span></div>
<div style="left:3122px;top:726px;width:95px;height:99px;background:#3d3d3d;"></div>
<div style="left:3164.7px;top:759.2px;width:9.6px;height:9.6px;background:#ffffff;border-radius:50%"></div>
<div style="left:3130px;top:785px;width:79px;height:40px;background:rgba(62,62,62,0.5);"></div>
<div class="tx" style="left:2669.5px;width:1000px;text-align:center;top:790.6px;font-size:29.86px;font-family:'Liberation Sans';color:#e2e2e2;"><span id="t65">10</span></div>
<div style="left:3026px;top:826px;width:95px;height:99px;background:#3d3d3d;"></div>
<div style="left:3067.74px;top:858.24px;width:11.52px;height:11.52px;background:#ffffff;border-radius:50%"></div>
<div style="left:3034px;top:885px;width:79px;height:40px;background:rgba(62,62,62,0.5);"></div>
<div class="tx" style="left:2573.5px;width:1000px;text-align:center;top:890.6px;font-size:29.86px;font-family:'Liberation Sans';color:#e2e2e2;"><span id="t66">12</span></div>
<div style="left:3122px;top:826px;width:95px;height:99px;background:#3d3d3d;"></div>
<div style="left:3162.3px;top:856.8px;width:14.399999999999999px;height:14.399999999999999px;background:#ffffff;border-radius:50%"></div>
<div style="left:3130px;top:885px;width:79px;height:40px;background:rgba(62,62,62,0.5);"></div>
<div class="tx" style="left:2669.5px;width:1000px;text-align:center;top:890.6px;font-size:29.86px;font-family:'Liberation Sans';color:#e2e2e2;"><span id="t67">15</span></div>
<div style="left:3026px;top:926px;width:95px;height:99px;background:#3d3d3d;"></div>
<div style="left:3065.34px;top:955.84px;width:16.32px;height:16.32px;background:#ffffff;border-radius:50%"></div>
<div style="left:3034px;top:985px;width:79px;height:40px;background:rgba(62,62,62,0.5);"></div>
<div class="tx" style="left:2573.5px;width:1000px;text-align:center;top:990.6px;font-size:29.86px;font-family:'Liberation Sans';color:#e2e2e2;"><span id="t68">17</span></div>
<div style="left:3122px;top:926px;width:95px;height:99px;background:#3d3d3d;"></div>
<div style="left:3159.9px;top:954.4px;width:19.2px;height:19.2px;background:#ffffff;border-radius:50%"></div>
<div style="left:3130px;top:985px;width:79px;height:40px;background:rgba(62,62,62,0.5);"></div>
<div class="tx" style="left:2669.5px;width:1000px;text-align:center;top:990.6px;font-size:29.86px;font-family:'Liberation Sans';color:#e2e2e2;"><span id="t69">20</span></div>
<div style="left:3026px;top:1026px;width:95px;height:99px;background:#3d3d3d;"></div>
<div style="left:3061.5px;top:1052.0px;width:24.0px;height:24.0px;background:#ffffff;border-radius:50%"></div>
<div style="left:3034px;top:1085px;width:79px;height:40px;background:rgba(62,62,62,0.5);"></div>
<div class="tx" style="left:2573.5px;width:1000px;text-align:center;top:1090.6px;font-size:29.86px;font-family:'Liberation Sans';color:#e2e2e2;"><span id="t70">25</span></div>
<div style="left:3122px;top:1026px;width:95px;height:99px;background:#3d3d3d;"></div>
<div style="left:3155.1px;top:1049.6px;width:28.799999999999997px;height:28.799999999999997px;background:#ffffff;border-radius:50%"></div>
<div style="left:3130px;top:1085px;width:79px;height:40px;background:rgba(62,62,62,0.5);"></div>
<div class="tx" style="left:2669.5px;width:1000px;text-align:center;top:1090.6px;font-size:29.86px;font-family:'Liberation Sans';color:#e2e2e2;"><span id="t71">30</span></div>
<div style="left:3026px;top:1126px;width:95px;height:99px;background:#3d3d3d;"></div>
<div style="left:3054.3px;top:1144.8px;width:38.4px;height:38.4px;background:#ffffff;border-radius:50%"></div>
<div style="left:3034px;top:1185px;width:79px;height:40px;background:rgba(62,62,62,0.5);"></div>
<div class="tx" style="left:2573.5px;width:1000px;text-align:center;top:1190.6px;font-size:29.86px;font-family:'Liberation Sans';color:#e2e2e2;"><span id="t72">40</span></div>
<div style="left:3122px;top:1126px;width:95px;height:99px;background:#3d3d3d;"></div>
<div style="left:3145.5px;top:1140.0px;width:48.0px;height:48.0px;background:#ffffff;border-radius:50%"></div>
<div style="left:3130px;top:1185px;width:79px;height:40px;background:rgba(62,62,62,0.5);"></div>
<div class="tx" style="left:2669.5px;width:1000px;text-align:center;top:1190.6px;font-size:29.86px;font-family:'Liberation Sans';color:#e2e2e2;"><span id="t73">50</span></div>
<div style="left:3026px;top:1226px;width:95px;height:99px;background:#3d3d3d;"></div>
<div style="left:3044.7px;top:1235.2px;width:57.599999999999994px;height:57.599999999999994px;background:#ffffff;border-radius:50%"></div>
<div style="left:3034px;top:1285px;width:79px;height:40px;background:rgba(62,62,62,0.5);"></div>
<div class="tx" style="left:2573.5px;width:1000px;text-align:center;top:1290.6px;font-size:29.86px;font-family:'Liberation Sans';color:#e2e2e2;"><span id="t74">60</span></div>
<div style="left:3122px;top:1226px;width:95px;height:99px;background:#3d3d3d;"></div>
<div style="left:3139.0px;top:1233.5px;width:61px;height:61px;background:#ffffff;border-radius:50%"></div>
<div style="left:3130px;top:1285px;width:79px;height:40px;background:rgba(62,62,62,0.5);"></div>
<div class="tx" style="left:2669.5px;width:1000px;text-align:center;top:1290.6px;font-size:29.86px;font-family:'Liberation Sans';color:#e2e2e2;"><span id="t75">70</span></div>
<div style="left:3026px;top:1326px;width:95px;height:99px;background:#3d3d3d;"></div>
<div style="left:3043.0px;top:1333.5px;width:61px;height:61px;background:#ffffff;border-radius:50%"></div>
<div style="left:3034px;top:1385px;width:79px;height:40px;background:rgba(62,62,62,0.5);"></div>
<div class="tx" style="left:2573.5px;width:1000px;text-align:center;top:1390.6px;font-size:29.86px;font-family:'Liberation Sans';color:#e2e2e2;"><span id="t76">80</span></div>
<div style="left:3122px;top:1326px;width:95px;height:99px;background:#3d3d3d;"></div>
<div style="left:3139.0px;top:1333.5px;width:61px;height:61px;background:#ffffff;border-radius:50%"></div>
<div style="left:3130px;top:1385px;width:79px;height:40px;background:rgba(62,62,62,0.5);"></div>
<div class="tx" style="left:2669.5px;width:1000px;text-align:center;top:1390.6px;font-size:29.86px;font-family:'Liberation Sans';color:#e2e2e2;"><span id="t77">100</span></div>
<div style="left:3026px;top:1426px;width:95px;height:99px;background:#3d3d3d;"></div>
<div style="left:3043.0px;top:1433.5px;width:61px;height:61px;background:#ffffff;border-radius:50%"></div>
<div style="left:3034px;top:1485px;width:79px;height:40px;background:rgba(62,62,62,0.5);"></div>
<div class="tx" style="left:2573.5px;width:1000px;text-align:center;top:1490.6px;font-size:29.86px;font-family:'Liberation Sans';color:#e2e2e2;"><span id="t78">120</span></div>
<div style="left:3122px;top:1426px;width:95px;height:99px;background:#3d3d3d;"></div>
<div style="left:3139.0px;top:1433.5px;width:61px;height:61px;background:#ffffff;border-radius:50%"></div>
<div style="left:3130px;top:1485px;width:79px;height:40px;background:rgba(62,62,62,0.5);"></div>
<div class="tx" style="left:2669.5px;width:1000px;text-align:center;top:1490.6px;font-size:29.86px;font-family:'Liberation Sans';color:#e2e2e2;"><span id="t79">150</span></div>
<div style="left:3026px;top:1526px;width:95px;height:99px;background:#3d3d3d;"></div>
<div style="left:3043.0px;top:1533.5px;width:61px;height:61px;background:#ffffff;border-radius:50%"></div>
<div style="left:3034px;top:1585px;width:79px;height:40px;background:rgba(62,62,62,0.5);"></div>
<div class="tx" style="left:2573.5px;width:1000px;text-align:center;top:1590.6px;font-size:29.86px;font-family:'Liberation Sans';color:#e2e2e2;"><span id="t80">170</span></div>
<div style="left:3122px;top:1526px;width:95px;height:99px;background:#3d3d3d;"></div>
<div style="left:3139.0px;top:1533.5px;width:61px;height:61px;background:#ffffff;border-radius:50%"></div>
<div style="left:3130px;top:1585px;width:79px;height:40px;background:rgba(62,62,62,0.5);"></div>
<div class="tx" style="left:2669.5px;width:1000px;text-align:center;top:1590.6px;font-size:29.86px;font-family:'Liberation Sans';color:#e2e2e2;"><span id="t81">200</span></div>
<div style="left:3026px;top:1626px;width:95px;height:99px;background:#3d3d3d;"></div>
<div style="left:3043.0px;top:1633.5px;width:61px;height:61px;background:#ffffff;border-radius:50%"></div>
<div style="left:3034px;top:1685px;width:79px;height:40px;background:rgba(62,62,62,0.5);"></div>
<div class="tx" style="left:2573.5px;width:1000px;text-align:center;top:1690.6px;font-size:29.86px;font-family:'Liberation Sans';color:#e2e2e2;"><span id="t82">250</span></div>
<div style="left:3122px;top:1626px;width:95px;height:99px;background:#3d3d3d;"></div>
<div style="left:3139.0px;top:1633.5px;width:61px;height:61px;background:#ffffff;border-radius:50%"></div>
<div style="left:3130px;top:1685px;width:79px;height:40px;background:rgba(62,62,62,0.5);"></div>
<div class="tx" style="left:2669.5px;width:1000px;text-align:center;top:1690.6px;font-size:29.86px;font-family:'Liberation Sans';color:#e2e2e2;"><span id="t83">300</span></div>
<div style="left:3026px;top:1726px;width:95px;height:99px;background:#3d3d3d;"></div>
<div style="left:3043.0px;top:1733.5px;width:61px;height:61px;background:#ffffff;border-radius:50%"></div>
<div style="left:3034px;top:1785px;width:79px;height:40px;background:rgba(62,62,62,0.5);"></div>
<div class="tx" style="left:2573.5px;width:1000px;text-align:center;top:1790.6px;font-size:29.86px;font-family:'Liberation Sans';color:#e2e2e2;"><span id="t84">400</span></div>
<div style="left:3122px;top:1726px;width:95px;height:99px;background:#3d3d3d;"></div>
<div style="left:3139.0px;top:1733.5px;width:61px;height:61px;background:#ffffff;border-radius:50%"></div>
<div style="left:3130px;top:1785px;width:79px;height:40px;background:rgba(62,62,62,0.5);"></div>
<div class="tx" style="left:2669.5px;width:1000px;text-align:center;top:1790.6px;font-size:29.86px;font-family:'Liberation Sans';color:#e2e2e2;"><span id="t85">500</span></div>
<div style="left:3026px;top:1826px;width:95px;height:99px;background:#3d3d3d;"></div>
<div style="left:3043.0px;top:1833.5px;width:61px;height:61px;background:#ffffff;border-radius:50%"></div>
<div style="left:3034px;top:1885px;width:79px;height:40px;background:rgba(62,62,62,0.5);"></div>
<div class="tx" style="left:2573.5px;width:1000px;text-align:center;top:1890.6px;font-size:29.86px;font-family:'Liberation Sans';color:#e2e2e2;"><span id="t86">600</span></div>
<div style="left:3122px;top:1826px;width:95px;height:99px;background:#3d3d3d;"></div>
<div style="left:3139.0px;top:1833.5px;width:61px;height:61px;background:#ffffff;border-radius:50%"></div>
<div style="left:3130px;top:1885px;width:79px;height:40px;background:rgba(62,62,62,0.5);"></div>
<div class="tx" style="left:2669.5px;width:1000px;text-align:center;top:1890.6px;font-size:29.86px;font-family:'Liberation Sans';color:#e2e2e2;"><span id="t87">700</span></div>
<div style="left:3026px;top:1926px;width:95px;height:99px;background:#3d3d3d;"></div>
<div style="left:3043.0px;top:1933.5px;width:61px;height:61px;background:#ffffff;border-radius:50%"></div>
<div style="left:3034px;top:1985px;width:79px;height:40px;background:rgba(62,62,62,0.5);"></div>
<div class="tx" style="left:2573.5px;width:1000px;text-align:center;top:1990.6px;font-size:29.86px;font-family:'Liberation Sans';color:#e2e2e2;"><span id="t88">800</span></div>
<div style="left:3122px;top:1926px;width:95px;height:99px;background:#3d3d3d;"></div>
<div style="left:3139.0px;top:1933.5px;width:61px;height:61px;background:#ffffff;border-radius:50%"></div>
<div style="left:3130px;top:1985px;width:79px;height:40px;background:rgba(62,62,62,0.5);"></div>
<div class="tx" style="left:2669.5px;width:1000px;text-align:center;top:1990.6px;font-size:29.86px;font-family:'Liberation Sans';color:#e2e2e2;"><span id="t89">1000</span></div>
<div style="left:3026px;top:2026px;width:95px;height:99px;background:#3d3d3d;"></div>
<div style="left:3043.0px;top:2033.5px;width:61px;height:61px;background:#ffffff;border-radius:50%"></div>
<div style="left:3034px;top:2085px;width:79px;height:40px;background:rgba(62,62,62,0.5);"></div>
<div class="tx" style="left:2573.5px;width:1000px;text-align:center;top:2090.6px;font-size:29.86px;font-family:'Liberation Sans';color:#e2e2e2;"><span id="t90">1200</span></div>
<div style="left:3122px;top:2026px;width:95px;height:99px;background:#3d3d3d;"></div>
<div style="left:3139.0px;top:2033.5px;width:61px;height:61px;background:#ffffff;border-radius:50%"></div>
<div style="left:3130px;top:2085px;width:79px;height:40px;background:rgba(62,62,62,0.5);"></div>
<div class="tx" style="left:2669.5px;width:1000px;text-align:center;top:2090.6px;font-size:29.86px;font-family:'Liberation Sans';color:#e2e2e2;"><span id="t91">1500</span></div>
<div style="left:3024px;top:2036px;width:224px;height:2px;background:#3a3a3a;"></div>
<div style="left:3217px;top:226px;width:31px;height:1812px;background:#3a3a3a;"></div>
<div style="left:3217px;top:227px;width:30px;height:29px;background:#4e4e4e;"></div>
<svg style="left:3222px;top:231px;" width="20" height="20" viewBox="0 0 20 20"><path d="M4 13 L10 7 L16 13" fill="none" stroke="#b0b0b0" stroke-width="2"/></svg>
<div style="left:3220px;top:260px;width:24px;height:1575px;background:#555555;border-radius:12px"></div>
<div style="left:3217px;top:2006px;width:30px;height:30px;background:#4e4e4e;"></div>
<svg style="left:3222px;top:2011px;" width="20" height="20" viewBox="0 0 20 20"><path d="M4 7 L10 13 L16 7" fill="none" stroke="#b0b0b0" stroke-width="2"/></svg>
<div style="left:3248px;top:171px;width:37px;height:1867px;background:#3a3a3a;"></div>
<div style="left:3285px;top:171px;width:30px;height:1867px;background:#3d3d3d;"></div>
<div style="left:3285px;top:174px;width:30px;height:39px;background:#363636;"></div>
<svg style="left:3297px;top:183px;" width="28" height="26" viewBox="0 0 28 26"><path d="M4 6 L24 6 M4 14 L24 14 M4 22 L24 22" stroke="#8c8c8c" stroke-width="3"/></svg>
<div style="left:3285px;top:213px;width:30px;height:13px;background:#4a4a4a;"></div>
<div style="left:3285px;top:226px;width:30px;height:369px;background:#2e2e2e;"></div>
<div style="left:3287px;top:294px;width:28px;height:232px;background:#e8e4ea;"></div>
<div style="left:3285px;top:595px;width:30px;height:102px;background:#3c3c3c;"></div>
<div style="left:3289px;top:602px;width:30px;height:41px;background:#4a4a4a;box-sizing:border-box;border:1px solid #8a8a8a"></div>
<span id="t92" style="left:3292px;top:610.1px;font-size:30.43px;font-family:'Liberation Sans';color:#dedede;">66</span>
<div style="left:3289px;top:651px;width:30px;height:42px;background:#3a3a3a;box-sizing:border-box;border:1px solid #8a8a8a"></div>
<svg style="left:3289px;top:651px;" width="30" height="42" viewBox="0 0 30 42"><path d="M1 1 L20 1 L1 20 Z" fill="#555"/></svg>
<span id="t93" style="left:3299px;top:659.1px;font-size:30.43px;font-family:'Liberation Sans';color:#dedede;">0</span>
<div style="left:3285px;top:697px;width:30px;height:45px;background:#363636;"></div>
<svg style="left:3297px;top:711px;" width="28" height="26" viewBox="0 0 28 26"><path d="M4 6 L24 6 M4 14 L24 14 M4 22 L24 22" stroke="#8c8c8c" stroke-width="3"/></svg>
<div style="left:3285px;top:742px;width:30px;height:13px;background:#4a4a4a;"></div>
<div style="left:3285px;top:755px;width:30px;height:266px;background:#3c3c3c;"></div>
<div style="left:3290px;top:775px;width:14px;height:1.5px;background:#8a8a8a;"></div>
<span id="t94" style="left:3305px;top:761.4px;font-size:28.99px;font-family:'Liberation Sans';color:#dedede;">E</span>
<div style="left:3290px;top:867px;width:14px;height:1.5px;background:#8a8a8a;"></div>
<span id="t95" style="left:3305px;top:853.4px;font-size:28.99px;font-family:'Liberation Sans';color:#dedede;">E</span>
<div style="left:3285px;top:1021px;width:30px;height:44px;background:#363636;"></div>
<svg style="left:3297px;top:1033px;" width="28" height="26" viewBox="0 0 28 26"><path d="M4 6 L24 6 M4 14 L24 14 M4 22 L24 22" stroke="#8c8c8c" stroke-width="3"/></svg>
<div style="left:3285px;top:1065px;width:30px;height:13px;background:#4a4a4a;"></div>
<div style="left:3285px;top:1078px;width:30px;height:159px;background:#4a4a4a;"></div>
<div style="left:3290px;top:1080px;width:25px;height:50px;background:#555;box-sizing:border-box;border:1.5px solid #8a8a8a;border-radius:3px"></div>
<div style="left:3292px;top:1140px;width:23px;height:35px;background:#8a8a8a;border-radius:4px"></div>
<div style="left:3306px;top:1190px;width:9px;height:35px;background:none;box-sizing:border-box;border:2.5px solid #8a8a8a;border-radius:3px"></div>
<div style="left:3285px;top:1237px;width:30px;height:83px;background:#3c3c3c;"></div>
<div style="left:3285px;top:1318px;width:30px;height:2.5px;background:#222;"></div>
<svg style="left:3289px;top:1267px;" width="26" height="26" viewBox="0 0 26 26"><path d="M2 16 Q12 2 26 8" fill="none" stroke="#b4b4b4" stroke-width="2.5"/><circle cx="20" cy="15" r="8" fill="#b4b4b4"/></svg>
<div style="left:3285px;top:1320px;width:30px;height:83px;background:#3c3c3c;"></div>
<div style="left:3285px;top:1401px;width:30px;height:2.5px;background:#222;"></div>
<svg style="left:3289px;top:1350px;" width="26" height="26" viewBox="0 0 26 26"><path d="M2 16 Q12 2 26 8" fill="none" stroke="#b4b4b4" stroke-width="2.5"/><circle cx="20" cy="15" r="8" fill="#b4b4b4"/></svg>
<div style="left:3285px;top:1403px;width:30px;height:83px;background:#3c3c3c;"></div>
<div style="left:3285px;top:1484px;width:30px;height:2.5px;background:#222;"></div>
<svg style="left:3289px;top:1433px;" width="26" height="26" viewBox="0 0 26 26"><path d="M2 16 Q12 2 26 8" fill="none" stroke="#b4b4b4" stroke-width="2.5"/><circle cx="20" cy="15" r="8" fill="#b4b4b4"/></svg>
<div style="left:3285px;top:1486px;width:30px;height:84px;background:#3c3c3c;"></div>
<div style="left:3295px;top:1510px;width:22px;height:34px;background:none;box-sizing:border-box;border:2px solid #2a2a2a;border-radius:3px"></div>
<div style="left:3285px;top:1570px;width:30px;height:84px;background:#ff10c8;"></div>
<div style="left:3295px;top:1592px;width:22px;height:34px;background:none;box-sizing:border-box;border:2px solid #a0087c;border-radius:3px"></div>
<div style="left:3285px;top:1653px;width:30px;height:2px;background:#222;"></div>
<div style="left:3285px;top:1655px;width:30px;height:84px;background:#3c3c3c;"></div>
<svg style="left:3289px;top:1685px;" width="26" height="26" viewBox="0 0 26 26"><path d="M2 16 Q12 2 26 8" fill="none" stroke="#b4b4b4" stroke-width="2.5"/><circle cx="20" cy="15" r="8" fill="#b4b4b4"/></svg>
<div style="left:3285px;top:1737px;width:30px;height:2.5px;background:#222;"></div>
<div style="left:3285px;top:1740px;width:30px;height:290px;background:#3c3c3c;"></div>
<div style="left:3285px;top:2028px;width:30px;height:10px;background:#4a4a4a;"></div>
<div style="left:0px;top:2037px;width:3315px;height:2px;background:#161414;"></div>
<div style="left:0px;top:2039px;width:3315px;height:2px;background:linear-gradient(90deg,#5a4040 0px,#4a4646 1100px,#4a4a4a 1400px);"></div>
<div style="left:0px;top:2041px;width:3315px;height:4px;background:linear-gradient(90deg,#3e1a1a 0px,#3a2222 500px,#2a2424 1100px,#262626 1400px);"></div>
</body></html>
